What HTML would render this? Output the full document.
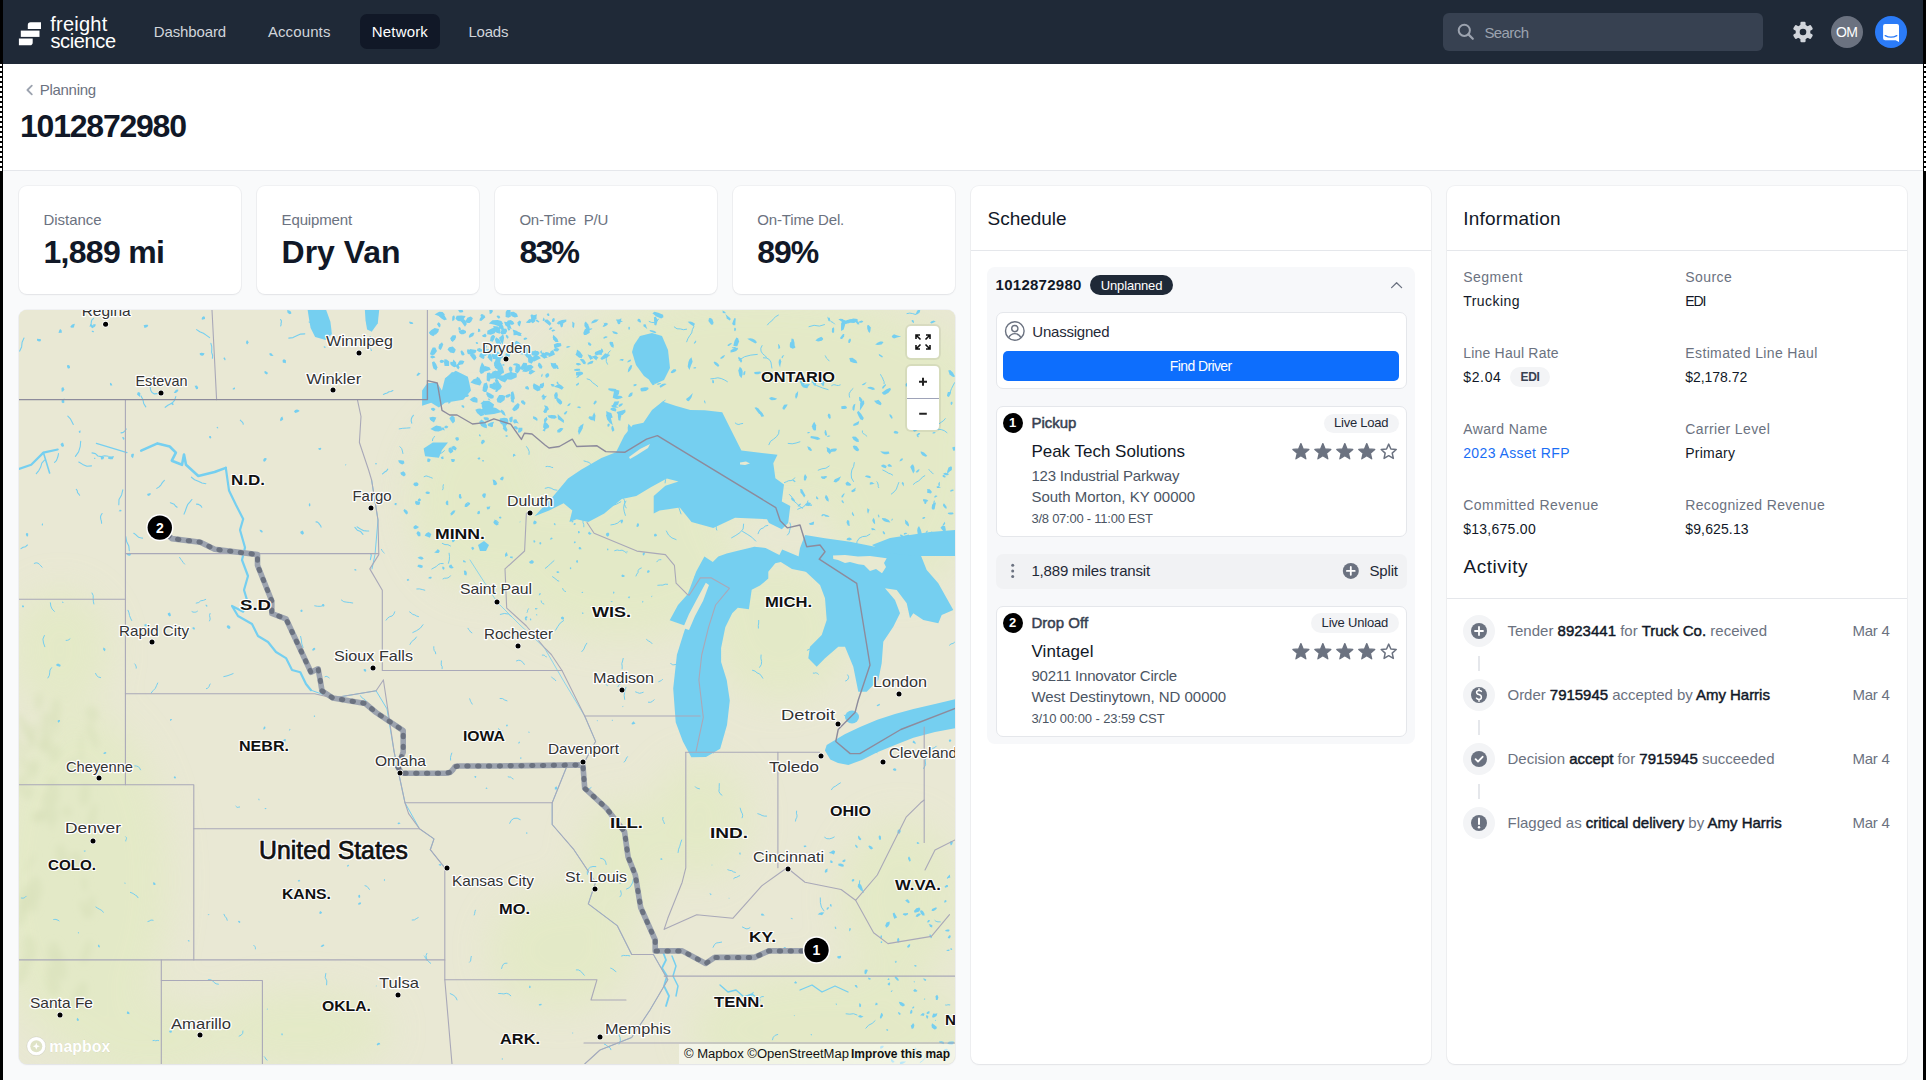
<!DOCTYPE html>
<html><head><meta charset="utf-8">
<style>
*{box-sizing:border-box;margin:0;padding:0}
html,body{width:1926px;height:1080px;overflow:hidden;background:#000;font-family:"Liberation Sans",sans-serif}
#pg{position:absolute;left:3px;top:0;width:1920px;height:1080px;background:#f9fafb;overflow:hidden}
.a{position:absolute}
.t{position:absolute;white-space:pre;font-family:"Liberation Sans",sans-serif}
.card{position:absolute;background:#fff;border-radius:8px;box-shadow:0 0 0 1px rgba(17,24,39,0.04),0 1px 2px rgba(17,24,39,0.06)}
</style></head><body>
<div id="pg"></div>
<!-- everything positioned in page (screenshot) coordinates -->
<div class="a" style="left:0;top:0;width:1926px;height:1080px">
  <!-- header -->
  <div class="a" style="left:3px;top:0;width:1920px;height:64px;background:#1f2937"></div>
  <!-- logo mark -->
  <svg class="a" style="left:0;top:0" width="60" height="64" viewBox="0 0 60 64">
    <path d="M30.6 22.3 H41 V28.9 H27.8 V25.1 A2.8 2.8 0 0 1 30.6 22.3 Z" fill="#fff"/>
    <rect x="20.8" y="30.6" width="18.7" height="6.3" fill="#fff"/>
    <path d="M18.9 38.6 H32.7 V42.4 A2.8 2.8 0 0 1 29.9 45.2 H18.9 Z" fill="#fff"/>
  </svg>
  <div class="a" style="left:360px;top:14px;width:80px;height:35px;border-radius:7px;background:#111827"></div>
  <!-- search -->
  <div class="a" style="left:1443px;top:13px;width:320px;height:38px;border-radius:6px;background:#374151"></div>
  <svg class="a" style="left:1456px;top:22px" width="20" height="20" viewBox="0 0 20 20">
    <circle cx="8.3" cy="8.3" r="5.6" fill="none" stroke="#9ca3af" stroke-width="2"/>
    <line x1="12.4" y1="12.4" x2="16.8" y2="16.8" stroke="#9ca3af" stroke-width="2.2" stroke-linecap="round"/>
  </svg>
  <!-- gear -->
  <svg class="a" style="left:1792px;top:21px" width="22" height="22" viewBox="-11 -11 22 22">
    <g fill="#d1d5db"><rect x="-2.6" y="-10.2" width="5.2" height="5" rx="1.2" transform="rotate(0)"/><rect x="-2.6" y="-10.2" width="5.2" height="5" rx="1.2" transform="rotate(60)"/><rect x="-2.6" y="-10.2" width="5.2" height="5" rx="1.2" transform="rotate(120)"/><rect x="-2.6" y="-10.2" width="5.2" height="5" rx="1.2" transform="rotate(180)"/><rect x="-2.6" y="-10.2" width="5.2" height="5" rx="1.2" transform="rotate(240)"/><rect x="-2.6" y="-10.2" width="5.2" height="5" rx="1.2" transform="rotate(300)"/><circle r="7.4"/></g>
    <circle r="3.3" fill="#1f2937"/>
  </svg>
  <!-- avatar -->
  <div class="a" style="left:1831px;top:16px;width:32px;height:32px;border-radius:50%;background:#6b7280"></div>
  <!-- chat -->
  <div class="a" style="left:1875px;top:16px;width:32px;height:32px;border-radius:50%;background:#2b7bf7"></div>
  <svg class="a" style="left:1875px;top:16px" width="32" height="32" viewBox="0 0 32 32">
    <path d="M8.1 9.9 Q8.1 7.9 10.1 7.9 H22 Q24 7.9 24 9.9 V26.1 L20.6 24.2 H10.1 Q8.1 24.2 8.1 22.2 Z" fill="#fff"/>
    <path d="M10.2 19.6 Q16 22.8 21.8 19.6" fill="none" stroke="#2b7bf7" stroke-width="1.3" stroke-linecap="round"/>
  </svg>

  <!-- page header -->
  <div class="a" style="left:3px;top:64px;width:1920px;height:107px;background:#fff;border-bottom:1px solid #e5e7eb"></div>
  <div class="a" style="left:0;top:64px;width:3px;height:108px;background:#fff"></div><div class="a" style="left:2px;top:64px;width:1px;height:108px;background:#000"></div><div class="a" style="left:0;top:66px;width:2px;height:106px;background:repeating-linear-gradient(180deg,#000 0 2px,transparent 2px 5px)"></div><div class="a" style="left:1923px;top:64px;width:3px;height:108px;background:#fff"></div><div class="a" style="left:1923px;top:64px;width:1px;height:108px;background:#000"></div><div class="a" style="left:1924px;top:66px;width:2px;height:106px;background:repeating-linear-gradient(180deg,#000 0 2px,transparent 2px 5px)"></div>
  <svg class="a" style="left:22px;top:82px" width="14" height="16" viewBox="0 0 14 16">
    <path d="M9.8 3.6 L5.4 8 L9.8 12.4" fill="none" stroke="#9ca3af" stroke-width="1.8" stroke-linecap="round" stroke-linejoin="round"/>
  </svg>

  <!-- stat cards -->
  <div class="card" style="left:19px;top:186px;width:222px;height:108px"></div>
  <div class="card" style="left:257px;top:186px;width:222px;height:108px"></div>
  <div class="card" style="left:495px;top:186px;width:222px;height:108px"></div>
  <div class="card" style="left:733px;top:186px;width:222px;height:108px"></div>

  <!-- map card -->
  <div class="card" style="left:19px;top:310px;width:936px;height:754px;overflow:hidden;background:#e8e9d1">
    <svg style="position:absolute;left:0;top:0" width="936" height="754" viewBox="19 310 936 754" font-family="Liberation Sans, sans-serif"><rect x="19" y="310" width="936" height="754" fill="#e9e8d4"/><defs><filter id="blur" x="-50%" y="-50%" width="200%" height="200%"><feGaussianBlur stdDeviation="18"/></filter><filter id="blur2" x="-50%" y="-50%" width="200%" height="200%"><feGaussianBlur stdDeviation="3"/></filter></defs><g filter="url(#blur)" opacity="0.75"><ellipse cx="760" cy="400" rx="230" ry="110" fill="#e2eac3"/><ellipse cx="620" cy="560" rx="120" ry="80" fill="#e2eac3"/><ellipse cx="780" cy="630" rx="70" ry="70" fill="#e2eac3"/><ellipse cx="480" cy="500" rx="70" ry="90" fill="#e2eac3"/><ellipse cx="900" cy="470" rx="80" ry="120" fill="#e2eac3"/><ellipse cx="560" cy="950" rx="70" ry="60" fill="#e2eac3"/><ellipse cx="830" cy="1030" rx="140" ry="60" fill="#e2eac3"/><ellipse cx="900" cy="900" rx="60" ry="80" fill="#e2eac3"/><ellipse cx="620" cy="860" rx="40" ry="60" fill="#e2eac3"/><ellipse cx="300" cy="1030" rx="90" ry="40" fill="#e2eac3"/><ellipse cx="700" cy="820" rx="50" ry="60" fill="#e2eac3"/><ellipse cx="80" cy="880" rx="90" ry="170" fill="#e2eac3"/><ellipse cx="60" cy="650" rx="50" ry="60" fill="#e2eac3"/><ellipse cx="150" cy="1040" rx="80" ry="40" fill="#e2eac3"/></g><g filter="url(#blur2)"><ellipse cx="43.3" cy="745.3" rx="5.3" ry="5.9" fill="#d8dfb9" opacity="0.5" transform="rotate(2 43.3 745.3)"/><ellipse cx="46.4" cy="717.4" rx="4.5" ry="5.4" fill="#d8dfb9" opacity="0.5" transform="rotate(-4 46.4 717.4)"/><ellipse cx="24.2" cy="727.2" rx="4.1" ry="14.9" fill="#d8dfb9" opacity="0.5" transform="rotate(-23 24.2 727.2)"/><ellipse cx="35.7" cy="888.2" rx="6.7" ry="11.9" fill="#d8dfb9" opacity="0.5" transform="rotate(-6 35.7 888.2)"/><ellipse cx="92.2" cy="714.0" rx="6.3" ry="8.5" fill="#d8dfb9" opacity="0.5" transform="rotate(-21 92.2 714.0)"/><ellipse cx="27.8" cy="792.5" rx="6.1" ry="7.2" fill="#d8dfb9" opacity="0.5" transform="rotate(5 27.8 792.5)"/><ellipse cx="66.9" cy="811.7" rx="4.7" ry="5.8" fill="#d8dfb9" opacity="0.5" transform="rotate(-26 66.9 811.7)"/><ellipse cx="34.4" cy="904.1" rx="4.1" ry="8.8" fill="#d8dfb9" opacity="0.5" transform="rotate(5 34.4 904.1)"/><ellipse cx="53.0" cy="789.9" rx="6.0" ry="13.4" fill="#d8dfb9" opacity="0.5" transform="rotate(-15 53.0 789.9)"/><ellipse cx="62.1" cy="857.6" rx="6.4" ry="13.8" fill="#d8dfb9" opacity="0.5" transform="rotate(-13 62.1 857.6)"/><ellipse cx="92.5" cy="735.4" rx="4.1" ry="14.1" fill="#d8dfb9" opacity="0.5" transform="rotate(-21 92.5 735.4)"/><ellipse cx="55.7" cy="711.8" rx="5.3" ry="14.2" fill="#d8dfb9" opacity="0.5" transform="rotate(4 55.7 711.8)"/><ellipse cx="84.7" cy="794.1" rx="5.5" ry="12.1" fill="#d8dfb9" opacity="0.5" transform="rotate(5 84.7 794.1)"/><ellipse cx="53.2" cy="952.0" rx="6.7" ry="10.7" fill="#d8dfb9" opacity="0.5" transform="rotate(10 53.2 952.0)"/><ellipse cx="23.6" cy="910.4" rx="5.2" ry="16.9" fill="#d8dfb9" opacity="0.5" transform="rotate(19 23.6 910.4)"/><ellipse cx="40.3" cy="815.7" rx="5.3" ry="5.3" fill="#d8dfb9" opacity="0.5" transform="rotate(-2 40.3 815.7)"/><ellipse cx="31.6" cy="735.1" rx="2.3" ry="14.2" fill="#d8dfb9" opacity="0.5" transform="rotate(-22 31.6 735.1)"/><ellipse cx="37.6" cy="817.3" rx="6.4" ry="6.0" fill="#d8dfb9" opacity="0.5" transform="rotate(-3 37.6 817.3)"/><ellipse cx="60.2" cy="965.0" rx="6.1" ry="15.4" fill="#d8dfb9" opacity="0.5" transform="rotate(-13 60.2 965.0)"/><ellipse cx="50.1" cy="807.6" rx="6.4" ry="16.5" fill="#d8dfb9" opacity="0.5" transform="rotate(-21 50.1 807.6)"/><ellipse cx="32.2" cy="769.6" rx="3.2" ry="10.8" fill="#d8dfb9" opacity="0.5" transform="rotate(5 32.2 769.6)"/><ellipse cx="38.7" cy="701.2" rx="4.1" ry="9.4" fill="#d8dfb9" opacity="0.5" transform="rotate(4 38.7 701.2)"/><ellipse cx="90.5" cy="907.1" rx="4.6" ry="12.4" fill="#d8dfb9" opacity="0.5" transform="rotate(11 90.5 907.1)"/><ellipse cx="23.0" cy="969.9" rx="5.9" ry="15.5" fill="#d8dfb9" opacity="0.5" transform="rotate(18 23.0 969.9)"/><ellipse cx="48.4" cy="819.7" rx="2.5" ry="12.6" fill="#d8dfb9" opacity="0.5" transform="rotate(-26 48.4 819.7)"/><ellipse cx="24.1" cy="762.6" rx="2.8" ry="9.1" fill="#d8dfb9" opacity="0.5" transform="rotate(-27 24.1 762.6)"/><ellipse cx="19.0" cy="745.4" rx="2.5" ry="9.4" fill="#d8dfb9" opacity="0.5" transform="rotate(-28 19.0 745.4)"/><ellipse cx="84.6" cy="884.2" rx="2.7" ry="8.0" fill="#d8dfb9" opacity="0.5" transform="rotate(-9 84.6 884.2)"/><ellipse cx="46.3" cy="736.9" rx="6.2" ry="16.9" fill="#d8dfb9" opacity="0.5" transform="rotate(-2 46.3 736.9)"/><ellipse cx="55.3" cy="725.8" rx="2.5" ry="9.1" fill="#d8dfb9" opacity="0.5" transform="rotate(-14 55.3 725.8)"/><ellipse cx="81.2" cy="748.4" rx="2.1" ry="16.4" fill="#d8dfb9" opacity="0.5" transform="rotate(2 81.2 748.4)"/><ellipse cx="30.0" cy="863.0" rx="2.1" ry="11.3" fill="#d8dfb9" opacity="0.5" transform="rotate(29 30.0 863.0)"/><ellipse cx="83.7" cy="908.9" rx="3.3" ry="9.4" fill="#d8dfb9" opacity="0.5" transform="rotate(-20 83.7 908.9)"/><ellipse cx="76.9" cy="859.8" rx="5.9" ry="9.0" fill="#d8dfb9" opacity="0.5" transform="rotate(-17 76.9 859.8)"/><ellipse cx="79.9" cy="995.5" rx="6.3" ry="14.7" fill="#d8dfb9" opacity="0.5" transform="rotate(19 79.9 995.5)"/><ellipse cx="74.5" cy="768.0" rx="4.6" ry="9.3" fill="#d8dfb9" opacity="0.5" transform="rotate(-28 74.5 768.0)"/><ellipse cx="21.1" cy="783.8" rx="3.3" ry="13.3" fill="#d8dfb9" opacity="0.5" transform="rotate(27 21.1 783.8)"/><ellipse cx="52.5" cy="981.1" rx="6.9" ry="16.5" fill="#d8dfb9" opacity="0.5" transform="rotate(-8 52.5 981.1)"/><ellipse cx="35.5" cy="768.1" rx="3.0" ry="7.5" fill="#d8dfb9" opacity="0.5" transform="rotate(7 35.5 768.1)"/><ellipse cx="86.5" cy="952.1" rx="4.4" ry="12.8" fill="#d8dfb9" opacity="0.5" transform="rotate(18 86.5 952.1)"/><ellipse cx="25.4" cy="898.2" rx="6.5" ry="14.4" fill="#d8dfb9" opacity="0.5" transform="rotate(15 25.4 898.2)"/><ellipse cx="54.9" cy="753.6" rx="5.9" ry="9.0" fill="#d8dfb9" opacity="0.5" transform="rotate(18 54.9 753.6)"/><ellipse cx="91.9" cy="818.8" rx="4.0" ry="16.4" fill="#d8dfb9" opacity="0.5" transform="rotate(13 91.9 818.8)"/><ellipse cx="31.8" cy="738.1" rx="2.8" ry="15.9" fill="#d8dfb9" opacity="0.5" transform="rotate(18 31.8 738.1)"/><ellipse cx="30.0" cy="948.0" rx="6.9" ry="12.9" fill="#d8dfb9" opacity="0.5" transform="rotate(-9 30.0 948.0)"/></g><path d="M489.3,381.8 L486.7,380.5 L486.7,376.6 L487.1,373.1 L489.7,372.4 L492.2,375.5 L490.5,378.9Z" fill="#75cff0" /><path d="M467.9,323.0 L465.0,322.3 L467.3,317.8 L470.8,316.6 L472.9,318.2 L471.3,321.4 L469.6,322.9Z" fill="#75cff0" /><path d="M499.6,318.0 L498.9,318.7 L497.6,317.7 L496.5,316.0 L497.7,315.5 L499.3,315.8 L500.3,317.3Z" fill="#75cff0" /><path d="M512.8,364.9 L514.2,363.4 L516.7,363.2 L517.9,364.3 L517.8,365.4 L516.6,366.1 L515.2,365.6Z" fill="#75cff0" /><path d="M531.7,363.7 L528.3,362.3 L528.0,358.1 L527.7,355.6 L529.3,352.6 L531.7,356.3 L533.7,360.6Z" fill="#75cff0" /><path d="M479.4,320.6 L479.8,318.8 L481.0,316.9 L484.2,314.9 L485.4,317.2 L483.0,319.6 L481.2,321.0Z" fill="#75cff0" /><path d="M446.9,319.5 L444.2,320.2 L441.5,318.4 L438.6,316.0 L441.3,315.1 L443.8,314.2 L445.4,316.9Z" fill="#75cff0" /><path d="M481.8,335.8 L483.4,334.7 L485.2,333.6 L486.2,334.9 L486.6,335.9 L485.5,337.3 L483.2,336.9Z" fill="#75cff0" /><path d="M444.8,430.6 L443.2,430.1 L442.0,429.2 L441.9,428.1 L442.4,427.5 L443.7,427.4 L444.3,428.9Z" fill="#75cff0" /><path d="M505.3,355.0 L506.0,353.3 L508.7,352.2 L510.0,353.8 L510.1,354.9 L509.3,356.9 L506.1,356.7Z" fill="#75cff0" /><path d="M459.5,333.3 L458.6,330.8 L463.0,329.4 L466.0,330.9 L465.9,333.1 L463.3,334.3 L461.1,334.2Z" fill="#75cff0" /><path d="M558.5,342.1 L555.5,341.9 L553.2,339.4 L552.8,337.3 L553.2,334.8 L555.9,337.2 L557.5,338.9Z" fill="#75cff0" /><path d="M505.7,415.9 L502.8,414.4 L501.4,412.7 L500.5,410.8 L501.5,409.4 L503.5,411.0 L504.7,412.7Z" fill="#75cff0" /><path d="M479.0,380.9 L477.5,380.6 L476.6,378.8 L476.6,377.2 L477.7,376.8 L478.5,378.1 L478.7,379.1Z" fill="#75cff0" /><path d="M430.0,419.5 L429.4,417.5 L432.9,416.8 L436.3,417.5 L435.4,419.8 L433.9,422.4 L430.9,420.6Z" fill="#75cff0" /><path d="M497.4,402.3 L496.6,399.2 L499.2,394.9 L502.6,395.1 L505.2,395.9 L504.6,399.9 L500.6,403.1Z" fill="#75cff0" /><path d="M483.1,409.6 L481.8,406.8 L481.7,403.2 L483.9,400.3 L485.6,402.5 L487.4,404.5 L486.3,409.3Z" fill="#75cff0" /><path d="M542.4,399.5 L542.3,397.7 L543.3,395.4 L545.1,395.9 L547.0,395.8 L545.4,397.8 L544.2,399.7Z" fill="#75cff0" /><path d="M492.6,341.8 L490.0,340.9 L490.7,337.0 L491.9,335.6 L493.4,334.7 L495.2,336.6 L494.0,339.4Z" fill="#75cff0" /><path d="M452.9,423.5 L450.9,420.9 L449.4,418.2 L450.9,416.4 L452.4,415.4 L454.6,417.2 L455.0,421.3Z" fill="#75cff0" /><path d="M545.7,358.1 L544.2,358.8 L541.7,356.8 L541.3,353.5 L543.4,352.5 L546.3,353.7 L546.5,356.8Z" fill="#75cff0" /><path d="M453.7,365.4 L452.5,366.1 L450.7,364.9 L450.3,363.4 L450.4,361.8 L452.7,362.1 L453.8,364.1Z" fill="#75cff0" /><path d="M444.9,314.5 L442.3,316.4 L438.6,315.9 L434.6,314.6 L437.4,312.7 L439.3,311.8 L442.6,312.1Z" fill="#75cff0" /><path d="M434.5,410.2 L434.1,411.3 L432.2,410.5 L430.9,409.2 L431.5,408.0 L433.4,407.8 L435.6,409.0Z" fill="#75cff0" /><path d="M520.5,334.9 L519.8,336.1 L517.2,335.3 L517.0,333.4 L517.5,332.2 L519.3,332.2 L521.8,333.6Z" fill="#75cff0" /><path d="M499.3,388.5 L496.3,387.8 L495.9,383.7 L494.6,379.6 L497.5,379.2 L499.1,382.6 L500.2,385.4Z" fill="#75cff0" /><path d="M510.6,422.6 L509.3,420.9 L509.3,417.9 L511.1,416.7 L512.7,416.7 L512.6,419.0 L512.4,421.5Z" fill="#75cff0" /><path d="M540.4,390.2 L537.4,391.2 L533.4,388.8 L532.9,385.6 L533.8,383.3 L537.1,384.9 L540.5,387.0Z" fill="#75cff0" /><path d="M541.6,353.5 L540.5,353.2 L540.2,351.6 L540.8,351.0 L541.5,349.9 L541.8,351.5 L542.5,352.9Z" fill="#75cff0" /><path d="M455.1,351.5 L454.0,353.2 L450.2,352.4 L447.5,349.5 L449.1,347.2 L452.8,346.5 L455.7,349.5Z" fill="#75cff0" /><path d="M553.2,322.1 L552.0,321.8 L552.0,319.7 L553.0,318.3 L554.3,317.9 L554.8,319.9 L554.2,321.5Z" fill="#75cff0" /><path d="M484.2,415.0 L480.8,416.3 L477.0,413.0 L475.3,409.8 L477.7,408.8 L480.5,408.5 L483.2,411.4Z" fill="#75cff0" /><path d="M508.5,317.7 L505.6,316.9 L505.7,312.1 L507.6,309.0 L510.4,308.4 L510.6,312.7 L510.9,316.5Z" fill="#75cff0" /><path d="M486.8,428.2 L483.9,427.4 L481.2,425.9 L479.1,421.9 L481.4,419.6 L485.2,422.2 L486.9,425.4Z" fill="#75cff0" /><path d="M460.1,386.4 L456.0,386.1 L453.3,385.8 L451.5,383.8 L451.0,380.9 L455.0,381.6 L458.0,383.3Z" fill="#75cff0" /><path d="M514.3,324.1 L511.8,324.7 L509.3,324.0 L506.8,322.2 L507.8,320.4 L510.7,320.3 L513.4,321.8Z" fill="#75cff0" /><path d="M497.9,331.3 L497.3,330.0 L497.6,328.0 L499.1,327.0 L500.5,327.2 L499.9,329.2 L499.3,331.1Z" fill="#75cff0" /><path d="M537.2,421.1 L535.2,419.8 L533.2,418.8 L533.0,416.3 L534.9,416.8 L536.1,417.3 L537.6,419.1Z" fill="#75cff0" /><path d="M465.0,326.8 L462.8,323.8 L461.2,321.4 L461.3,317.6 L463.8,319.2 L465.5,320.5 L466.8,324.0Z" fill="#75cff0" /><path d="M548.4,428.3 L547.6,427.3 L547.2,425.7 L548.1,425.0 L548.8,425.2 L549.2,426.0 L549.0,426.9Z" fill="#75cff0" /><path d="M504.0,372.9 L502.6,373.6 L499.7,373.7 L497.3,371.0 L498.6,368.8 L501.9,370.3 L503.4,371.4Z" fill="#75cff0" /><path d="M555.7,368.8 L553.3,368.7 L551.3,365.9 L550.6,362.7 L553.1,363.2 L555.6,363.1 L557.6,366.9Z" fill="#75cff0" /><path d="M454.4,367.3 L452.7,366.6 L451.0,364.3 L452.3,362.6 L453.5,359.5 L456.1,362.5 L456.6,366.6Z" fill="#75cff0" /><path d="M541.0,388.2 L539.3,387.3 L540.1,384.1 L541.9,383.4 L543.9,382.6 L544.1,385.4 L542.8,388.1Z" fill="#75cff0" /><path d="M531.0,360.6 L531.7,357.4 L535.8,355.1 L539.0,356.2 L540.9,358.2 L537.2,360.1 L534.3,361.4Z" fill="#75cff0" /><path d="M489.7,313.9 L489.5,312.0 L489.3,309.6 L491.3,308.5 L492.4,309.7 L492.9,311.4 L491.4,313.4Z" fill="#75cff0" /><path d="M496.8,361.9 L495.1,358.8 L496.2,353.6 L499.7,354.0 L502.7,353.0 L503.1,357.1 L500.0,359.8Z" fill="#75cff0" /><path d="M482.7,317.3 L481.9,317.3 L480.4,316.1 L480.9,314.5 L482.0,314.1 L483.6,314.8 L483.7,316.9Z" fill="#75cff0" /><path d="M563.8,387.6 L561.9,389.8 L558.4,388.0 L554.0,386.8 L556.9,385.1 L559.1,383.9 L561.6,385.6Z" fill="#75cff0" /><path d="M493.0,383.6 L493.3,382.7 L494.6,382.3 L495.6,382.8 L495.6,383.5 L495.0,384.3 L493.5,384.3Z" fill="#75cff0" /><path d="M468.8,396.1 L467.8,396.8 L466.4,397.0 L464.2,396.7 L464.9,395.3 L466.2,394.0 L468.7,394.7Z" fill="#75cff0" /><path d="M442.6,430.1 L438.7,431.4 L434.9,431.2 L430.4,429.0 L433.5,426.9 L436.2,425.6 L441.1,426.5Z" fill="#75cff0" /><path d="M519.6,369.1 L521.4,366.0 L523.2,362.8 L526.8,362.9 L527.2,365.2 L525.5,367.4 L522.7,369.9Z" fill="#75cff0" /><path d="M446.6,366.1 L444.6,365.9 L444.0,362.7 L444.4,359.2 L446.7,359.6 L449.2,361.5 L449.1,366.0Z" fill="#75cff0" /><path d="M523.4,339.3 L524.0,338.1 L525.5,337.6 L526.5,337.8 L527.4,338.5 L526.2,339.5 L524.6,339.9Z" fill="#75cff0" /><path d="M514.3,402.4 L512.6,402.5 L510.7,401.1 L511.3,399.8 L511.7,399.3 L512.8,399.4 L513.8,400.6Z" fill="#75cff0" /><path d="M513.1,322.8 L512.9,324.6 L509.8,324.2 L507.6,322.5 L508.6,320.9 L510.8,320.2 L512.8,321.5Z" fill="#75cff0" /><path d="M477.6,400.1 L477.4,402.7 L473.0,402.0 L469.7,399.7 L472.0,397.8 L474.4,396.8 L477.2,398.2Z" fill="#75cff0" /><path d="M532.1,354.4 L532.8,352.5 L536.2,351.6 L539.7,352.8 L538.4,355.1 L536.1,356.2 L533.8,355.5Z" fill="#75cff0" /><path d="M543.4,321.0 L542.6,320.4 L543.0,319.0 L543.6,317.5 L544.3,318.5 L544.6,319.3 L544.4,320.7Z" fill="#75cff0" /><path d="M438.8,349.1 L438.5,347.1 L439.3,344.6 L442.0,342.3 L443.2,344.4 L442.3,346.9 L440.8,350.1Z" fill="#75cff0" /><path d="M499.7,421.4 L499.7,418.5 L504.2,417.7 L507.2,418.2 L508.0,420.3 L506.4,423.6 L501.1,424.2Z" fill="#75cff0" /><path d="M463.3,355.6 L461.8,355.3 L461.0,353.5 L460.5,351.4 L461.9,350.3 L463.5,352.2 L464.7,354.6Z" fill="#75cff0" /><path d="M500.1,332.4 L501.3,330.6 L503.1,328.5 L506.3,328.8 L507.2,330.9 L505.6,333.9 L501.3,334.3Z" fill="#75cff0" /><path d="M532.9,319.0 L532.9,317.7 L533.8,315.3 L536.9,314.3 L536.5,316.9 L536.6,318.9 L534.1,319.5Z" fill="#75cff0" /><path d="M529.0,389.6 L527.3,389.6 L525.4,388.8 L525.2,387.1 L525.9,386.4 L527.6,386.0 L529.0,387.9Z" fill="#75cff0" /><path d="M491.0,378.6 L491.4,375.2 L492.4,371.8 L495.7,370.6 L498.0,371.7 L497.2,375.4 L494.2,378.4Z" fill="#75cff0" /><path d="M545.2,429.2 L543.1,427.6 L543.5,424.0 L544.8,421.8 L546.4,422.7 L548.2,424.2 L547.8,428.3Z" fill="#75cff0" /><path d="M479.2,331.8 L477.9,332.2 L478.0,330.0 L478.0,328.7 L478.9,328.8 L480.1,329.3 L480.4,331.4Z" fill="#75cff0" /><path d="M452.3,321.3 L452.2,318.4 L452.3,316.7 L453.3,315.4 L454.5,315.7 L454.8,317.4 L454.4,320.0Z" fill="#75cff0" /><path d="M508.3,338.0 L507.4,338.8 L506.3,337.2 L505.7,335.8 L506.4,334.7 L508.0,335.8 L508.6,337.2Z" fill="#75cff0" /><path d="M544.8,423.2 L543.9,421.1 L544.2,419.1 L545.1,418.2 L546.8,416.7 L547.4,419.3 L546.3,421.3Z" fill="#75cff0" /><path d="M496.0,372.0 L497.4,371.0 L498.9,371.0 L500.6,371.2 L500.5,372.4 L499.3,373.6 L496.9,373.3Z" fill="#75cff0" /><path d="M509.6,330.2 L508.6,330.8 L507.6,329.1 L507.3,327.6 L508.1,326.4 L509.4,328.1 L510.3,329.4Z" fill="#75cff0" /><path d="M448.1,403.4 L448.2,402.3 L449.5,401.9 L450.3,401.7 L451.0,402.0 L450.1,402.8 L449.2,403.4Z" fill="#75cff0" /><path d="M488.3,425.9 L487.6,423.9 L490.7,422.6 L494.1,421.7 L493.0,424.3 L493.0,426.6 L490.0,426.5Z" fill="#75cff0" /><path d="M499.2,373.9 L499.4,372.9 L500.5,372.3 L501.7,372.0 L502.3,372.7 L501.8,374.0 L500.1,374.3Z" fill="#75cff0" /><path d="M519.8,326.5 L517.9,325.1 L517.4,322.2 L518.7,321.3 L519.7,320.4 L521.2,321.7 L520.5,323.9Z" fill="#75cff0" /><path d="M501.6,365.0 L502.7,364.5 L503.7,364.0 L504.4,364.6 L504.5,365.3 L503.7,365.8 L502.6,365.6Z" fill="#75cff0" /><path d="M475.8,359.1 L474.2,360.6 L472.0,357.9 L469.7,354.7 L472.2,353.8 L475.1,354.5 L476.4,357.4Z" fill="#75cff0" /><path d="M539.5,321.7 L538.5,322.5 L537.0,321.8 L535.9,321.1 L535.6,319.8 L537.4,319.8 L538.4,320.7Z" fill="#75cff0" /><path d="M459.8,330.0 L458.8,330.6 L458.4,328.8 L458.5,327.4 L459.5,327.0 L460.6,328.0 L460.9,329.9Z" fill="#75cff0" /><path d="M482.8,349.9 L482.1,351.5 L479.2,352.1 L477.0,350.6 L477.3,348.8 L479.6,347.9 L481.3,349.0Z" fill="#75cff0" /><path d="M476.1,352.1 L474.6,353.5 L471.2,353.3 L468.7,350.9 L470.0,348.9 L473.0,349.4 L476.4,349.9Z" fill="#75cff0" /><path d="M547.4,377.6 L545.9,377.7 L545.2,375.0 L546.7,373.4 L548.2,373.0 L549.4,375.1 L548.3,377.0Z" fill="#75cff0" /><path d="M554.4,385.7 L553.9,386.6 L551.9,386.5 L551.2,385.3 L550.6,383.9 L552.7,384.1 L554.3,384.6Z" fill="#75cff0" /><path d="M444.3,427.4 L444.7,426.3 L446.2,425.6 L447.3,426.0 L448.4,426.8 L447.1,428.2 L445.1,428.3Z" fill="#75cff0" /><path d="M511.7,329.2 L508.2,327.4 L505.4,325.6 L504.0,321.8 L507.1,321.9 L509.7,322.3 L510.3,325.2Z" fill="#75cff0" /><path d="M428.8,332.6 L431.3,330.1 L434.7,328.1 L439.0,329.1 L438.3,332.0 L435.9,334.5 L431.0,335.2Z" fill="#75cff0" /><path d="M434.6,335.1 L433.2,336.2 L431.1,334.9 L429.3,333.5 L430.4,332.4 L432.3,331.9 L434.1,333.5Z" fill="#75cff0" /><path d="M518.0,316.8 L514.8,317.4 L511.7,316.2 L510.2,314.0 L510.6,311.9 L513.7,311.8 L516.9,313.8Z" fill="#75cff0" /><path d="M522.2,371.4 L524.2,367.7 L527.3,365.3 L531.1,364.8 L533.7,367.0 L530.2,370.4 L526.2,371.9Z" fill="#75cff0" /><path d="M489.1,419.0 L487.9,420.5 L485.2,420.2 L483.7,418.8 L483.7,417.2 L485.9,417.2 L488.1,417.5Z" fill="#75cff0" /><path d="M439.1,327.6 L438.2,326.1 L437.0,324.2 L438.3,322.2 L439.7,322.9 L440.6,324.4 L440.4,326.6Z" fill="#75cff0" /><path d="M455.5,318.8 L456.7,315.7 L461.3,315.5 L465.6,316.1 L463.9,318.8 L462.2,321.4 L457.9,320.9Z" fill="#75cff0" /><path d="M551.4,323.5 L549.7,325.8 L546.4,323.0 L544.4,321.5 L544.9,319.8 L547.5,319.5 L549.5,321.3Z" fill="#75cff0" /><path d="M547.7,410.5 L546.1,409.2 L545.3,408.0 L544.0,405.3 L546.0,405.7 L547.6,406.6 L549.0,409.2Z" fill="#75cff0" /><path d="M558.7,369.0 L557.0,368.9 L556.1,367.0 L555.0,365.2 L556.5,365.1 L557.8,365.6 L558.2,367.0Z" fill="#75cff0" /><path d="M543.7,430.9 L542.5,430.5 L543.8,428.9 L544.5,428.1 L545.9,427.7 L545.5,429.5 L544.9,431.6Z" fill="#75cff0" /><path d="M541.6,397.6 L541.7,396.0 L542.6,394.9 L543.5,394.3 L544.2,394.7 L544.4,395.9 L543.1,396.7Z" fill="#75cff0" /><path d="M450.9,340.3 L450.2,338.2 L452.6,335.2 L455.7,335.2 L456.1,337.3 L455.2,339.3 L452.6,342.1Z" fill="#75cff0" /><path d="M521.6,344.6 L518.3,345.4 L515.3,345.2 L513.2,343.3 L514.9,342.1 L516.5,340.7 L518.9,342.3Z" fill="#75cff0" /><path d="M463.9,408.0 L462.6,407.4 L461.8,406.7 L461.3,405.5 L462.2,405.3 L463.4,405.2 L464.4,406.8Z" fill="#75cff0" /><path d="M436.3,370.5 L433.4,368.4 L432.5,365.4 L432.0,362.3 L434.1,361.2 L436.1,363.9 L437.4,367.3Z" fill="#75cff0" /><path d="M528.6,373.7 L529.3,371.6 L531.4,369.2 L533.3,370.5 L535.4,371.3 L532.9,373.0 L530.7,374.5Z" fill="#75cff0" /><path d="M456.6,366.0 L458.1,362.9 L459.8,360.4 L462.3,360.4 L464.4,361.3 L462.9,364.2 L460.1,364.8Z" fill="#75cff0" /><path d="M505.3,396.7 L505.7,395.3 L507.5,394.4 L510.0,393.7 L510.6,395.4 L509.0,397.3 L506.5,397.7Z" fill="#75cff0" /><path d="M532.8,323.3 L530.3,321.6 L531.8,317.5 L533.6,315.7 L535.6,315.5 L535.6,318.5 L535.1,321.5Z" fill="#75cff0" /><path d="M510.3,374.5 L508.9,374.4 L509.9,372.4 L510.7,371.3 L511.6,371.7 L512.5,372.9 L511.6,375.2Z" fill="#75cff0" /><path d="M533.2,319.3 L531.5,320.3 L531.1,317.4 L530.5,315.4 L531.8,314.2 L534.1,315.5 L533.7,318.1Z" fill="#75cff0" /><path d="M490.6,400.8 L489.3,400.2 L488.4,399.8 L488.1,398.9 L488.5,398.2 L489.4,398.8 L489.9,399.5Z" fill="#75cff0" /><path d="M561.9,403.7 L560.1,404.8 L557.7,402.6 L556.2,400.1 L556.8,397.3 L560.3,399.5 L562.2,401.7Z" fill="#75cff0" /><path d="M558.1,384.9 L557.3,384.0 L556.7,383.3 L556.6,382.0 L557.5,381.5 L558.4,382.7 L558.9,384.2Z" fill="#75cff0" /><path d="M492.1,362.1 L489.4,359.7 L487.7,357.2 L488.3,354.8 L489.8,352.9 L491.7,355.8 L492.4,358.5Z" fill="#75cff0" /><path d="M458.4,369.5 L456.8,368.1 L455.8,365.7 L457.1,364.6 L458.1,364.1 L458.8,365.6 L459.5,367.6Z" fill="#75cff0" /><path d="M478.1,343.6 L477.5,343.9 L476.2,343.7 L475.6,342.5 L476.5,342.1 L477.3,342.1 L478.0,342.9Z" fill="#75cff0" /><path d="M548.3,357.3 L549.9,353.6 L550.6,351.2 L553.1,350.0 L553.9,351.8 L555.0,354.4 L551.7,355.9Z" fill="#75cff0" /><path d="M530.6,373.5 L529.9,373.0 L529.5,372.3 L529.3,371.0 L530.2,371.4 L530.9,371.8 L531.2,372.9Z" fill="#75cff0" /><path d="M503.8,329.7 L501.0,329.8 L499.1,327.0 L498.3,324.9 L499.4,323.7 L502.0,323.7 L503.5,326.8Z" fill="#75cff0" /><path d="M481.4,415.4 L480.2,415.2 L479.4,414.2 L479.2,413.2 L479.5,411.8 L481.0,412.7 L482.3,414.5Z" fill="#75cff0" /><path d="M554.1,346.5 L553.7,344.4 L557.1,343.0 L561.0,343.3 L561.4,345.9 L557.9,347.3 L554.8,348.4Z" fill="#75cff0" /><path d="M444.1,361.8 L442.9,362.7 L440.8,362.9 L439.6,361.5 L440.0,360.5 L441.4,359.7 L443.6,360.3Z" fill="#75cff0" /><path d="M453.5,390.4 L452.6,391.2 L451.1,390.6 L449.5,389.8 L449.7,388.5 L451.6,388.3 L453.6,389.1Z" fill="#75cff0" /><path d="M435.4,357.4 L433.9,358.0 L432.1,358.4 L430.3,357.2 L430.9,355.8 L432.8,355.5 L434.5,356.2Z" fill="#75cff0" /><path d="M432.3,355.2 L429.9,354.3 L431.2,350.5 L432.7,347.5 L435.3,347.6 L437.0,351.1 L434.5,354.5Z" fill="#75cff0" /><path d="M503.2,427.2 L502.3,424.5 L503.1,421.4 L505.2,420.0 L508.0,419.3 L508.4,423.3 L505.7,425.9Z" fill="#75cff0" /><path d="M548.2,316.1 L547.4,315.6 L546.7,314.0 L547.9,313.4 L548.6,313.3 L549.1,314.3 L549.3,315.9Z" fill="#75cff0" /><path d="M461.3,312.5 L459.6,312.6 L458.1,310.1 L458.6,307.5 L460.4,306.7 L462.2,308.7 L463.3,311.9Z" fill="#75cff0" /><path d="M553.9,350.8 L553.6,349.3 L555.9,348.1 L558.2,348.3 L559.3,349.8 L557.3,351.6 L555.2,351.3Z" fill="#75cff0" /><path d="M511.9,371.4 L510.0,372.0 L508.6,369.0 L509.2,367.0 L510.5,366.4 L512.2,367.6 L512.5,369.8Z" fill="#75cff0" /><path d="M506.2,380.6 L505.1,382.5 L501.2,381.0 L496.8,378.0 L498.6,375.2 L503.4,375.6 L507.6,378.5Z" fill="#75cff0" /><path d="M521.8,336.2 L517.3,335.1 L513.5,335.3 L513.5,332.4 L512.6,329.5 L516.6,330.7 L519.6,332.8Z" fill="#75cff0" /><path d="M525.8,322.5 L527.4,321.1 L529.3,319.0 L532.6,319.6 L531.1,321.7 L530.1,323.1 L527.8,323.0Z" fill="#75cff0" /><path d="M490.5,377.8 L490.0,376.6 L490.4,373.6 L493.0,373.0 L494.3,373.9 L494.1,376.5 L491.9,378.7Z" fill="#75cff0" /><path d="M488.8,323.6 L492.5,320.3 L497.8,319.9 L501.4,321.0 L503.1,323.7 L498.8,326.2 L494.6,324.7Z" fill="#75cff0" /><path d="M482.3,355.5 L484.1,352.7 L485.7,349.1 L489.3,349.4 L490.9,351.1 L488.3,353.9 L485.2,356.0Z" fill="#75cff0" /><path d="M496.8,392.0 L495.1,391.7 L496.1,388.8 L496.9,386.9 L498.3,386.9 L499.4,389.0 L497.9,391.0Z" fill="#75cff0" /><path d="M502.6,344.5 L500.6,341.5 L499.0,337.8 L501.2,336.1 L503.1,333.7 L504.1,337.8 L503.6,340.6Z" fill="#75cff0" /><path d="M524.9,404.9 L522.6,404.1 L521.1,402.6 L521.0,401.1 L521.6,400.5 L523.3,400.3 L525.6,402.8Z" fill="#75cff0" /><path d="M542.0,368.6 L539.7,368.4 L537.9,365.7 L538.2,363.8 L539.0,362.4 L541.0,363.9 L542.3,366.4Z" fill="#75cff0" /><path d="M493.1,407.8 L491.2,411.0 L486.0,407.1 L480.4,403.2 L484.0,400.9 L488.9,400.8 L494.1,404.6Z" fill="#75cff0" /><path d="M482.4,349.6 L483.0,346.5 L483.2,343.1 L486.1,342.3 L487.2,343.7 L487.2,346.1 L485.1,349.9Z" fill="#75cff0" /><path d="M501.3,377.2 L505.1,374.0 L510.3,372.2 L516.8,373.2 L516.7,377.3 L511.2,379.8 L505.9,379.1Z" fill="#75cff0" /><path d="M501.9,386.6 L500.0,389.5 L494.2,389.7 L489.5,387.6 L489.6,384.2 L494.8,383.3 L500.0,383.6Z" fill="#75cff0" /><path d="M499.9,333.8 L496.5,332.7 L493.9,329.4 L493.2,325.9 L495.6,326.2 L498.0,326.6 L500.2,330.3Z" fill="#75cff0" /><path d="M500.4,346.6 L497.5,344.6 L495.8,342.4 L494.9,339.6 L496.1,337.3 L499.5,339.5 L501.2,343.7Z" fill="#75cff0" /><path d="M535.5,355.9 L534.5,354.4 L533.4,352.2 L534.7,350.4 L535.9,350.6 L536.9,352.2 L537.4,355.5Z" fill="#75cff0" /><path d="M473.7,354.7 L471.3,354.7 L467.8,354.1 L466.9,351.0 L467.7,348.9 L471.0,350.7 L473.6,352.5Z" fill="#75cff0" /><path d="M513.1,401.0 L510.7,399.3 L510.7,395.4 L511.0,392.3 L513.1,391.3 L514.3,394.8 L514.8,398.4Z" fill="#75cff0" /><path d="M514.0,411.3 L512.1,409.3 L514.9,405.4 L517.9,402.9 L519.6,404.6 L518.9,408.0 L516.5,410.3Z" fill="#75cff0" /><path d="M490.8,369.7 L487.6,370.7 L484.2,371.7 L481.8,369.5 L482.7,367.6 L485.0,366.0 L489.4,367.2Z" fill="#75cff0" /><path d="M487.2,334.2 L487.3,330.7 L492.2,328.3 L496.6,327.5 L496.5,330.4 L494.8,333.2 L490.8,334.7Z" fill="#75cff0" /><path d="M500.9,358.3 L498.5,359.3 L492.9,359.0 L491.3,354.4 L494.4,353.4 L497.6,351.4 L503.0,355.5Z" fill="#75cff0" /><path d="M529.8,355.7 L527.5,358.1 L523.2,353.3 L524.3,349.6 L525.0,345.5 L528.6,350.5 L531.0,353.6Z" fill="#75cff0" /><path d="M469.0,337.8 L468.9,336.0 L470.1,334.0 L472.1,332.7 L474.5,332.8 L473.2,336.1 L470.8,337.3Z" fill="#75cff0" /><path d="M517.5,373.6 L515.1,371.7 L515.5,367.0 L517.1,363.4 L519.4,364.2 L520.9,367.3 L519.6,371.1Z" fill="#75cff0" /><path d="M504.1,372.5 L499.4,370.9 L494.9,367.8 L493.9,362.9 L495.9,359.8 L500.9,363.0 L503.0,367.6Z" fill="#75cff0" /><path d="M494.8,376.7 L495.5,374.4 L498.1,372.3 L501.0,372.2 L501.8,373.8 L500.0,376.0 L496.8,377.9Z" fill="#75cff0" /><path d="M470.5,382.5 L473.6,379.3 L479.1,377.5 L480.8,380.6 L481.8,382.3 L480.0,385.4 L474.9,384.3Z" fill="#75cff0" /><path d="M483.9,392.0 L482.6,390.2 L482.9,387.2 L483.9,383.4 L486.8,382.6 L488.2,387.1 L486.4,392.0Z" fill="#75cff0" /><path d="M530.9,353.7 L531.9,351.3 L535.6,351.1 L538.0,351.1 L539.2,352.7 L537.1,355.0 L532.7,355.6Z" fill="#75cff0" /><path d="M517.3,353.2 L519.7,350.0 L522.9,348.6 L526.6,347.6 L527.3,349.8 L524.7,352.2 L521.7,352.9Z" fill="#75cff0" /><path d="M496.4,379.9 L494.8,377.5 L495.5,374.3 L496.6,372.1 L497.8,373.1 L499.4,374.5 L498.4,377.8Z" fill="#75cff0" /><path d="M480.9,374.0 L479.5,371.6 L479.9,367.7 L482.0,362.3 L484.2,365.6 L485.2,368.9 L483.5,373.0Z" fill="#75cff0" /><path d="M483.9,358.9 L482.0,358.5 L479.1,356.5 L479.9,353.9 L481.2,353.0 L483.6,353.9 L484.6,357.0Z" fill="#75cff0" /><path d="M504.9,380.2 L504.3,379.1 L504.6,376.3 L507.3,374.1 L508.7,375.8 L507.5,378.5 L506.3,380.7Z" fill="#75cff0" /><path d="M493.4,398.3 L490.9,398.8 L487.7,397.0 L486.4,394.4 L486.5,391.8 L490.3,393.5 L493.9,395.7Z" fill="#75cff0" /><path d="M494.1,366.1 L494.9,362.6 L496.1,359.6 L499.4,357.4 L500.8,359.4 L500.2,362.7 L497.2,365.6Z" fill="#75cff0" /><path d="M525.6,352.4 L523.1,354.5 L519.0,354.0 L514.6,353.0 L515.0,350.2 L519.5,350.3 L523.5,349.9Z" fill="#75cff0" /><path d="M500.1,350.7 L498.8,350.1 L497.8,348.1 L497.8,345.5 L499.4,345.6 L500.7,347.3 L502.5,350.8Z" fill="#75cff0" /><path d="M659.6,386.8 L660.0,385.4 L662.3,384.0 L664.6,383.5 L666.7,384.1 L663.4,386.1 L660.6,387.8Z" fill="#75cff0" /><path d="M641.4,344.1 L643.1,342.5 L644.5,341.2 L646.1,341.0 L648.2,341.2 L646.1,343.4 L642.9,344.8Z" fill="#75cff0" /><path d="M883.2,394.4 L881.8,392.7 L886.1,389.6 L890.2,387.7 L890.9,389.8 L888.5,392.8 L885.0,394.8Z" fill="#75cff0" /><path d="M727.6,345.9 L727.8,344.7 L729.7,343.4 L731.2,343.1 L731.9,343.7 L730.4,344.8 L728.9,346.0Z" fill="#75cff0" /><path d="M735.0,331.3 L734.3,330.8 L734.1,328.8 L734.9,327.4 L735.5,328.0 L736.1,329.0 L735.7,330.6Z" fill="#75cff0" /><path d="M656.4,332.2 L655.3,333.3 L652.3,332.3 L649.9,331.3 L649.7,329.9 L652.9,330.6 L654.5,331.0Z" fill="#75cff0" /><path d="M881.6,404.0 L880.4,405.2 L876.4,403.5 L874.0,400.8 L876.3,400.4 L878.4,399.8 L880.9,402.2Z" fill="#75cff0" /><path d="M841.1,330.9 L841.0,327.0 L841.2,323.1 L843.7,320.0 L845.6,320.6 L845.1,324.7 L843.7,329.4Z" fill="#75cff0" /><path d="M694.0,343.8 L693.8,343.1 L694.5,341.9 L695.7,340.4 L696.3,341.0 L695.9,342.6 L694.7,343.5Z" fill="#75cff0" /><path d="M736.4,347.8 L734.5,348.2 L733.3,348.4 L732.2,348.0 L731.7,347.3 L733.4,347.2 L734.8,347.1Z" fill="#75cff0" /><path d="M705.7,403.2 L704.9,403.4 L704.1,401.8 L703.9,400.7 L704.3,400.2 L705.2,401.3 L705.4,402.2Z" fill="#75cff0" /><path d="M761.5,413.8 L759.1,413.9 L756.5,410.6 L754.5,407.7 L756.2,407.2 L758.5,408.6 L760.4,411.0Z" fill="#75cff0" /><path d="M640.9,349.7 L640.3,350.1 L639.6,348.4 L640.0,347.8 L640.3,346.6 L640.9,348.1 L641.4,349.4Z" fill="#75cff0" /><path d="M779.5,348.5 L778.4,349.0 L778.3,346.4 L777.9,343.7 L779.1,344.7 L779.9,345.9 L780.2,347.9Z" fill="#75cff0" /><path d="M573.9,327.9 L572.3,326.9 L572.4,323.8 L572.1,321.5 L573.2,322.2 L574.5,323.0 L574.3,325.5Z" fill="#75cff0" /><path d="M914.4,370.0 L914.4,370.9 L912.4,370.6 L910.8,370.3 L911.0,369.6 L912.3,369.2 L914.3,369.2Z" fill="#75cff0" /><path d="M640.4,389.9 L640.7,388.0 L645.0,387.3 L648.1,387.5 L648.6,389.0 L646.0,390.9 L641.5,391.4Z" fill="#75cff0" /><path d="M602.5,327.1 L603.5,325.3 L605.4,322.8 L607.5,323.1 L607.6,324.3 L606.5,325.6 L604.8,326.4Z" fill="#75cff0" /><path d="M841.6,324.2 L843.4,321.6 L847.3,319.9 L850.7,319.3 L852.0,320.7 L849.0,323.2 L845.6,323.7Z" fill="#75cff0" /><path d="M858.3,322.1 L859.6,321.3 L861.7,320.6 L863.4,321.5 L862.5,322.3 L861.4,322.7 L859.6,322.8Z" fill="#75cff0" /><path d="M688.2,414.6 L689.5,413.1 L691.2,411.4 L693.3,411.3 L693.3,412.5 L691.9,413.6 L690.1,414.5Z" fill="#75cff0" /><path d="M917.2,371.2 L916.2,370.3 L915.2,368.9 L915.6,367.9 L915.8,366.4 L916.8,368.4 L917.2,369.7Z" fill="#75cff0" /><path d="M792.7,348.8 L790.6,347.7 L791.1,343.0 L791.5,338.5 L793.5,338.9 L794.5,342.8 L794.8,348.0Z" fill="#75cff0" /><path d="M567.3,405.6 L567.7,404.9 L568.7,403.8 L570.7,403.1 L570.2,404.4 L569.5,405.4 L567.8,406.2Z" fill="#75cff0" /><path d="M656.6,370.3 L655.9,369.3 L655.7,368.1 L655.9,367.4 L656.3,366.6 L656.8,367.9 L657.2,369.6Z" fill="#75cff0" /><path d="M846.4,322.4 L848.2,319.9 L853.3,318.5 L857.5,318.9 L857.7,321.0 L854.1,322.9 L850.4,322.8Z" fill="#75cff0" /><path d="M616.9,390.6 L615.1,391.7 L611.6,391.3 L608.4,390.0 L608.5,388.2 L612.2,388.4 L616.0,388.9Z" fill="#75cff0" /><path d="M754.3,373.5 L754.3,372.1 L757.6,371.7 L760.2,371.6 L761.1,372.9 L758.3,374.2 L755.7,374.2Z" fill="#75cff0" /><path d="M587.5,364.8 L587.6,362.9 L590.6,361.2 L592.6,360.7 L593.5,361.5 L592.3,363.4 L590.0,363.9Z" fill="#75cff0" /><path d="M647.4,329.2 L645.3,327.5 L643.4,326.3 L643.5,324.6 L644.3,324.3 L645.9,324.4 L646.3,326.6Z" fill="#75cff0" /><path d="M605.1,325.5 L604.5,325.1 L604.1,324.1 L603.5,322.4 L604.4,323.1 L605.0,323.6 L605.6,325.1Z" fill="#75cff0" /><path d="M905.9,386.8 L905.5,384.2 L908.4,381.3 L910.0,380.3 L912.1,379.6 L911.0,382.8 L908.5,385.5Z" fill="#75cff0" /><path d="M869.7,333.0 L868.3,331.4 L867.3,328.7 L867.1,325.4 L868.7,325.1 L870.8,327.4 L870.4,331.0Z" fill="#75cff0" /><path d="M847.2,323.2 L844.8,323.9 L841.4,321.5 L838.3,319.3 L840.5,318.8 L842.7,319.1 L844.6,320.7Z" fill="#75cff0" /><path d="M733.5,325.3 L732.1,324.1 L733.3,320.5 L734.5,318.1 L735.8,318.4 L735.5,321.2 L735.3,325.3Z" fill="#75cff0" /><path d="M591.2,323.5 L591.9,321.4 L594.8,319.6 L596.6,319.4 L598.8,319.6 L596.3,321.9 L593.7,323.1Z" fill="#75cff0" /><path d="M915.2,314.6 L916.4,312.5 L917.3,310.5 L919.3,309.7 L920.3,310.5 L919.5,312.7 L916.9,314.6Z" fill="#75cff0" /><path d="M796.0,399.0 L795.1,396.8 L795.6,393.8 L796.7,392.8 L798.1,391.0 L798.0,394.2 L797.4,396.8Z" fill="#75cff0" /><path d="M670.7,372.8 L671.3,371.2 L673.5,369.3 L675.6,369.3 L676.4,370.2 L675.1,372.0 L672.2,373.3Z" fill="#75cff0" /><path d="M853.3,410.7 L852.5,409.6 L852.5,407.0 L853.7,404.6 L855.4,403.8 L854.7,407.7 L854.4,410.2Z" fill="#75cff0" /><path d="M857.4,363.3 L854.1,363.1 L850.4,361.7 L849.7,359.7 L849.3,357.9 L852.4,357.7 L856.3,360.6Z" fill="#75cff0" /><path d="M781.8,357.9 L781.5,357.2 L782.4,355.7 L783.4,355.2 L784.3,355.1 L783.3,356.6 L782.5,358.2Z" fill="#75cff0" /><path d="M594.8,421.7 L593.1,419.2 L592.3,416.0 L593.2,414.5 L594.1,412.3 L595.5,415.4 L595.2,418.3Z" fill="#75cff0" /><path d="M600.4,358.2 L602.7,356.0 L605.2,353.2 L607.8,354.2 L610.3,355.1 L606.8,357.7 L601.8,360.0Z" fill="#75cff0" /><path d="M622.8,397.5 L620.5,398.6 L617.1,399.3 L613.0,398.1 L614.0,396.2 L617.5,395.5 L621.3,396.0Z" fill="#75cff0" /><path d="M657.3,362.5 L656.8,362.0 L657.9,360.8 L659.1,359.7 L659.1,360.7 L658.8,361.6 L657.9,363.0Z" fill="#75cff0" /><path d="M841.3,407.7 L841.3,406.3 L845.2,405.8 L846.9,407.1 L846.8,408.2 L844.9,409.0 L841.6,409.1Z" fill="#75cff0" /><path d="M875.2,389.3 L872.9,390.0 L870.1,389.1 L867.2,388.0 L868.5,387.1 L870.6,386.8 L873.4,387.6Z" fill="#75cff0" /><path d="M859.5,324.3 L857.7,324.5 L855.6,322.1 L853.7,319.9 L855.0,319.4 L857.0,320.6 L858.6,322.2Z" fill="#75cff0" /><path d="M777.2,398.8 L775.0,400.1 L771.7,400.2 L769.8,399.3 L769.2,398.1 L771.5,396.9 L774.4,397.7Z" fill="#75cff0" /><path d="M618.9,407.6 L615.9,407.7 L613.8,407.7 L611.4,406.6 L611.6,405.3 L614.1,404.7 L616.3,406.2Z" fill="#75cff0" /><path d="M782.9,409.3 L782.4,407.9 L784.1,404.8 L786.2,404.4 L787.7,404.4 L786.3,407.0 L784.3,409.8Z" fill="#75cff0" /><path d="M859.8,410.7 L860.1,406.1 L860.1,402.7 L862.1,401.5 L864.0,400.2 L864.3,403.8 L862.3,407.1Z" fill="#75cff0" /><path d="M882.8,357.3 L881.5,357.2 L880.1,356.2 L879.1,355.2 L878.7,353.7 L880.9,354.9 L882.7,356.2Z" fill="#75cff0" /><path d="M730.6,319.5 L729.7,320.5 L726.6,318.6 L726.5,316.9 L725.3,314.1 L728.6,316.7 L730.4,318.2Z" fill="#75cff0" /><path d="M687.0,400.7 L686.0,399.0 L689.4,396.4 L692.8,393.0 L691.9,396.3 L691.2,398.1 L688.8,401.3Z" fill="#75cff0" /><path d="M861.7,385.1 L862.7,384.0 L864.1,383.3 L866.7,382.1 L865.5,383.7 L864.8,384.6 L863.1,385.3Z" fill="#75cff0" /><path d="M911.7,404.0 L909.8,403.9 L911.9,400.1 L914.1,395.6 L916.3,396.4 L914.3,401.3 L913.1,405.3Z" fill="#75cff0" /><path d="M656.2,325.4 L654.4,324.9 L654.1,321.0 L653.9,317.6 L655.5,316.5 L657.7,319.7 L656.9,323.3Z" fill="#75cff0" /><path d="M913.9,323.1 L913.1,322.7 L911.8,321.6 L911.7,320.1 L912.5,320.0 L913.6,320.6 L914.0,322.2Z" fill="#75cff0" /><path d="M829.9,419.0 L828.6,418.1 L827.7,415.7 L828.1,414.0 L829.0,413.5 L830.4,414.8 L830.7,417.8Z" fill="#75cff0" /><path d="M589.5,331.4 L586.8,329.6 L584.4,325.9 L584.5,323.0 L585.7,321.5 L588.0,324.3 L589.6,328.0Z" fill="#75cff0" /><path d="M930.1,322.8 L931.1,321.4 L933.5,320.4 L934.5,321.1 L935.8,321.5 L933.8,322.4 L931.6,323.4Z" fill="#75cff0" /><path d="M719.4,366.1 L717.8,366.7 L715.0,364.5 L713.6,362.5 L714.5,361.6 L716.6,362.6 L718.4,364.1Z" fill="#75cff0" /><path d="M892.6,418.2 L891.5,418.8 L889.8,416.3 L889.4,414.8 L889.9,414.1 L891.3,415.3 L892.3,416.8Z" fill="#75cff0" /><path d="M654.5,384.7 L652.7,385.3 L650.3,382.0 L649.2,379.9 L649.0,377.5 L652.4,379.5 L654.6,382.7Z" fill="#75cff0" /><path d="M725.8,313.2 L724.6,313.2 L722.7,312.9 L722.7,311.7 L722.4,310.6 L724.1,311.3 L725.4,312.3Z" fill="#75cff0" /><path d="M862.7,420.3 L860.2,419.2 L858.4,415.8 L857.0,412.4 L858.3,410.8 L861.1,413.8 L863.8,418.1Z" fill="#75cff0" /><path d="M735.4,346.2 L733.3,345.8 L734.6,340.8 L736.4,337.4 L738.1,338.3 L739.1,341.5 L737.3,346.3Z" fill="#75cff0" /><path d="M730.5,352.6 L730.6,350.3 L734.7,348.1 L737.6,347.7 L738.1,349.1 L736.2,351.1 L733.5,352.1Z" fill="#75cff0" /><path d="M926.1,371.9 L925.3,372.3 L923.6,371.2 L922.7,369.8 L923.7,369.7 L924.8,369.9 L926.5,371.1Z" fill="#75cff0" /><path d="M713.2,383.3 L712.4,383.0 L712.1,381.0 L712.6,379.5 L713.3,380.0 L714.0,380.9 L714.0,382.9Z" fill="#75cff0" /><path d="M591.8,359.1 L590.5,359.9 L588.8,356.9 L587.6,354.3 L589.3,354.9 L590.8,355.2 L593.3,358.4Z" fill="#75cff0" /><path d="M556.7,323.2 L558.7,321.2 L561.9,320.0 L566.3,319.4 L566.3,321.5 L563.0,323.4 L558.5,324.6Z" fill="#75cff0" /><path d="M594.6,354.1 L595.1,351.9 L599.9,349.9 L603.2,350.7 L602.3,352.5 L600.3,353.9 L596.4,355.5Z" fill="#75cff0" /><path d="M693.4,368.2 L693.5,367.5 L695.1,367.1 L696.2,367.4 L696.1,368.0 L695.4,368.6 L694.0,368.6Z" fill="#75cff0" /><path d="M589.1,329.8 L588.7,329.1 L590.5,328.5 L592.3,328.3 L591.9,329.2 L590.8,329.8 L589.8,330.0Z" fill="#75cff0" /><path d="M802.8,387.2 L802.2,385.8 L805.9,384.3 L810.0,384.1 L808.4,386.2 L807.3,388.3 L804.2,387.7Z" fill="#75cff0" /><path d="M795.4,347.8 L793.8,348.0 L791.3,346.9 L789.8,345.1 L790.8,344.4 L792.7,344.9 L795.1,346.2Z" fill="#75cff0" /><path d="M951.0,404.7 L950.6,404.1 L950.7,402.2 L952.0,401.6 L952.4,402.2 L952.6,403.2 L951.7,405.0Z" fill="#75cff0" /><path d="M762.8,416.6 L761.6,416.9 L759.8,414.1 L759.8,411.6 L761.1,411.4 L762.5,413.2 L764.2,416.2Z" fill="#75cff0" /><path d="M953.3,377.0 L951.8,376.3 L949.6,374.5 L948.2,370.5 L950.2,370.1 L952.8,372.4 L955.0,376.4Z" fill="#75cff0" /><path d="M720.2,358.7 L721.0,357.2 L722.8,355.7 L725.2,355.0 L724.2,356.7 L723.6,357.6 L721.9,358.7Z" fill="#75cff0" /><path d="M840.8,339.0 L840.0,338.0 L841.6,335.8 L843.0,334.0 L844.3,334.1 L844.1,336.6 L842.1,338.9Z" fill="#75cff0" /><path d="M823.1,386.4 L822.0,384.9 L820.3,382.2 L821.1,378.8 L822.8,378.9 L824.4,381.7 L824.0,384.9Z" fill="#75cff0" /><path d="M627.8,372.5 L628.1,369.8 L629.0,367.4 L630.8,365.1 L632.3,365.4 L631.4,368.5 L629.8,371.1Z" fill="#75cff0" /><path d="M911.0,411.3 L911.0,410.7 L912.6,410.5 L914.5,410.6 L913.5,411.4 L912.5,411.7 L910.8,412.2Z" fill="#75cff0" /><path d="M741.7,361.9 L741.0,362.7 L739.4,360.6 L738.2,358.6 L738.5,356.8 L741.2,358.5 L742.2,361.1Z" fill="#75cff0" /><path d="M694.3,324.9 L693.9,326.6 L690.4,324.3 L687.7,321.8 L690.1,321.6 L692.2,322.1 L695.0,323.7Z" fill="#75cff0" /><path d="M832.5,333.0 L831.9,331.2 L832.0,328.6 L833.2,327.4 L834.0,327.6 L834.2,329.3 L834.1,332.6Z" fill="#75cff0" /><path d="M657.4,384.6 L656.7,384.0 L658.7,383.2 L660.7,382.9 L661.0,383.8 L659.0,384.6 L657.9,384.9Z" fill="#75cff0" /><path d="M663.4,317.3 L661.2,318.6 L656.3,316.4 L652.4,313.3 L654.5,311.8 L658.3,312.8 L663.1,314.7Z" fill="#75cff0" /><path d="M645.3,373.6 L643.8,373.5 L644.0,369.7 L645.4,367.6 L646.6,368.2 L647.5,370.3 L646.6,373.8Z" fill="#75cff0" /><path d="M580.7,407.8 L580.1,408.2 L578.5,408.0 L576.6,407.1 L578.0,406.7 L578.9,406.3 L580.6,407.1Z" fill="#75cff0" /><path d="M612.8,425.3 L609.8,422.9 L607.1,419.5 L605.9,414.8 L608.3,414.7 L610.9,417.9 L611.6,420.8Z" fill="#75cff0" /><path d="M743.9,375.2 L743.3,374.7 L743.4,372.8 L744.3,371.3 L745.4,371.1 L745.2,373.4 L744.6,375.1Z" fill="#75cff0" /><path d="M848.7,343.0 L848.2,342.3 L848.5,340.1 L849.9,338.4 L850.8,339.1 L850.8,341.0 L849.6,343.1Z" fill="#75cff0" /><path d="M703.8,413.9 L702.6,413.5 L701.2,413.0 L700.3,411.7 L701.2,411.5 L702.3,411.5 L703.1,412.8Z" fill="#75cff0" /><path d="M757.0,342.2 L755.4,343.6 L751.3,341.3 L747.2,338.7 L750.4,338.3 L752.9,338.7 L755.1,340.1Z" fill="#75cff0" /><path d="M780.1,367.4 L778.9,364.5 L778.6,362.3 L778.9,360.2 L780.1,358.6 L781.4,361.6 L780.6,364.2Z" fill="#75cff0" /><path d="M563.8,422.9 L560.9,421.0 L558.0,419.3 L557.7,416.6 L557.7,414.0 L561.0,417.2 L564.0,420.2Z" fill="#75cff0" /><path d="M689.4,370.1 L687.7,366.6 L688.4,362.0 L689.5,359.3 L691.5,357.3 L692.6,361.8 L691.0,365.4Z" fill="#75cff0" /><path d="M875.1,344.4 L878.0,342.5 L880.1,341.6 L882.2,341.4 L883.5,342.2 L881.6,344.4 L877.8,344.9Z" fill="#75cff0" /><path d="M862.9,404.3 L861.1,403.0 L859.3,400.2 L858.9,396.8 L860.8,397.5 L862.2,399.4 L862.6,401.5Z" fill="#75cff0" /><path d="M790.9,348.0 L789.8,346.7 L789.8,344.1 L790.4,341.9 L791.5,341.9 L792.5,343.9 L791.9,346.7Z" fill="#75cff0" /><path d="M901.2,336.6 L896.9,337.5 L894.0,338.6 L891.7,337.1 L892.1,335.8 L894.0,334.2 L897.3,335.4Z" fill="#75cff0" /><path d="M829.6,321.5 L828.5,320.9 L827.8,318.9 L827.3,316.6 L828.6,317.7 L829.3,318.4 L829.9,320.1Z" fill="#75cff0" /><path d="M804.2,386.8 L801.7,386.0 L800.1,381.9 L799.3,378.8 L800.6,377.9 L803.1,380.0 L804.6,384.0Z" fill="#75cff0" /><path d="M618.1,333.3 L616.6,334.2 L613.6,333.5 L612.7,332.2 L612.2,331.1 L614.5,331.6 L616.2,332.1Z" fill="#75cff0" /><path d="M660.2,378.5 L659.0,377.9 L658.8,374.5 L660.2,371.3 L661.5,372.8 L662.1,375.2 L661.7,379.0Z" fill="#75cff0" /><path d="M576.0,377.7 L577.0,376.5 L577.8,375.8 L579.6,374.6 L579.3,375.8 L578.8,376.9 L577.2,377.8Z" fill="#75cff0" /><path d="M713.1,324.4 L711.2,324.7 L708.4,321.0 L708.9,318.5 L710.0,317.7 L712.3,318.9 L713.5,322.5Z" fill="#75cff0" /><path d="M914.2,352.9 L913.0,352.4 L911.5,351.2 L911.1,349.7 L911.8,349.3 L912.9,350.5 L913.8,351.5Z" fill="#75cff0" /><path d="M566.3,347.1 L566.6,346.4 L568.2,346.1 L569.5,346.2 L570.6,346.8 L568.7,347.6 L566.7,347.9Z" fill="#75cff0" /><path d="M882.1,388.5 L882.3,387.1 L883.7,385.5 L885.7,384.0 L886.0,385.2 L884.7,386.7 L883.4,388.6Z" fill="#75cff0" /><path d="M815.4,340.5 L817.6,338.5 L821.3,336.8 L823.0,338.3 L823.2,339.3 L821.8,340.8 L818.1,341.4Z" fill="#75cff0" /><path d="M815.5,386.3 L813.7,385.0 L812.6,382.2 L811.9,379.5 L813.3,379.3 L815.1,380.8 L816.1,384.2Z" fill="#75cff0" /><path d="M947.6,396.6 L946.9,395.4 L947.9,392.1 L949.8,392.0 L951.1,391.8 L950.6,394.1 L948.9,397.0Z" fill="#75cff0" /><path d="M633.7,385.3 L633.5,384.6 L635.4,384.1 L636.9,384.6 L636.5,385.3 L635.5,385.9 L633.4,386.3Z" fill="#75cff0" /><path d="M741.4,378.3 L739.4,375.4 L738.3,370.5 L739.8,366.8 L741.6,368.6 L742.6,370.9 L742.6,374.4Z" fill="#75cff0" /><path d="M556.7,398.8 L554.8,399.0 L554.1,395.0 L555.4,392.4 L557.1,392.3 L557.9,395.1 L557.5,397.2Z" fill="#75cff0" /><path d="M575.9,385.3 L576.0,384.5 L577.0,383.8 L578.7,382.4 L579.1,383.5 L578.3,385.0 L576.6,385.8Z" fill="#75cff0" /><path d="M547.8,357.8 L544.7,358.0 L542.5,357.1 L539.5,355.7 L541.6,355.0 L543.2,353.7 L545.8,355.7Z" fill="#75cff0" /><path d="M596.9,358.9 L596.5,360.6 L594.0,358.5 L591.6,356.4 L593.6,356.0 L595.6,355.3 L598.5,357.8Z" fill="#75cff0" /><path d="M613.8,405.8 L612.9,404.7 L614.5,401.6 L616.7,401.6 L619.2,401.3 L618.0,404.7 L615.1,406.4Z" fill="#75cff0" /><path d="M573.8,369.7 L575.4,368.9 L577.0,368.7 L579.7,368.8 L580.4,370.5 L577.2,371.1 L574.7,370.8Z" fill="#75cff0" /><path d="M594.2,404.7 L593.5,403.5 L594.3,401.6 L595.2,400.7 L596.1,400.6 L596.8,402.1 L595.4,403.8Z" fill="#75cff0" /><path d="M602.2,354.3 L601.1,355.0 L599.1,354.5 L597.5,353.8 L597.8,352.8 L599.4,352.3 L601.7,353.0Z" fill="#75cff0" /><path d="M578.9,435.1 L578.0,431.2 L578.9,427.2 L580.9,425.2 L583.7,423.6 L582.6,428.5 L581.3,431.1Z" fill="#75cff0" /><path d="M618.7,406.2 L618.6,405.0 L620.4,403.7 L622.6,403.2 L622.7,404.5 L621.5,405.8 L619.5,407.0Z" fill="#75cff0" /><path d="M630.1,431.5 L627.9,432.0 L627.7,427.4 L628.5,423.7 L630.3,425.8 L631.4,427.4 L632.2,431.4Z" fill="#75cff0" /><path d="M620.4,420.8 L618.4,420.3 L617.9,416.6 L617.9,413.8 L619.5,414.1 L621.5,415.5 L620.7,418.1Z" fill="#75cff0" /><path d="M608.0,426.8 L607.3,426.0 L607.8,424.3 L608.6,423.6 L609.3,423.6 L609.8,424.8 L609.0,426.6Z" fill="#75cff0" /><path d="M555.3,330.6 L554.2,331.1 L552.7,331.7 L551.3,330.8 L552.1,330.0 L553.0,329.4 L554.5,329.8Z" fill="#75cff0" /><path d="M591.1,345.3 L590.2,345.9 L588.3,344.8 L588.1,343.7 L587.7,342.4 L589.6,342.6 L591.4,344.2Z" fill="#75cff0" /><path d="M623.0,321.7 L620.4,322.1 L617.9,322.5 L616.7,320.9 L615.9,319.4 L618.7,319.4 L620.5,320.3Z" fill="#75cff0" /><path d="M581.8,357.9 L579.2,357.7 L575.5,354.8 L576.6,352.2 L577.0,349.6 L580.1,351.8 L582.8,355.5Z" fill="#75cff0" /><path d="M636.4,358.4 L635.6,355.7 L634.3,352.8 L635.9,348.9 L637.7,351.0 L638.5,353.5 L638.7,357.9Z" fill="#75cff0" /><path d="M548.8,329.7 L549.4,328.4 L550.6,327.2 L551.5,327.6 L552.7,327.7 L551.6,328.9 L550.2,329.7Z" fill="#75cff0" /><path d="M581.2,364.5 L580.0,365.1 L578.1,365.5 L576.1,364.4 L576.4,363.1 L578.6,362.9 L580.2,363.6Z" fill="#75cff0" /><path d="M576.0,373.8 L576.0,372.3 L579.2,371.6 L582.5,372.1 L583.2,374.1 L579.9,375.7 L576.1,375.5Z" fill="#75cff0" /><path d="M612.7,397.8 L613.4,394.5 L614.2,390.6 L617.3,389.9 L619.4,390.4 L618.9,394.1 L615.5,398.2Z" fill="#75cff0" /><path d="M640.3,322.8 L639.0,322.1 L637.4,321.0 L637.7,319.6 L638.2,318.7 L640.0,319.0 L641.1,321.7Z" fill="#75cff0" /><path d="M584.0,334.9 L583.3,333.0 L584.8,329.3 L588.3,327.1 L589.1,329.5 L589.8,332.7 L586.0,335.0Z" fill="#75cff0" /><path d="M564.5,414.4 L563.8,413.7 L564.9,412.2 L566.0,411.2 L567.4,411.0 L566.6,413.2 L565.4,414.5Z" fill="#75cff0" /><path d="M602.4,352.6 L601.5,352.1 L600.0,350.8 L601.0,349.8 L601.4,348.2 L602.9,349.7 L603.3,352.1Z" fill="#75cff0" /><path d="M541.2,377.1 L541.1,375.8 L541.5,374.7 L542.1,373.4 L542.5,374.2 L542.7,375.1 L542.2,376.4Z" fill="#75cff0" /><path d="M627.3,362.4 L627.8,360.9 L629.3,360.0 L630.4,359.5 L631.1,360.0 L630.5,361.3 L629.0,361.9Z" fill="#75cff0" /><path d="M617.5,413.8 L616.5,412.0 L620.3,411.1 L625.2,409.4 L625.6,412.1 L622.5,415.0 L618.6,414.9Z" fill="#75cff0" /><path d="M544.6,413.1 L543.2,411.7 L544.8,408.4 L546.4,406.9 L547.7,407.2 L547.6,409.6 L546.5,412.7Z" fill="#75cff0" /><path d="M628.9,330.0 L628.4,328.7 L628.3,327.4 L628.8,326.7 L629.3,326.7 L630.0,327.4 L629.8,329.2Z" fill="#75cff0" /><path d="M603.2,337.9 L604.0,336.9 L605.6,336.2 L607.3,336.4 L607.3,337.4 L605.7,338.0 L603.9,338.7Z" fill="#75cff0" /><path d="M561.0,327.6 L560.4,325.7 L559.8,323.5 L561.0,321.8 L562.0,322.6 L563.3,323.8 L562.6,326.8Z" fill="#75cff0" /><path d="M628.1,396.8 L628.8,395.0 L630.2,393.1 L632.5,392.2 L632.5,393.8 L632.2,395.5 L629.9,397.1Z" fill="#75cff0" /><path d="M618.3,324.2 L617.3,322.8 L618.2,320.0 L619.6,319.3 L621.4,318.2 L621.0,321.1 L620.0,324.0Z" fill="#75cff0" /><path d="M557.4,432.6 L557.2,430.3 L560.2,428.1 L562.0,428.0 L563.4,428.4 L562.0,430.4 L559.9,432.4Z" fill="#75cff0" /><path d="M623.5,360.0 L622.8,360.9 L621.2,360.5 L619.3,360.2 L620.1,359.4 L621.2,359.1 L623.4,358.9Z" fill="#75cff0" /><path d="M594.8,419.5 L593.7,420.4 L590.8,419.9 L588.4,417.9 L589.2,416.2 L592.2,416.4 L594.3,418.1Z" fill="#75cff0" /><path d="M585.3,364.2 L583.4,363.9 L582.0,361.9 L579.8,359.4 L581.4,358.7 L583.9,359.5 L585.9,362.4Z" fill="#75cff0" /><path d="M613.7,430.9 L612.5,431.7 L611.4,429.1 L611.5,426.8 L612.7,425.4 L614.0,428.5 L614.4,430.3Z" fill="#75cff0" /><path d="M616.4,409.9 L615.7,411.4 L612.4,410.8 L610.4,409.6 L610.8,408.2 L612.9,407.4 L615.9,408.4Z" fill="#75cff0" /><path d="M610.6,418.3 L608.7,419.0 L606.5,415.1 L606.2,410.9 L608.8,412.3 L611.3,413.0 L612.7,417.6Z" fill="#75cff0" /><path d="M552.1,356.1 L548.9,355.8 L545.9,355.4 L544.8,353.2 L545.6,352.1 L547.8,352.3 L550.5,353.6Z" fill="#75cff0" /><path d="M613.5,347.9 L611.2,346.6 L609.7,344.1 L609.5,342.0 L610.6,341.7 L612.8,341.9 L613.7,345.3Z" fill="#75cff0" /><path d="M557.0,417.2 L554.8,418.7 L551.4,418.6 L548.7,417.5 L547.5,415.4 L551.7,415.1 L555.2,415.3Z" fill="#75cff0" /><path d="M804.9,504.8 L805.8,503.7 L808.2,502.3 L810.9,502.9 L810.3,504.4 L808.8,505.9 L805.9,505.8Z" fill="#75cff0" /><path d="M916.5,434.8 L917.1,433.9 L918.5,432.9 L920.2,433.1 L919.7,434.1 L919.1,435.0 L917.1,435.5Z" fill="#75cff0" /><path d="M817.8,499.3 L817.2,499.2 L815.9,498.3 L816.2,497.0 L816.5,495.9 L817.7,497.5 L818.5,499.0Z" fill="#75cff0" /><path d="M933.4,504.4 L933.3,503.1 L933.5,502.0 L934.1,500.2 L934.8,500.9 L934.6,502.3 L934.3,503.7Z" fill="#75cff0" /><path d="M829.6,517.0 L827.0,516.8 L825.1,516.6 L824.3,515.6 L823.2,514.1 L825.9,514.8 L828.2,515.4Z" fill="#75cff0" /><path d="M805.0,481.0 L803.9,479.7 L803.9,476.7 L805.0,474.1 L806.0,475.6 L807.0,477.1 L806.1,479.5Z" fill="#75cff0" /><path d="M934.6,533.5 L933.5,533.7 L932.4,533.0 L931.0,532.3 L931.1,531.4 L932.8,531.9 L933.9,532.6Z" fill="#75cff0" /><path d="M884.9,534.1 L884.1,534.5 L882.9,532.9 L882.7,531.6 L883.2,530.9 L884.3,532.1 L885.2,533.3Z" fill="#75cff0" /><path d="M950.2,490.7 L950.9,489.9 L952.4,489.6 L953.6,489.7 L953.8,490.3 L952.7,491.0 L950.5,491.8Z" fill="#75cff0" /><path d="M831.0,450.5 L830.9,449.1 L833.9,448.4 L836.5,448.4 L836.9,449.7 L835.1,451.5 L831.6,451.8Z" fill="#75cff0" /><path d="M875.1,524.3 L873.5,522.9 L872.3,520.8 L872.7,519.3 L873.4,517.8 L874.8,519.9 L875.0,521.9Z" fill="#75cff0" /><path d="M945.2,477.5 L944.4,477.6 L942.7,476.7 L942.7,475.3 L943.1,474.7 L944.5,475.2 L945.8,476.8Z" fill="#75cff0" /><path d="M853.6,516.2 L852.7,515.3 L851.9,514.2 L851.9,513.0 L852.3,511.8 L853.3,513.6 L854.3,515.3Z" fill="#75cff0" /><path d="M828.7,501.8 L826.5,500.4 L824.8,497.6 L825.4,496.1 L825.9,494.8 L827.5,496.5 L828.6,499.0Z" fill="#75cff0" /><path d="M942.8,525.6 L942.9,524.3 L943.7,523.2 L944.7,521.8 L945.0,522.6 L945.2,523.8 L943.9,525.3Z" fill="#75cff0" /><path d="M925.6,532.6 L925.9,531.9 L926.6,531.0 L927.9,530.5 L927.6,531.4 L927.5,532.1 L926.2,533.1Z" fill="#75cff0" /><path d="M869.8,483.5 L869.9,482.6 L872.2,482.1 L873.0,483.0 L874.8,483.8 L872.2,484.2 L869.8,484.7Z" fill="#75cff0" /><path d="M944.4,531.8 L942.7,530.6 L940.5,527.7 L942.0,526.1 L942.9,525.5 L945.1,526.2 L945.9,530.6Z" fill="#75cff0" /><path d="M904.0,537.6 L903.6,536.1 L906.4,535.2 L908.5,534.4 L909.4,535.3 L908.1,537.2 L905.4,537.9Z" fill="#75cff0" /><path d="M903.7,537.1 L903.4,538.5 L901.1,536.8 L900.2,535.2 L900.6,534.2 L902.4,535.2 L903.8,536.3Z" fill="#75cff0" /><path d="M830.8,452.5 L829.9,454.3 L826.9,451.3 L827.0,449.4 L826.5,447.0 L829.6,448.4 L832.1,451.4Z" fill="#75cff0" /><path d="M916.1,472.6 L916.1,471.4 L917.5,470.1 L918.7,469.3 L919.7,469.6 L918.7,471.2 L917.4,472.5Z" fill="#75cff0" /><path d="M868.1,513.8 L867.3,511.9 L867.2,510.1 L867.5,508.0 L868.4,508.9 L869.5,509.8 L868.8,511.8Z" fill="#75cff0" /><path d="M939.0,486.3 L938.4,485.2 L938.3,483.5 L938.9,482.5 L939.9,481.7 L939.8,483.8 L939.9,485.6Z" fill="#75cff0" /><path d="M795.6,481.6 L794.9,482.2 L793.4,481.3 L792.5,480.6 L792.7,480.0 L793.9,479.9 L795.0,480.7Z" fill="#75cff0" /><path d="M849.8,526.0 L847.8,525.6 L846.5,522.4 L846.9,521.1 L847.4,520.0 L849.2,520.8 L849.4,523.3Z" fill="#75cff0" /><path d="M821.5,515.7 L821.6,515.0 L822.8,514.1 L823.7,514.3 L824.8,514.6 L823.5,515.6 L821.9,516.4Z" fill="#75cff0" /><path d="M913.4,430.9 L913.0,429.4 L915.9,427.7 L918.7,426.6 L920.2,427.7 L917.6,430.1 L914.7,431.8Z" fill="#75cff0" /><path d="M809.8,524.7 L808.8,523.6 L811.6,522.5 L814.1,521.4 L814.0,522.8 L813.6,524.8 L810.9,525.0Z" fill="#75cff0" /><path d="M871.0,477.1 L870.0,478.2 L867.3,477.4 L864.8,476.5 L866.1,475.6 L867.8,475.5 L869.8,475.9Z" fill="#75cff0" /><path d="M953.7,513.9 L951.7,514.4 L949.9,514.4 L947.7,513.8 L948.2,512.7 L950.1,512.5 L952.8,512.6Z" fill="#75cff0" /><path d="M919.8,534.1 L917.9,535.1 L917.2,530.6 L917.6,528.0 L919.0,526.1 L920.8,529.7 L921.9,534.1Z" fill="#75cff0" /><path d="M903.7,533.9 L904.2,533.0 L905.9,532.7 L907.0,533.0 L907.2,533.6 L906.1,534.1 L904.2,534.8Z" fill="#75cff0" /><path d="M811.8,450.7 L810.5,450.9 L808.5,449.7 L808.0,448.4 L807.2,446.3 L810.0,447.3 L811.7,449.4Z" fill="#75cff0" /><path d="M936.7,487.3 L936.6,486.4 L938.8,485.9 L939.5,486.7 L940.9,487.4 L938.9,488.0 L937.1,488.0Z" fill="#75cff0" /><path d="M949.0,474.6 L947.3,475.2 L945.3,475.2 L943.8,474.3 L943.4,473.2 L945.6,472.8 L948.1,473.4Z" fill="#75cff0" /><path d="M875.7,530.3 L873.9,530.1 L872.0,530.3 L871.4,528.9 L871.5,528.0 L873.2,528.2 L874.7,529.0Z" fill="#75cff0" /><path d="M879.3,517.2 L878.6,517.6 L878.0,516.1 L877.8,515.1 L878.2,514.3 L879.1,515.6 L879.5,516.7Z" fill="#75cff0" /><path d="M858.1,451.3 L856.3,451.1 L853.7,448.8 L852.8,445.9 L854.4,445.5 L856.9,446.2 L859.2,449.7Z" fill="#75cff0" /><path d="M946.3,509.1 L944.6,507.7 L943.0,505.7 L943.3,503.8 L944.2,503.4 L945.3,505.0 L946.7,507.1Z" fill="#75cff0" /><path d="M833.5,481.8 L834.8,479.3 L837.7,477.9 L841.2,476.2 L839.9,478.6 L839.2,480.2 L836.0,482.4Z" fill="#75cff0" /><path d="M931.6,492.7 L930.7,493.5 L927.1,492.8 L927.3,490.6 L927.2,489.1 L929.7,489.3 L931.7,491.4Z" fill="#75cff0" /><path d="M932.7,432.8 L932.9,432.3 L934.1,432.1 L935.8,432.3 L935.1,433.1 L934.2,433.6 L932.4,433.6Z" fill="#75cff0" /><path d="M891.9,520.6 L891.2,520.9 L891.6,519.5 L891.9,518.8 L892.5,518.5 L892.8,519.4 L892.3,520.3Z" fill="#75cff0" /><path d="M898.5,432.7 L897.4,433.7 L894.7,433.6 L893.6,432.5 L893.9,431.7 L895.0,430.7 L897.6,431.5Z" fill="#75cff0" /><path d="M947.1,474.1 L947.2,471.2 L948.5,467.6 L951.1,466.2 L952.0,467.6 L951.8,470.0 L949.7,471.6Z" fill="#75cff0" /><path d="M899.5,461.4 L899.9,460.3 L900.9,458.8 L902.8,458.2 L902.7,459.4 L902.1,460.6 L900.8,461.0Z" fill="#75cff0" /><path d="M847.0,538.5 L847.7,537.9 L849.3,537.6 L850.6,538.1 L852.2,539.2 L849.8,540.4 L846.6,539.9Z" fill="#75cff0" /><path d="M892.0,466.7 L890.6,466.8 L888.6,466.8 L887.4,465.3 L888.1,464.5 L889.7,464.1 L891.4,465.6Z" fill="#75cff0" /><path d="M932.8,509.7 L931.6,508.3 L932.2,504.5 L934.2,502.9 L936.0,502.4 L935.2,505.9 L934.6,509.3Z" fill="#75cff0" /><path d="M934.2,497.0 L934.6,496.2 L935.9,495.2 L936.7,495.8 L937.6,496.1 L936.3,496.9 L934.7,497.7Z" fill="#75cff0" /><path d="M826.2,436.3 L825.0,434.4 L824.5,432.4 L824.9,430.6 L825.9,429.9 L826.5,432.2 L827.0,434.5Z" fill="#75cff0" /><path d="M925.5,504.0 L924.7,503.9 L924.1,502.0 L925.0,501.3 L925.7,500.2 L926.7,501.8 L926.1,503.6Z" fill="#75cff0" /><path d="M844.0,503.3 L842.9,503.1 L841.9,501.9 L841.5,500.9 L841.7,500.2 L843.0,500.6 L843.6,502.1Z" fill="#75cff0" /><path d="M903.8,486.6 L902.7,484.9 L901.8,483.5 L902.0,481.9 L902.9,482.3 L903.8,483.0 L903.8,484.6Z" fill="#75cff0" /><path d="M853.2,426.0 L853.5,423.9 L856.4,422.4 L859.1,420.9 L859.0,422.6 L858.3,424.5 L855.7,425.6Z" fill="#75cff0" /><path d="M913.2,473.4 L911.7,470.1 L910.2,467.1 L911.6,465.1 L913.0,464.3 L914.3,467.0 L914.7,470.9Z" fill="#75cff0" /><path d="M889.5,453.5 L887.0,454.3 L884.5,454.2 L882.3,453.3 L880.2,451.2 L884.9,451.8 L888.7,451.6Z" fill="#75cff0" /><path d="M890.4,522.4 L886.6,521.9 L884.3,521.2 L882.5,519.8 L881.8,517.9 L885.2,518.2 L888.7,519.9Z" fill="#75cff0" /><path d="M823.0,477.3 L823.7,476.2 L826.0,475.9 L827.0,476.5 L827.1,477.1 L826.1,477.8 L823.9,478.3Z" fill="#75cff0" /><path d="M825.5,478.5 L824.5,479.1 L822.2,478.7 L820.7,477.1 L821.7,476.3 L823.4,476.6 L824.9,477.5Z" fill="#75cff0" /><path d="M851.3,484.5 L850.2,485.7 L846.6,485.5 L845.5,483.7 L845.9,482.7 L847.6,481.5 L849.9,483.2Z" fill="#75cff0" /><path d="M923.0,500.5 L923.3,499.1 L926.3,499.5 L927.5,500.1 L928.3,501.0 L926.5,501.8 L923.8,501.7Z" fill="#75cff0" /><path d="M807.9,505.6 L808.8,504.4 L811.0,504.4 L812.1,504.6 L812.1,505.1 L811.5,506.0 L810.0,505.7Z" fill="#75cff0" /><path d="M814.0,430.5 L812.7,429.0 L811.9,426.3 L812.7,424.3 L814.2,421.8 L816.1,425.3 L816.0,430.2Z" fill="#75cff0" /><path d="M804.1,497.5 L802.2,494.5 L800.5,492.5 L800.2,489.0 L802.1,489.3 L803.4,491.8 L805.5,495.5Z" fill="#75cff0" /><path d="M927.4,456.1 L925.5,456.8 L922.3,455.2 L920.8,453.1 L920.7,451.2 L924.0,452.4 L925.6,454.1Z" fill="#75cff0" /><path d="M820.5,439.0 L817.5,439.9 L814.5,438.9 L810.5,438.0 L810.8,436.0 L814.9,436.5 L818.0,437.1Z" fill="#75cff0" /><path d="M827.1,436.7 L827.4,436.1 L828.4,435.6 L829.4,435.5 L830.5,435.9 L828.8,436.7 L827.7,436.9Z" fill="#75cff0" /><path d="M797.4,506.2 L798.4,504.9 L799.4,504.0 L800.9,503.4 L801.0,504.3 L800.1,505.3 L798.6,506.4Z" fill="#75cff0" /><path d="M959.9,449.1 L956.9,450.0 L953.3,450.8 L952.6,448.7 L952.2,447.6 L954.2,446.8 L957.5,447.4Z" fill="#75cff0" /><path d="M918.5,436.7 L918.2,437.5 L916.9,436.2 L916.7,435.3 L917.0,434.8 L917.9,435.2 L918.9,436.2Z" fill="#75cff0" /><path d="M841.5,497.6 L841.5,496.0 L842.8,494.6 L843.8,493.4 L844.9,493.4 L843.8,495.2 L843.0,497.2Z" fill="#75cff0" /><path d="M807.3,433.2 L807.1,432.7 L808.2,432.0 L809.2,432.0 L810.1,432.4 L808.8,433.3 L807.8,433.3Z" fill="#75cff0" /><path d="M858.9,442.1 L856.3,441.7 L853.5,439.7 L851.9,437.1 L853.5,436.5 L855.9,436.7 L858.5,439.6Z" fill="#75cff0" /><path d="M922.6,518.7 L922.1,518.0 L923.7,517.0 L924.7,517.0 L925.4,517.3 L924.6,518.4 L923.2,519.0Z" fill="#75cff0" /><path d="M851.4,491.8 L851.5,490.5 L853.4,489.3 L855.9,487.6 L855.3,489.4 L855.4,491.1 L852.7,492.3Z" fill="#75cff0" /><path d="M886.3,467.2 L885.7,468.3 L883.2,467.5 L881.2,466.3 L881.6,465.1 L883.8,464.4 L886.6,466.0Z" fill="#75cff0" /><path d="M795.0,500.7 L794.2,501.6 L791.8,500.3 L791.1,498.8 L791.1,497.5 L793.3,498.3 L794.4,499.6Z" fill="#75cff0" /><path d="M908.8,526.4 L907.0,525.3 L905.4,523.8 L905.2,522.2 L904.9,519.5 L907.7,521.7 L909.0,524.6Z" fill="#75cff0" /><path d="M518.9,423.6 L516.3,423.1 L514.1,423.5 L513.1,421.4 L513.7,419.6 L516.3,419.3 L517.4,421.5Z" fill="#75cff0" /><path d="M441.4,534.2 L440.6,535.0 L439.2,533.9 L438.9,532.4 L440.1,532.3 L441.3,532.0 L441.9,533.4Z" fill="#75cff0" /><path d="M429.7,493.4 L428.5,494.0 L427.0,494.1 L425.4,493.1 L426.1,491.8 L427.7,491.6 L429.6,492.0Z" fill="#75cff0" /><path d="M521.5,498.6 L520.7,499.7 L518.4,501.2 L516.3,499.3 L516.3,497.2 L519.0,496.7 L521.4,496.9Z" fill="#75cff0" /><path d="M507.6,436.2 L507.3,437.0 L506.0,436.8 L505.4,436.2 L505.4,435.5 L506.3,435.3 L507.6,435.2Z" fill="#75cff0" /><path d="M441.3,458.4 L440.7,457.3 L442.2,456.6 L443.4,456.5 L443.4,457.4 L443.7,458.7 L442.0,459.3Z" fill="#75cff0" /><path d="M457.9,440.8 L456.2,440.6 L455.2,438.6 L455.9,437.3 L456.9,437.3 L458.4,437.2 L459.0,439.5Z" fill="#75cff0" /><path d="M417.8,500.1 L418.2,499.3 L419.4,498.2 L420.8,499.2 L420.8,500.5 L419.7,501.6 L417.8,501.3Z" fill="#75cff0" /><path d="M484.1,460.9 L483.9,461.6 L482.8,461.6 L482.2,461.2 L482.0,460.5 L482.8,460.0 L483.9,460.2Z" fill="#75cff0" /><path d="M434.1,552.6 L436.2,551.0 L437.4,549.3 L439.2,550.1 L439.7,551.5 L438.6,553.1 L436.6,552.9Z" fill="#75cff0" /><path d="M428.1,578.3 L428.9,577.3 L430.0,576.8 L431.3,576.8 L431.8,577.9 L430.5,578.7 L429.5,578.5Z" fill="#75cff0" /><path d="M423.7,558.8 L421.7,559.7 L419.7,559.0 L417.5,557.7 L419.4,556.7 L420.7,556.5 L422.4,557.0Z" fill="#75cff0" /><path d="M486.8,508.2 L486.7,506.8 L488.5,506.8 L490.4,506.3 L489.9,507.7 L489.5,509.0 L487.4,509.5Z" fill="#75cff0" /><path d="M477.3,513.9 L477.3,512.7 L477.9,511.2 L479.6,510.8 L479.9,512.0 L480.1,513.3 L478.6,514.3Z" fill="#75cff0" /><path d="M420.4,536.2 L418.1,536.2 L416.6,533.6 L417.1,531.7 L418.4,531.2 L419.7,532.2 L420.5,533.8Z" fill="#75cff0" /><path d="M517.8,432.6 L518.3,430.0 L518.4,427.8 L520.5,427.7 L522.4,427.8 L522.4,430.5 L520.2,432.5Z" fill="#75cff0" /><path d="M465.9,562.4 L464.5,562.3 L463.5,562.2 L463.0,561.3 L463.0,560.2 L464.4,560.6 L465.5,561.2Z" fill="#75cff0" /><path d="M460.4,498.7 L459.2,497.9 L458.8,496.3 L459.1,494.3 L460.8,494.1 L461.2,496.2 L461.8,498.1Z" fill="#75cff0" /><path d="M405.7,474.9 L403.9,476.4 L401.1,474.7 L400.3,472.7 L401.8,471.9 L403.3,471.2 L405.1,472.7Z" fill="#75cff0" /><path d="M495.5,485.3 L493.5,484.9 L493.2,482.4 L492.6,479.6 L494.7,480.0 L496.2,481.4 L497.3,484.1Z" fill="#75cff0" /><path d="M469.9,504.3 L468.7,504.4 L467.6,503.8 L467.1,502.6 L467.7,501.9 L468.9,502.4 L470.1,503.1Z" fill="#75cff0" /><path d="M452.1,448.7 L451.1,446.9 L454.0,445.8 L455.7,446.9 L456.8,448.2 L455.6,450.4 L453.1,449.6Z" fill="#75cff0" /><path d="M477.4,458.7 L478.2,457.8 L479.4,457.3 L480.2,458.0 L480.3,458.7 L479.7,459.4 L478.4,459.5Z" fill="#75cff0" /><path d="M485.0,497.9 L483.1,497.4 L482.0,495.2 L483.0,493.7 L484.2,493.2 L486.0,493.8 L485.6,496.0Z" fill="#75cff0" /><path d="M480.8,436.4 L479.9,436.2 L478.9,436.0 L479.1,435.2 L479.1,434.3 L480.2,434.5 L480.6,435.4Z" fill="#75cff0" /><path d="M430.0,461.0 L429.2,462.2 L427.1,461.4 L427.3,459.8 L427.5,458.6 L429.1,458.6 L430.9,459.8Z" fill="#75cff0" /><path d="M464.7,506.9 L464.8,504.8 L466.3,502.8 L468.0,503.7 L470.0,504.0 L468.4,505.8 L466.8,506.9Z" fill="#75cff0" /><path d="M446.7,505.0 L445.9,504.1 L445.7,502.2 L447.1,500.3 L448.3,501.6 L448.2,503.2 L448.3,505.3Z" fill="#75cff0" /><path d="M506.8,556.0 L505.3,556.9 L504.9,554.4 L505.6,553.3 L506.6,552.1 L507.4,554.0 L507.9,555.5Z" fill="#75cff0" /><path d="M473.6,549.3 L472.8,550.2 L471.7,548.9 L471.3,548.1 L471.6,547.3 L472.9,546.8 L474.3,548.2Z" fill="#75cff0" /><path d="M518.0,428.7 L516.9,429.7 L515.1,428.8 L513.8,427.4 L514.5,426.1 L516.3,426.2 L517.5,427.3Z" fill="#75cff0" /><path d="M424.7,535.7 L426.1,533.3 L429.3,532.8 L431.4,534.1 L430.7,535.7 L429.9,537.8 L427.5,536.7Z" fill="#75cff0" /><path d="M509.9,557.7 L510.2,556.5 L511.7,556.4 L512.6,556.5 L512.7,557.2 L512.5,558.5 L511.1,558.1Z" fill="#75cff0" /><path d="M452.5,542.2 L452.0,540.9 L451.9,539.2 L453.4,538.4 L454.7,538.8 L454.8,540.5 L453.8,541.9Z" fill="#75cff0" /><path d="M422.8,567.2 L421.2,567.9 L419.4,567.6 L417.3,566.4 L418.2,564.7 L420.3,564.8 L422.6,565.4Z" fill="#75cff0" /><path d="M482.0,444.4 L480.9,442.7 L481.9,440.1 L483.8,439.8 L484.6,440.8 L484.9,442.0 L483.8,443.1Z" fill="#75cff0" /><path d="M501.0,480.1 L499.8,478.9 L501.4,477.0 L503.2,476.5 L503.6,477.8 L503.5,479.1 L502.4,480.6Z" fill="#75cff0" /><path d="M450.8,515.8 L450.7,513.3 L451.9,511.7 L453.2,510.6 L455.5,510.5 L454.3,513.1 L453.0,514.3Z" fill="#75cff0" /><path d="M409.4,580.3 L408.7,580.6 L407.6,581.0 L406.7,580.1 L407.2,579.3 L408.2,578.8 L408.9,579.6Z" fill="#75cff0" /><path d="M498.8,524.3 L496.7,525.5 L494.3,524.1 L493.5,522.5 L493.8,521.0 L495.9,520.6 L497.6,522.2Z" fill="#75cff0" /><path d="M466.4,575.6 L464.3,574.8 L464.1,572.5 L463.8,570.7 L465.2,570.5 L466.4,571.5 L466.9,573.3Z" fill="#75cff0" /><path d="M501.4,517.8 L501.0,518.5 L499.8,518.6 L498.9,517.8 L499.2,516.9 L500.2,516.5 L501.2,517.1Z" fill="#75cff0" /><path d="M513.1,457.1 L512.9,455.6 L513.2,454.1 L514.4,453.8 L514.9,454.5 L515.9,455.5 L514.4,456.1Z" fill="#75cff0" /><path d="M491.4,427.2 L490.3,426.3 L490.5,424.7 L491.2,424.2 L492.1,423.4 L492.8,424.7 L492.6,426.5Z" fill="#75cff0" /><path d="M413.3,528.1 L413.8,526.2 L415.8,524.9 L417.1,526.1 L419.0,526.9 L417.1,528.4 L414.9,529.3Z" fill="#75cff0" /><path d="M415.0,503.0 L415.5,500.8 L418.3,501.4 L419.7,501.8 L420.2,503.1 L419.2,505.1 L416.2,504.7Z" fill="#75cff0" /><path d="M453.7,567.7 L451.9,568.4 L449.7,568.0 L448.8,566.2 L449.8,565.1 L451.4,564.5 L452.3,566.2Z" fill="#75cff0" /><path d="M404.4,463.2 L402.3,464.4 L400.1,463.5 L398.8,462.3 L398.2,460.3 L400.8,460.2 L403.9,460.8Z" fill="#75cff0" /><path d="M407.8,513.6 L406.3,514.5 L404.8,512.7 L403.4,510.8 L404.4,508.9 L406.8,510.5 L407.8,512.1Z" fill="#75cff0" /><path d="M506.3,431.9 L504.5,430.4 L502.7,428.4 L503.9,426.1 L505.7,425.7 L506.6,427.9 L507.6,430.0Z" fill="#75cff0" /><path d="M429.2,534.4 L428.5,534.8 L427.7,534.1 L427.2,533.2 L427.6,532.3 L429.0,532.3 L430.1,533.7Z" fill="#75cff0" /><path d="M443.8,569.7 L442.7,569.3 L442.2,567.9 L442.5,566.4 L443.6,566.8 L444.3,567.5 L444.5,568.7Z" fill="#75cff0" /><path d="M454.7,461.0 L453.7,461.9 L451.8,462.0 L451.3,460.6 L450.8,459.3 L452.6,459.0 L454.9,459.3Z" fill="#75cff0" /><path d="M413.3,484.8 L414.0,482.7 L416.8,482.3 L418.2,483.2 L418.5,484.4 L417.6,486.0 L415.1,486.2Z" fill="#75cff0" /><path d="M452.1,452.5 L450.4,453.5 L448.5,451.2 L448.6,448.6 L450.2,447.3 L452.4,448.8 L453.4,451.3Z" fill="#75cff0" /><path d="M570.8,569.2 L569.9,569.0 L569.9,568.0 L570.0,566.9 L570.7,567.4 L571.3,567.7 L571.3,568.6Z" fill="#75cff0" /><path d="M538.7,595.2 L539.1,594.3 L539.5,593.3 L540.6,593.2 L541.0,594.0 L540.3,594.6 L539.7,595.2Z" fill="#75cff0" /><path d="M608.2,550.3 L607.6,550.6 L607.1,549.8 L607.0,549.1 L607.5,548.6 L608.4,548.8 L608.4,549.8Z" fill="#75cff0" /><path d="M524.7,618.5 L525.0,617.3 L525.8,616.5 L526.9,616.2 L527.7,616.9 L526.9,617.9 L525.9,619.2Z" fill="#75cff0" /><path d="M622.0,523.7 L620.9,522.4 L620.2,520.9 L621.3,519.8 L622.5,519.5 L623.2,520.9 L622.6,522.0Z" fill="#75cff0" /><path d="M540.6,544.4 L539.7,544.3 L539.3,543.3 L539.5,542.5 L540.1,542.1 L541.1,542.4 L541.3,543.7Z" fill="#75cff0" /><path d="M612.4,601.9 L612.0,602.2 L611.5,602.1 L610.7,601.7 L610.8,600.9 L611.8,601.2 L612.6,601.3Z" fill="#75cff0" /><path d="M651.4,597.2 L651.2,596.7 L651.4,596.3 L651.7,595.7 L652.5,595.7 L652.1,596.6 L651.9,597.0Z" fill="#75cff0" /><path d="M573.5,524.8 L573.7,523.9 L574.0,523.3 L574.7,523.0 L575.6,523.2 L575.6,524.4 L574.4,525.0Z" fill="#75cff0" /><path d="M535.2,541.9 L534.9,542.5 L533.7,542.6 L533.5,541.6 L533.3,540.6 L534.5,540.3 L535.4,541.2Z" fill="#75cff0" /><path d="M549.8,539.5 L550.5,538.2 L551.2,537.4 L552.0,537.8 L552.7,538.2 L552.2,539.1 L551.2,539.4Z" fill="#75cff0" /><path d="M530.7,620.4 L530.0,620.0 L529.8,619.1 L530.3,618.4 L531.0,618.4 L531.2,619.2 L531.4,620.1Z" fill="#75cff0" /><path d="M613.8,593.7 L613.0,593.3 L613.1,592.3 L613.2,591.6 L613.8,591.7 L614.5,592.0 L614.3,592.9Z" fill="#75cff0" /><path d="M573.9,543.4 L573.9,542.4 L574.3,541.5 L575.2,541.0 L575.4,541.9 L576.0,542.8 L574.8,543.0Z" fill="#75cff0" /><path d="M606.7,536.0 L605.9,535.1 L606.3,533.2 L608.1,532.4 L609.2,533.5 L609.1,535.3 L607.8,536.7Z" fill="#75cff0" /><path d="M647.0,572.3 L647.2,571.2 L647.8,570.2 L648.9,570.3 L649.8,570.9 L649.3,572.2 L647.9,573.1Z" fill="#75cff0" /><path d="M533.5,524.3 L533.2,522.4 L534.1,520.5 L535.7,521.0 L536.4,521.6 L536.7,522.9 L535.3,524.2Z" fill="#75cff0" /><path d="M537.2,615.4 L536.6,615.4 L536.1,615.1 L535.9,614.6 L536.1,614.3 L536.6,614.3 L537.4,614.7Z" fill="#75cff0" /><path d="M628.6,597.9 L627.8,597.3 L628.8,596.5 L629.5,596.5 L630.2,596.8 L629.8,597.6 L629.2,598.5Z" fill="#75cff0" /><path d="M573.6,522.0 L572.8,522.3 L571.9,522.5 L571.4,521.8 L571.7,521.2 L572.4,520.8 L573.1,521.3Z" fill="#75cff0" /><path d="M525.6,620.3 L524.8,619.8 L525.6,619.0 L526.2,618.7 L526.6,619.0 L526.9,619.6 L526.5,620.6Z" fill="#75cff0" /><path d="M582.0,613.2 L581.9,612.5 L582.7,612.6 L583.4,612.7 L583.5,613.4 L583.0,614.0 L582.2,613.7Z" fill="#75cff0" /><path d="M637.8,527.0 L636.3,526.6 L636.8,524.7 L637.3,523.3 L638.7,523.4 L639.1,524.9 L638.7,526.0Z" fill="#75cff0" /><path d="M580.4,549.2 L579.4,549.6 L578.5,548.3 L579.2,547.1 L580.2,547.1 L580.9,547.8 L581.6,549.2Z" fill="#75cff0" /><path d="M581.3,593.0 L581.7,592.4 L582.0,592.0 L582.7,591.8 L583.2,592.3 L582.8,593.0 L582.1,592.9Z" fill="#75cff0" /><path d="M535.0,609.0 L535.0,608.1 L536.2,608.2 L537.5,608.1 L537.2,609.1 L536.3,609.4 L535.6,609.5Z" fill="#75cff0" /><path d="M528.9,562.1 L530.3,560.9 L531.9,560.1 L533.5,560.9 L533.8,562.5 L532.3,563.8 L530.1,563.5Z" fill="#75cff0" /><path d="M627.2,552.4 L626.6,552.5 L626.5,551.7 L626.7,551.2 L627.1,550.7 L627.4,551.5 L627.5,552.0Z" fill="#75cff0" /><path d="M519.6,522.4 L519.6,522.0 L519.8,521.4 L520.3,521.3 L520.5,521.8 L520.4,522.1 L520.1,522.5Z" fill="#75cff0" /><path d="M578.8,533.5 L578.0,532.7 L578.0,531.6 L578.4,531.0 L579.0,531.0 L579.6,531.5 L579.8,532.8Z" fill="#75cff0" /><path d="M654.1,536.2 L654.0,534.8 L655.0,533.6 L656.0,534.0 L656.7,534.4 L657.0,535.7 L655.5,536.6Z" fill="#75cff0" /><path d="M642.7,554.6 L642.7,553.6 L643.4,552.5 L644.8,552.3 L644.9,553.4 L644.6,554.2 L643.6,555.7Z" fill="#75cff0" /><path d="M576.8,562.7 L576.0,561.8 L576.3,560.8 L576.7,560.2 L577.4,560.0 L577.9,560.8 L578.1,562.4Z" fill="#75cff0" /><path d="M590.5,534.5 L589.3,534.8 L588.0,533.6 L588.5,532.3 L589.2,531.5 L590.1,532.4 L591.6,533.5Z" fill="#75cff0" /><path d="M642.3,602.7 L642.1,602.1 L642.2,601.6 L642.7,600.7 L643.3,601.2 L643.4,602.0 L642.8,602.4Z" fill="#75cff0" /><path d="M603.1,610.2 L602.3,610.0 L601.6,609.7 L601.1,608.9 L601.7,608.4 L602.5,608.8 L602.9,609.3Z" fill="#75cff0" /><path d="M555.5,524.5 L555.1,525.5 L554.1,524.6 L553.7,524.0 L554.0,523.5 L554.8,522.9 L555.4,523.8Z" fill="#75cff0" /><path d="M556.6,572.2 L556.7,571.3 L557.8,571.3 L558.9,571.5 L559.4,572.5 L558.0,573.1 L556.8,573.1Z" fill="#75cff0" /><path d="M561.1,618.7 L561.0,617.2 L562.7,616.5 L563.7,617.3 L564.0,618.1 L563.9,619.5 L562.1,619.5Z" fill="#75cff0" /><path d="M624.3,576.7 L623.5,577.1 L621.9,577.0 L621.4,575.4 L622.3,574.4 L623.6,574.9 L624.8,575.7Z" fill="#75cff0" /><path d="M230.0,628.7 L228.2,628.7 L226.7,627.1 L227.1,625.7 L227.9,625.3 L229.1,625.4 L230.5,627.0Z" fill="#75cff0" /><path d="M118.7,511.4 L119.3,510.4 L120.0,509.4 L120.7,510.1 L121.7,510.4 L121.0,511.4 L119.9,511.3Z" fill="#75cff0" /><path d="M303.8,533.8 L302.4,534.7 L300.5,533.3 L300.3,531.8 L301.2,531.2 L302.6,530.4 L303.7,532.3Z" fill="#75cff0" /><path d="M416.3,375.3 L417.5,373.7 L418.2,372.6 L419.3,372.9 L420.7,373.2 L419.5,374.5 L417.9,376.0Z" fill="#75cff0" /><path d="M170.9,615.8 L169.6,616.6 L168.0,615.0 L167.7,613.5 L168.5,612.9 L170.0,612.6 L170.6,614.3Z" fill="#75cff0" /><path d="M262.8,531.8 L262.0,532.7 L260.5,531.8 L259.9,531.0 L259.6,529.8 L261.3,529.9 L262.2,530.8Z" fill="#75cff0" /><path d="M23.0,607.3 L22.3,607.2 L21.9,606.0 L22.5,605.3 L23.1,605.5 L24.0,605.7 L23.9,607.2Z" fill="#75cff0" /><path d="M27.9,536.5 L26.5,536.3 L25.9,534.4 L26.4,533.1 L27.3,533.1 L28.1,533.8 L28.2,535.0Z" fill="#75cff0" /><path d="M63.0,403.3 L61.6,402.3 L61.7,399.9 L63.0,399.5 L64.4,398.3 L64.2,400.5 L64.4,402.4Z" fill="#75cff0" /><path d="M356.3,570.0 L356.2,570.8 L355.0,570.5 L354.1,569.9 L354.5,569.3 L355.4,569.1 L356.3,569.4Z" fill="#75cff0" /><path d="M309.7,506.4 L309.0,505.9 L308.8,504.7 L309.1,503.3 L310.1,503.5 L310.4,504.7 L310.3,505.7Z" fill="#75cff0" /><path d="M94.1,459.0 L94.1,458.4 L94.4,457.7 L95.0,457.8 L95.4,458.0 L95.4,458.7 L94.7,459.0Z" fill="#75cff0" /><path d="M263.4,461.2 L263.2,459.9 L264.1,458.3 L265.8,457.9 L266.8,458.8 L265.9,460.4 L264.6,461.8Z" fill="#75cff0" /><path d="M301.5,612.1 L300.7,611.7 L300.3,610.5 L300.9,610.0 L301.4,609.6 L302.5,610.0 L302.4,611.7Z" fill="#75cff0" /><path d="M207.2,606.6 L206.5,606.8 L206.0,605.9 L205.5,605.2 L205.9,604.5 L206.8,605.0 L207.6,605.9Z" fill="#75cff0" /><path d="M60.7,665.4 L60.0,666.7 L58.1,666.3 L56.5,665.8 L56.3,664.3 L58.1,663.6 L59.9,664.4Z" fill="#75cff0" /><path d="M42.3,525.7 L41.9,525.4 L41.7,524.6 L42.2,523.6 L43.0,523.6 L43.0,524.7 L42.7,525.3Z" fill="#75cff0" /><path d="M318.8,449.5 L318.0,448.6 L319.6,447.9 L320.8,447.8 L321.3,448.6 L320.8,449.8 L319.4,450.1Z" fill="#75cff0" /><path d="M218.1,428.4 L217.3,428.3 L216.8,427.9 L216.6,427.3 L217.0,427.0 L217.7,426.8 L218.2,427.7Z" fill="#75cff0" /><path d="M79.7,432.9 L79.0,432.5 L78.7,431.2 L79.6,430.7 L80.4,430.3 L80.5,431.5 L80.5,432.6Z" fill="#75cff0" /><path d="M144.2,625.5 L144.6,624.2 L146.4,624.2 L148.3,624.2 L148.6,625.6 L146.8,626.4 L145.2,626.3Z" fill="#75cff0" /><path d="M324.0,606.4 L322.9,606.4 L322.0,605.5 L322.1,604.5 L322.5,603.9 L323.7,604.0 L324.5,605.5Z" fill="#75cff0" /><path d="M375.1,463.9 L375.1,463.4 L375.9,462.9 L376.5,463.3 L377.1,463.8 L376.2,464.4 L375.3,464.3Z" fill="#75cff0" /><path d="M366.2,670.7 L365.9,671.7 L364.2,671.3 L363.6,670.0 L363.9,669.0 L365.4,669.0 L366.2,670.0Z" fill="#75cff0" /><path d="M104.8,651.3 L104.0,650.7 L103.2,649.5 L103.2,647.4 L104.7,648.2 L105.5,649.1 L105.3,650.3Z" fill="#75cff0" /><path d="M247.2,344.5 L246.4,343.7 L246.1,342.5 L246.4,340.7 L247.8,340.6 L248.5,342.3 L247.9,343.7Z" fill="#75cff0" /><path d="M100.8,458.1 L100.8,456.9 L102.6,456.6 L104.1,456.9 L103.9,458.0 L103.3,459.3 L101.1,459.5Z" fill="#75cff0" /><path d="M395.3,504.9 L394.3,504.6 L394.9,503.1 L395.9,502.9 L396.6,503.1 L396.7,504.1 L396.1,505.5Z" fill="#75cff0" /><path d="M294.0,411.5 L295.2,410.1 L297.0,409.4 L298.5,409.9 L299.7,411.1 L297.6,412.2 L295.3,412.9Z" fill="#75cff0" /><path d="M93.7,332.2 L93.0,332.2 L92.2,331.9 L91.5,331.1 L92.2,330.8 L93.0,330.7 L94.1,331.4Z" fill="#75cff0" /><path d="M124.2,439.4 L123.3,439.7 L122.7,438.6 L122.1,437.7 L122.7,437.1 L123.8,437.2 L124.5,438.5Z" fill="#75cff0" /><path d="M126.6,554.5 L128.1,553.5 L129.4,552.8 L130.9,553.2 L130.9,554.4 L130.0,555.7 L128.0,555.4Z" fill="#75cff0" /><path d="M413.3,323.7 L412.0,324.0 L410.6,323.9 L409.3,322.9 L409.3,321.4 L411.4,322.1 L412.8,322.5Z" fill="#75cff0" /><path d="M63.9,603.1 L63.0,602.8 L62.2,602.9 L62.2,602.1 L62.1,601.3 L63.0,601.9 L63.4,602.3Z" fill="#75cff0" /><path d="M210.8,438.6 L209.8,438.3 L209.1,437.6 L209.1,436.8 L209.4,435.9 L210.8,436.1 L211.3,437.8Z" fill="#75cff0" /><path d="M147.5,495.0 L147.0,494.0 L148.6,493.4 L150.5,492.9 L150.8,494.3 L149.6,495.6 L147.9,496.1Z" fill="#75cff0" /><path d="M325.5,347.1 L325.5,348.0 L324.2,347.8 L323.7,347.1 L323.7,346.6 L324.4,346.2 L325.1,346.6Z" fill="#75cff0" /><path d="M345.7,465.6 L345.2,465.4 L345.3,464.6 L345.6,464.2 L346.0,464.1 L346.3,464.7 L346.0,465.2Z" fill="#75cff0" /><path d="M313.0,650.8 L312.0,649.9 L313.2,648.3 L314.2,647.8 L315.0,648.1 L315.3,649.3 L314.2,650.3Z" fill="#75cff0" /><path d="M194.7,629.5 L193.9,629.6 L193.1,629.2 L192.5,628.4 L192.6,627.2 L194.2,627.3 L195.0,628.7Z" fill="#75cff0" /><path d="M189.5,941.4 L188.9,941.6 L188.1,941.2 L187.8,940.5 L188.2,940.1 L188.8,940.2 L189.7,940.7Z" fill="#75cff0" /><path d="M320.6,946.5 L321.7,945.3 L322.6,944.7 L324.0,944.4 L324.3,945.5 L323.3,946.3 L322.0,947.1Z" fill="#75cff0" /><path d="M836.7,1004.6 L836.3,1005.2 L835.9,1004.4 L835.5,1003.7 L836.1,1003.4 L836.8,1003.7 L837.1,1004.4Z" fill="#75cff0" /><path d="M792.6,918.7 L792.2,919.4 L791.4,918.8 L790.6,918.3 L790.9,917.7 L791.7,917.9 L792.3,918.1Z" fill="#75cff0" /><path d="M661.4,859.8 L660.6,859.9 L660.5,858.8 L660.9,858.0 L661.6,858.2 L662.3,858.7 L662.2,859.9Z" fill="#75cff0" /><path d="M529.4,732.5 L529.3,733.0 L528.6,732.7 L528.4,732.2 L528.3,731.6 L529.1,731.7 L529.8,732.1Z" fill="#75cff0" /><path d="M783.8,948.1 L783.7,947.3 L785.0,946.9 L785.8,947.6 L786.2,948.5 L784.9,948.7 L784.0,948.8Z" fill="#75cff0" /><path d="M273.7,845.1 L273.2,846.0 L271.9,845.2 L271.6,844.4 L271.1,843.1 L272.7,843.4 L273.3,844.3Z" fill="#75cff0" /><path d="M553.1,753.8 L553.1,753.2 L553.4,752.6 L554.1,752.4 L554.4,752.8 L554.1,753.3 L553.7,754.0Z" fill="#75cff0" /><path d="M739.7,854.6 L739.3,854.0 L739.2,853.0 L740.1,852.2 L740.5,853.0 L740.6,853.6 L740.5,854.7Z" fill="#75cff0" /><path d="M916.6,966.0 L916.0,966.7 L915.0,966.6 L914.3,966.0 L914.2,965.2 L915.3,965.1 L916.3,965.2Z" fill="#75cff0" /><path d="M263.2,729.5 L263.5,728.0 L263.9,727.0 L265.0,726.2 L265.3,727.2 L265.5,728.1 L264.6,729.3Z" fill="#75cff0" /><path d="M896.2,962.9 L895.4,962.8 L894.7,961.8 L895.5,961.3 L895.9,960.4 L896.7,961.3 L896.4,962.1Z" fill="#75cff0" /><path d="M259.5,799.9 L259.2,800.4 L258.5,800.0 L258.4,799.5 L258.2,798.8 L259.1,798.8 L259.5,799.4Z" fill="#75cff0" /><path d="M797.1,982.8 L796.4,983.6 L794.9,983.4 L794.0,982.5 L794.9,981.9 L795.6,981.1 L796.3,982.0Z" fill="#75cff0" /><path d="M359.3,898.1 L358.4,897.2 L358.2,895.7 L359.1,894.7 L360.0,895.0 L360.1,896.0 L360.2,897.3Z" fill="#75cff0" /><path d="M896.4,769.4 L896.0,770.7 L894.1,770.8 L892.8,769.8 L893.3,768.7 L894.4,768.2 L895.5,768.6Z" fill="#75cff0" /><path d="M622.3,707.2 L622.4,706.7 L622.5,706.2 L623.1,705.7 L623.4,706.3 L623.2,706.8 L622.8,707.1Z" fill="#75cff0" /><path d="M487.5,788.4 L487.0,789.0 L486.1,788.8 L485.5,788.4 L485.8,787.9 L486.3,787.3 L487.0,787.9Z" fill="#75cff0" /><path d="M876.6,705.8 L877.2,704.9 L878.0,704.4 L879.5,703.8 L880.0,705.0 L878.6,705.8 L877.6,706.2Z" fill="#75cff0" /><path d="M794.2,1016.2 L794.0,1015.9 L793.8,1015.5 L794.1,1015.1 L794.5,1015.3 L794.8,1015.6 L794.5,1016.1Z" fill="#75cff0" /><path d="M264.8,809.1 L264.5,808.5 L265.4,808.0 L266.1,808.1 L266.5,808.6 L265.9,809.1 L265.3,809.2Z" fill="#75cff0" /><path d="M631.6,723.2 L632.4,722.4 L633.6,721.3 L634.5,722.5 L635.5,723.6 L633.7,724.2 L631.9,724.5Z" fill="#75cff0" /><path d="M837.5,756.1 L836.8,756.4 L836.8,755.3 L836.9,754.7 L837.4,754.6 L837.8,755.1 L838.2,756.0Z" fill="#75cff0" /><path d="M207.9,915.0 L207.8,914.4 L208.6,914.2 L209.2,913.9 L209.5,914.3 L209.0,914.8 L208.5,915.2Z" fill="#75cff0" /><path d="M319.3,913.5 L319.4,912.6 L320.1,911.1 L321.3,911.8 L322.1,912.4 L321.4,913.5 L320.2,914.0Z" fill="#75cff0" /><path d="M518.5,743.8 L518.3,742.7 L518.8,741.9 L519.5,741.5 L519.9,741.9 L519.9,742.6 L519.4,743.3Z" fill="#75cff0" /><path d="M376.7,1044.4 L377.3,1043.6 L378.3,1042.8 L379.7,1043.1 L380.3,1044.2 L378.7,1044.8 L377.3,1045.4Z" fill="#75cff0" /><path d="M919.5,843.7 L918.5,843.8 L917.5,844.1 L916.7,843.2 L916.9,842.2 L918.2,842.0 L918.8,842.9Z" fill="#75cff0" /><path d="M837.4,957.7 L837.3,956.3 L839.1,956.1 L841.0,955.7 L841.1,957.2 L840.1,958.5 L838.3,958.5Z" fill="#75cff0" /><path d="M555.9,789.5 L554.8,789.4 L554.8,787.7 L555.6,786.8 L556.8,786.4 L557.1,787.9 L557.0,789.5Z" fill="#75cff0" /><path d="M526.5,833.9 L526.2,833.5 L526.2,832.8 L526.7,831.9 L527.1,832.5 L527.7,833.1 L527.0,833.8Z" fill="#75cff0" /><path d="M901.9,740.6 L902.2,739.2 L903.5,738.5 L905.1,737.8 L905.0,739.2 L904.8,740.4 L903.4,740.8Z" fill="#75cff0" /><path d="M84.0,851.4 L83.6,850.8 L84.5,850.5 L85.0,850.4 L85.6,850.5 L85.5,851.5 L84.5,851.8Z" fill="#75cff0" /><path d="M171.8,1031.7 L171.6,1032.5 L170.4,1032.8 L169.4,1032.2 L169.1,1031.1 L170.5,1030.6 L172.1,1030.6Z" fill="#75cff0" /><path d="M397.4,823.7 L398.1,823.0 L398.8,822.3 L399.6,822.7 L400.6,823.3 L399.3,824.0 L398.2,824.3Z" fill="#75cff0" /><path d="M597.3,721.3 L597.0,721.0 L596.7,720.5 L597.1,720.0 L597.6,720.1 L597.6,720.7 L597.8,721.3Z" fill="#75cff0" /><path d="M951.2,740.8 L950.9,741.4 L949.5,741.9 L948.9,740.8 L948.9,739.9 L950.0,739.2 L951.2,740.0Z" fill="#75cff0" /><path d="M289.4,730.8 L288.8,730.2 L289.4,729.4 L289.8,728.7 L290.2,729.1 L290.5,729.7 L289.9,730.1Z" fill="#75cff0" /><path d="M888.6,985.3 L887.6,984.7 L888.3,983.2 L889.4,982.3 L890.1,983.1 L890.1,984.1 L889.7,985.5Z" fill="#75cff0" /><path d="M314.7,717.1 L314.3,716.9 L313.7,716.3 L314.0,715.6 L314.6,715.4 L315.2,715.9 L315.0,716.6Z" fill="#75cff0" /><path d="M501.9,1059.5 L501.6,1059.1 L501.9,1058.4 L502.5,1058.3 L502.9,1058.6 L502.9,1059.2 L502.4,1059.8Z" fill="#75cff0" /><path d="M384.3,881.2 L383.9,880.5 L383.9,879.8 L384.2,879.0 L384.9,879.2 L385.1,879.9 L384.8,880.6Z" fill="#75cff0" /><path d="M915.6,744.3 L914.1,743.2 L912.7,742.8 L912.8,741.3 L913.7,740.5 L914.7,741.6 L915.5,742.6Z" fill="#75cff0" /><path d="M358.2,903.6 L358.7,903.0 L359.5,902.6 L361.1,902.5 L360.9,903.7 L360.0,904.5 L358.3,904.8Z" fill="#75cff0" /><path d="M764.6,915.7 L763.1,915.6 L761.7,915.7 L760.9,914.2 L761.8,913.4 L763.0,913.7 L763.8,914.4Z" fill="#75cff0" /><path d="M476.1,777.2 L475.9,777.9 L474.8,777.5 L474.4,776.7 L474.7,776.0 L475.6,775.9 L476.4,776.6Z" fill="#75cff0" /><path d="M611.9,720.9 L611.8,720.4 L611.9,719.8 L612.5,719.7 L612.8,719.9 L612.9,720.5 L612.3,720.9Z" fill="#75cff0" /><path d="M851.9,881.6 L851.7,880.6 L852.3,879.3 L853.7,879.0 L854.3,879.8 L854.1,881.1 L852.9,881.5Z" fill="#75cff0" /><path d="M538.8,1005.0 L538.9,1004.3 L539.8,1003.9 L541.4,1003.7 L541.7,1005.0 L540.2,1005.5 L539.2,1005.4Z" fill="#75cff0" /><path d="M329.9,1004.1 L329.2,1002.8 L330.2,1001.5 L330.9,1000.8 L332.1,1000.5 L332.3,1002.1 L331.4,1003.7Z" fill="#75cff0" /><path d="M572.9,1033.4 L572.6,1033.7 L572.2,1033.1 L572.4,1032.5 L572.8,1032.4 L573.2,1032.7 L573.3,1033.3Z" fill="#75cff0" /><path d="M283.2,741.2 L283.1,740.2 L284.2,739.3 L285.7,739.0 L285.8,740.2 L285.5,741.4 L284.1,741.4Z" fill="#75cff0" /><path d="M881.2,943.1 L880.6,942.6 L880.7,941.7 L881.0,941.2 L881.5,941.2 L882.1,941.6 L882.1,942.9Z" fill="#75cff0" /><path d="M129.3,1014.2 L128.3,1013.9 L126.9,1013.7 L126.9,1012.4 L127.4,1011.3 L128.8,1012.1 L129.5,1013.1Z" fill="#75cff0" /><path d="M529.2,988.0 L529.0,987.2 L529.2,986.3 L530.0,985.2 L530.3,986.3 L531.0,987.0 L530.0,988.0Z" fill="#75cff0" /><path d="M347.3,866.8 L346.9,866.0 L347.7,865.1 L348.6,864.7 L348.9,865.4 L349.1,866.1 L348.2,866.3Z" fill="#75cff0" /><path d="M812.1,1035.0 L811.8,1035.6 L811.0,1035.1 L810.4,1034.6 L810.8,1034.2 L811.4,1034.1 L811.9,1034.5Z" fill="#75cff0" /><path d="M888.0,980.0 L887.3,979.6 L888.1,978.8 L888.8,978.0 L889.3,978.7 L889.5,979.7 L888.5,980.0Z" fill="#75cff0" /><path d="M78.4,1020.7 L77.5,1021.1 L76.7,1019.9 L76.8,1018.7 L77.5,1017.7 L78.4,1019.1 L79.1,1020.1Z" fill="#75cff0" /><path d="M619.8,884.0 L619.3,883.6 L619.7,882.9 L620.1,882.3 L620.5,882.6 L620.8,883.2 L620.4,883.7Z" fill="#75cff0" /><path d="M950.9,1043.1 L950.4,1043.4 L949.7,1043.2 L949.2,1042.7 L949.6,1042.3 L950.2,1042.1 L950.8,1042.5Z" fill="#75cff0" /><path d="M297.6,880.9 L298.3,880.3 L299.2,879.7 L299.9,880.4 L300.3,881.1 L299.3,881.5 L298.3,881.5Z" fill="#75cff0" /><path d="M506.1,726.1 L506.0,725.4 L506.7,724.5 L507.7,724.8 L507.8,725.5 L507.5,726.3 L506.6,726.5Z" fill="#75cff0" /><path d="M914.2,982.6 L913.8,982.1 L913.7,981.6 L913.9,981.2 L914.3,981.0 L914.7,981.4 L914.8,982.2Z" fill="#75cff0" /><path d="M935.1,1021.0 L935.1,1020.5 L935.3,1020.1 L935.6,1019.8 L935.9,1020.0 L936.1,1020.5 L935.6,1021.0Z" fill="#75cff0" /><path d="M376.2,986.6 L375.9,986.4 L375.8,985.9 L376.0,985.5 L376.5,985.4 L376.7,986.0 L376.4,986.4Z" fill="#75cff0" /><path d="M876.2,1005.1 L875.0,1005.3 L875.5,1003.8 L875.9,1002.5 L876.8,1003.0 L877.8,1003.8 L877.1,1005.2Z" fill="#75cff0" /><path d="M888.0,1030.6 L887.3,1030.9 L886.4,1030.2 L886.4,1029.3 L887.0,1029.0 L887.5,1029.3 L888.3,1029.9Z" fill="#75cff0" /><path d="M323.8,1003.9 L322.8,1002.8 L323.8,1001.1 L325.4,1000.5 L326.4,1001.2 L326.2,1002.7 L325.0,1003.6Z" fill="#75cff0" /><path d="M78.6,933.4 L78.1,933.4 L77.9,932.8 L78.0,932.1 L78.5,932.1 L78.9,932.6 L78.8,933.1Z" fill="#75cff0" /><path d="M290.9,850.4 L290.3,850.1 L289.6,849.2 L290.2,848.2 L291.0,848.5 L291.5,849.1 L291.4,850.0Z" fill="#75cff0" /><path d="M99.3,947.6 L98.4,947.1 L97.9,946.0 L98.1,944.8 L99.1,944.7 L99.5,945.8 L100.0,946.9Z" fill="#75cff0" /><path d="M923.8,999.4 L924.0,998.9 L924.4,998.5 L925.0,998.6 L925.4,999.0 L924.9,999.5 L924.2,999.7Z" fill="#75cff0" /><path d="M711.9,865.6 L711.6,865.4 L711.6,864.8 L712.0,864.4 L712.3,864.7 L712.4,865.0 L712.2,865.4Z" fill="#75cff0" /><path d="M854.9,748.7 L855.1,748.2 L855.9,747.9 L856.1,748.5 L856.4,748.8 L855.9,749.1 L855.2,749.2Z" fill="#75cff0" /><path d="M103.2,753.3 L104.1,752.4 L105.1,751.9 L106.1,752.3 L106.4,753.1 L105.5,753.8 L104.1,754.1Z" fill="#75cff0" /><path d="M803.9,846.7 L803.6,845.8 L805.0,845.6 L805.8,845.6 L806.6,846.3 L805.6,847.1 L804.5,847.3Z" fill="#75cff0" /><path d="M521.3,758.6 L520.8,759.0 L520.0,758.2 L520.3,757.5 L520.8,757.2 L521.4,757.5 L521.6,758.2Z" fill="#75cff0" /><path d="M240.2,922.6 L239.4,922.9 L238.5,922.3 L238.0,921.3 L238.7,920.8 L239.6,921.1 L240.3,921.8Z" fill="#75cff0" /><path d="M267.0,1009.5 L266.6,1009.2 L267.0,1008.7 L267.7,1008.5 L267.9,1008.9 L267.7,1009.4 L267.3,1009.7Z" fill="#75cff0" /><path d="M282.2,1035.6 L281.7,1035.2 L281.3,1034.4 L281.6,1033.3 L282.5,1033.5 L282.9,1034.3 L282.5,1035.0Z" fill="#75cff0" /><path d="M711.4,894.8 L710.7,895.3 L710.0,894.3 L709.2,893.6 L710.0,893.4 L710.7,893.5 L711.4,894.0Z" fill="#75cff0" /><path d="M57.8,721.7 L57.6,720.8 L58.7,719.9 L59.8,720.1 L60.0,721.0 L59.5,721.7 L58.3,722.7Z" fill="#75cff0" /><path d="M170.1,720.9 L170.0,720.0 L170.3,719.1 L171.1,718.9 L171.9,719.0 L171.7,720.0 L170.9,720.4Z" fill="#75cff0" /><path d="M175.5,778.4 L174.6,778.5 L173.9,777.6 L174.1,776.8 L174.5,776.2 L175.3,776.6 L175.9,777.6Z" fill="#75cff0" /><path d="M125.4,883.7 L125.0,883.7 L124.5,883.4 L124.3,882.7 L124.8,882.5 L125.3,882.8 L125.7,883.3Z" fill="#75cff0" /><path d="M154.4,885.0 L153.4,884.8 L153.2,883.5 L153.4,882.1 L154.4,882.4 L155.1,883.2 L155.6,884.8Z" fill="#75cff0" /><path d="M441.1,865.3 L440.8,866.0 L439.9,865.6 L438.8,865.2 L438.8,864.2 L440.1,864.1 L441.4,864.4Z" fill="#75cff0" /><path d="M729.1,899.0 L728.8,898.6 L728.5,898.1 L728.8,897.7 L729.2,897.8 L729.4,898.1 L729.4,898.6Z" fill="#75cff0" /><path d="M911.3,1013.7 L909.9,1013.5 L910.4,1011.1 L911.1,1010.0 L911.9,1009.8 L912.4,1011.1 L912.2,1012.8Z" fill="#75cff0" /><path d="M857.3,847.9 L856.2,847.4 L855.5,846.4 L855.1,845.4 L855.6,844.5 L856.7,845.4 L857.8,846.9Z" fill="#75cff0" /><path d="M927.3,922.4 L927.4,921.4 L928.0,920.3 L928.9,920.1 L929.9,920.1 L929.4,921.5 L928.3,922.5Z" fill="#75cff0" /><path d="M946.8,879.0 L947.2,877.2 L948.3,875.9 L949.9,874.6 L950.0,876.0 L950.3,877.4 L948.7,877.9Z" fill="#75cff0" /><path d="M881.4,938.5 L880.8,937.9 L880.3,936.7 L880.8,935.4 L881.7,935.3 L882.0,936.8 L881.8,937.6Z" fill="#75cff0" /><path d="M872.1,849.1 L871.1,849.4 L869.5,848.2 L868.3,846.1 L869.7,845.5 L871.4,846.5 L873.2,848.2Z" fill="#75cff0" /><path d="M824.8,872.3 L824.8,871.3 L825.5,869.6 L827.6,868.6 L827.4,870.3 L827.5,871.6 L825.8,872.7Z" fill="#75cff0" /><path d="M831.6,863.0 L830.7,863.1 L830.1,861.4 L830.8,859.9 L831.7,860.7 L832.6,861.2 L832.5,862.9Z" fill="#75cff0" /><path d="M817.7,914.4 L819.3,912.9 L821.6,912.3 L824.3,912.5 L823.0,914.1 L822.0,915.2 L820.3,914.7Z" fill="#75cff0" /><path d="M926.0,980.5 L925.1,980.9 L924.0,979.9 L923.3,979.0 L923.6,978.3 L924.7,978.7 L926.2,979.5Z" fill="#75cff0" /><path d="M916.7,1054.9 L916.0,1053.9 L917.1,1051.9 L918.6,1050.9 L919.0,1052.1 L919.8,1053.5 L917.9,1054.5Z" fill="#75cff0" /><path d="M880.2,1047.7 L880.2,1046.6 L881.8,1045.7 L883.3,1045.8 L883.8,1046.6 L882.8,1047.8 L880.7,1048.9Z" fill="#75cff0" /><path d="M950.9,845.5 L950.3,844.0 L949.9,842.4 L950.7,841.0 L951.8,841.0 L952.7,842.6 L952.0,844.6Z" fill="#75cff0" /><path d="M861.5,891.3 L859.4,888.7 L857.7,886.8 L858.1,884.3 L859.6,883.3 L861.4,885.6 L862.6,888.8Z" fill="#75cff0" /><path d="M898.6,833.4 L897.3,832.8 L897.8,830.0 L899.5,829.3 L900.4,829.9 L900.6,831.3 L899.9,833.5Z" fill="#75cff0" /><path d="M879.6,839.9 L879.0,838.7 L878.6,836.8 L879.7,835.3 L880.6,836.1 L881.0,837.3 L881.0,839.6Z" fill="#75cff0" /><path d="M849.2,931.4 L849.1,929.8 L849.2,928.7 L849.8,928.1 L850.4,928.1 L850.9,929.0 L850.3,930.5Z" fill="#75cff0" /><path d="M949.5,930.7 L948.8,931.5 L947.1,931.5 L945.0,931.0 L945.7,929.9 L947.4,929.6 L949.2,929.6Z" fill="#75cff0" /><path d="M844.0,866.2 L842.2,866.8 L840.5,866.2 L838.4,865.4 L838.3,863.8 L840.9,863.6 L843.4,864.6Z" fill="#75cff0" /><path d="M945.4,887.7 L944.5,886.7 L946.3,885.1 L947.4,885.1 L948.0,885.5 L948.0,886.7 L946.6,887.3Z" fill="#75cff0" /><path d="M899.8,1062.8 L900.8,1061.7 L902.7,1061.5 L906.2,1061.4 L904.1,1063.1 L902.8,1063.8 L900.1,1064.3Z" fill="#75cff0" /><path d="M949.7,950.5 L948.8,951.1 L947.6,950.9 L946.2,950.6 L947.0,950.0 L947.8,949.8 L949.2,949.6Z" fill="#75cff0" /><path d="M826.8,910.0 L826.7,909.0 L826.8,907.8 L827.7,907.5 L828.9,906.9 L828.7,908.6 L827.7,909.4Z" fill="#75cff0" /><path d="M901.5,887.8 L900.4,888.1 L899.5,886.4 L898.1,884.1 L899.6,883.6 L901.1,885.3 L902.3,887.0Z" fill="#75cff0" /><path d="M843.0,861.7 L841.8,861.3 L843.4,859.9 L844.4,859.4 L845.4,859.6 L845.4,861.2 L843.8,862.2Z" fill="#75cff0" /><path d="M893.3,1062.4 L892.2,1062.6 L891.0,1060.9 L890.9,1059.1 L892.1,1059.2 L893.0,1060.2 L894.7,1061.9Z" fill="#75cff0" /><path d="M913.5,1028.3 L911.8,1029.1 L910.7,1025.8 L912.1,1024.5 L913.1,1023.0 L914.4,1025.1 L914.0,1027.1Z" fill="#75cff0" /><path d="M898.8,980.8 L897.1,980.6 L895.8,979.1 L894.6,977.4 L895.5,976.3 L897.2,977.6 L898.5,979.0Z" fill="#75cff0" /><path d="M828.6,852.9 L831.2,851.6 L833.2,850.3 L835.1,851.3 L834.9,852.6 L833.9,854.4 L831.6,853.4Z" fill="#75cff0" /><path d="M831.5,906.9 L830.6,906.4 L829.8,905.2 L830.2,904.1 L830.9,904.3 L831.7,904.7 L831.5,905.7Z" fill="#75cff0" /><path d="M909.7,861.8 L908.6,859.9 L908.0,858.6 L908.3,857.1 L909.2,856.6 L910.1,858.1 L910.8,860.4Z" fill="#75cff0" /><path d="M942.8,1051.9 L943.5,1050.3 L944.8,1049.2 L946.2,1048.8 L947.9,1049.2 L946.6,1051.2 L944.7,1051.5Z" fill="#75cff0" /><path d="M860.5,840.2 L859.2,839.7 L858.2,838.3 L858.0,836.6 L858.8,835.5 L860.0,837.4 L861.4,839.1Z" fill="#75cff0" /><path d="M900.3,1014.8 L899.1,1014.8 L898.3,1013.4 L898.0,1012.4 L898.5,1012.0 L899.4,1012.5 L900.6,1013.6Z" fill="#75cff0" /><path d="M886.0,927.7 L885.4,925.2 L886.5,922.5 L888.0,921.9 L889.6,921.5 L889.6,923.9 L888.2,926.4Z" fill="#75cff0" /><path d="M931.6,911.0 L932.0,909.1 L934.2,908.1 L936.3,907.2 L936.8,908.5 L935.3,909.9 L933.6,911.0Z" fill="#75cff0" /><path d="M927.2,1019.0 L926.6,1017.9 L926.0,1016.6 L926.5,1015.1 L927.5,1015.4 L928.4,1016.5 L927.8,1018.0Z" fill="#75cff0" /><path d="M860.1,1057.1 L859.0,1058.1 L856.9,1058.8 L854.5,1057.9 L856.1,1056.6 L857.1,1055.5 L859.8,1055.7Z" fill="#75cff0" /><path d="M836.1,929.1 L835.3,929.0 L834.9,927.9 L834.6,926.8 L835.3,926.6 L836.0,927.4 L836.4,928.4Z" fill="#75cff0" /><path d="M926.6,1013.8 L926.7,1012.6 L928.0,1011.6 L929.4,1011.0 L929.4,1012.1 L929.6,1013.3 L927.8,1013.9Z" fill="#75cff0" /><path d="M24.0,338.1 L22.1,342.3 L21.6,346.9 L19.7,351.1" fill="none" stroke="#75cff0" stroke-width="1.1" stroke-linejoin="round" stroke-linecap="round" /><path d="M79.6,495.2 L78.6,493.8 L77.5,492.5 L77.3,490.8 L76.3,489.4" fill="none" stroke="#75cff0" stroke-width="1.1" stroke-linejoin="round" stroke-linecap="round" /><path d="M27.4,545.0 L25.6,546.7 L23.1,547.3 L21.0,548.6" fill="none" stroke="#75cff0" stroke-width="1.1" stroke-linejoin="round" stroke-linecap="round" /><path d="M108.2,456.2 L104.7,455.8 L101.3,456.6 L97.9,456.0 L95.4,453.6 L92.0,452.9" fill="none" stroke="#75cff0" stroke-width="1.1" stroke-linejoin="round" stroke-linecap="round" /><path d="M321.1,527.1 L320.6,525.6 L319.5,524.4 L318.7,523.1 L317.5,522.1 L316.0,521.9" fill="none" stroke="#75cff0" stroke-width="1.1" stroke-linejoin="round" stroke-linecap="round" /><path d="M157.1,393.6 L154.4,393.9 L152.0,392.6 L150.7,390.3 L150.3,387.6 L149.3,385.2" fill="none" stroke="#75cff0" stroke-width="1.1" stroke-linejoin="round" stroke-linecap="round" /><path d="M91.5,465.9 L86.9,466.3 L82.7,464.4 L78.8,462.0" fill="none" stroke="#75cff0" stroke-width="1.1" stroke-linejoin="round" stroke-linecap="round" /><path d="M304.8,333.9 L300.6,334.1 L296.7,335.8 L293.0,337.6 L288.8,338.1" fill="none" stroke="#75cff0" stroke-width="1.1" stroke-linejoin="round" stroke-linecap="round" /><path d="M201.8,507.2 L200.5,505.4 L198.6,504.4 L196.5,504.1" fill="none" stroke="#75cff0" stroke-width="1.1" stroke-linejoin="round" stroke-linecap="round" /><path d="M156.8,488.4 L159.1,486.9 L161.0,484.8 L162.5,482.4 L164.4,480.3" fill="none" stroke="#75cff0" stroke-width="1.1" stroke-linejoin="round" stroke-linecap="round" /><path d="M280.5,319.5 L281.3,320.6 L281.4,322.0 L281.0,323.3 L281.1,324.6 L280.7,325.9" fill="none" stroke="#75cff0" stroke-width="1.1" stroke-linejoin="round" stroke-linecap="round" /><path d="M423.8,397.2 L427.0,396.1 L429.1,393.6 L429.9,390.5" fill="none" stroke="#75cff0" stroke-width="1.1" stroke-linejoin="round" stroke-linecap="round" /><path d="M374.6,322.5 L373.4,320.2 L371.8,318.3 L369.5,317.1" fill="none" stroke="#75cff0" stroke-width="1.1" stroke-linejoin="round" stroke-linecap="round" /><path d="M205.9,483.7 L202.0,483.0 L198.3,481.3 L194.6,479.7 L191.4,477.2" fill="none" stroke="#75cff0" stroke-width="1.1" stroke-linejoin="round" stroke-linecap="round" /><path d="M210.9,343.4 L211.7,346.3 L211.8,349.4 L211.6,352.4 L212.6,355.3 L212.4,358.3" fill="none" stroke="#75cff0" stroke-width="1.1" stroke-linejoin="round" stroke-linecap="round" /><path d="M67.8,416.2 L70.2,418.6 L71.8,421.5 L73.3,424.4" fill="none" stroke="#75cff0" stroke-width="1.1" stroke-linejoin="round" stroke-linecap="round" /><path d="M118.8,504.7 L119.0,499.5 L121.6,494.9 L122.8,489.8" fill="none" stroke="#75cff0" stroke-width="1.1" stroke-linejoin="round" stroke-linecap="round" /><path d="M102.1,513.5 L101.0,515.2 L100.5,517.2 L100.8,519.2 L101.4,521.1 L101.6,523.2" fill="none" stroke="#75cff0" stroke-width="1.1" stroke-linejoin="round" stroke-linecap="round" /><path d="M170.4,502.8 L172.3,503.5 L174.2,504.3 L175.4,506.0 L177.1,507.2" fill="none" stroke="#75cff0" stroke-width="1.1" stroke-linejoin="round" stroke-linecap="round" /><path d="M93.6,318.4 L91.9,319.9 L91.3,322.0 L91.1,324.2 L90.1,326.2" fill="none" stroke="#75cff0" stroke-width="1.1" stroke-linejoin="round" stroke-linecap="round" /><path d="M142.5,538.1 L140.5,537.8 L138.5,537.2 L137.0,535.8 L135.5,534.4 L133.8,533.3" fill="none" stroke="#75cff0" stroke-width="1.1" stroke-linejoin="round" stroke-linecap="round" /><path d="M58.5,453.5 L58.1,456.0 L57.3,458.3 L56.4,460.6 L54.6,462.3" fill="none" stroke="#75cff0" stroke-width="1.1" stroke-linejoin="round" stroke-linecap="round" /><path d="M145.8,406.9 L143.7,403.5 L142.9,399.5 L141.0,395.9" fill="none" stroke="#75cff0" stroke-width="1.1" stroke-linejoin="round" stroke-linecap="round" /><path d="M309.1,322.0 L313.5,323.4 L317.2,326.2 L321.8,326.8" fill="none" stroke="#75cff0" stroke-width="1.1" stroke-linejoin="round" stroke-linecap="round" /><path d="M121.0,432.9 L123.3,432.4 L124.9,430.8 L126.3,429.0" fill="none" stroke="#75cff0" stroke-width="1.1" stroke-linejoin="round" stroke-linecap="round" /><path d="M240.3,420.1 L241.0,420.9 L241.8,421.6 L242.6,422.4 L243.1,423.3 L243.2,424.3" fill="none" stroke="#75cff0" stroke-width="1.1" stroke-linejoin="round" stroke-linecap="round" /><path d="M358.9,491.8 L356.9,493.1 L355.9,495.3 L354.6,497.3" fill="none" stroke="#75cff0" stroke-width="1.1" stroke-linejoin="round" stroke-linecap="round" /><path d="M392.9,390.6 L391.0,391.5 L389.0,391.7 L387.3,392.9 L385.3,393.6 L383.4,394.4" fill="none" stroke="#75cff0" stroke-width="1.1" stroke-linejoin="round" stroke-linecap="round" /><path d="M184.0,514.1 L185.3,511.0 L186.4,507.8 L187.6,504.7 L189.8,502.2 L191.9,499.5" fill="none" stroke="#75cff0" stroke-width="1.1" stroke-linejoin="round" stroke-linecap="round" /><path d="M75.4,456.4 L78.6,451.9 L80.2,446.7 L80.7,441.3" fill="none" stroke="#75cff0" stroke-width="1.1" stroke-linejoin="round" stroke-linecap="round" /><path d="M413.4,415.3 L412.1,417.0 L411.3,419.0 L411.2,421.1 L411.8,423.2" fill="none" stroke="#75cff0" stroke-width="1.1" stroke-linejoin="round" stroke-linecap="round" /><path d="M125.8,536.6 L126.6,541.4 L128.8,545.9 L129.3,550.8" fill="none" stroke="#75cff0" stroke-width="1.1" stroke-linejoin="round" stroke-linecap="round" /><path d="M196.6,329.6 L199.8,331.7 L203.4,333.2 L206.5,335.4 L209.6,337.6" fill="none" stroke="#75cff0" stroke-width="1.1" stroke-linejoin="round" stroke-linecap="round" /><path d="M44.5,460.2 L41.8,463.2 L40.7,467.1 L38.8,470.6 L36.3,473.7" fill="none" stroke="#75cff0" stroke-width="1.1" stroke-linejoin="round" stroke-linecap="round" /><path d="M368.7,531.0 L366.2,530.9 L363.7,530.7 L361.4,529.6 L359.2,528.3 L357.1,526.9" fill="none" stroke="#75cff0" stroke-width="1.1" stroke-linejoin="round" stroke-linecap="round" /><path d="M370.7,553.8 L371.3,555.2 L371.0,556.7 L370.7,558.2 L370.4,559.6" fill="none" stroke="#75cff0" stroke-width="1.1" stroke-linejoin="round" stroke-linecap="round" /><path d="M354.9,527.4 L357.3,530.2 L360.7,531.6 L363.0,534.4" fill="none" stroke="#75cff0" stroke-width="1.1" stroke-linejoin="round" stroke-linecap="round" /><path d="M165.2,407.3 L168.3,405.0 L171.9,403.3 L174.5,400.4 L175.8,396.6" fill="none" stroke="#75cff0" stroke-width="1.1" stroke-linejoin="round" stroke-linecap="round" /><path d="M371.4,350.5 L369.8,347.2 L369.8,343.6 L370.9,340.1 L370.2,336.5" fill="none" stroke="#75cff0" stroke-width="1.1" stroke-linejoin="round" stroke-linecap="round" /><path d="M387.8,469.2 L386.4,471.1 L384.3,472.3 L382.5,473.9" fill="none" stroke="#75cff0" stroke-width="1.1" stroke-linejoin="round" stroke-linecap="round" /><path d="M51.6,667.7 L50.0,670.0 L49.7,672.8 L49.3,675.5 L47.9,677.9" fill="none" stroke="#75cff0" stroke-width="1.0" stroke-linejoin="round" stroke-linecap="round" /><path d="M239.1,1036.1 L241.2,1035.1 L242.7,1033.4 L242.9,1031.0" fill="none" stroke="#75cff0" stroke-width="1.0" stroke-linejoin="round" stroke-linecap="round" /><path d="M326.6,984.8 L326.8,980.9 L325.2,977.4 L325.8,973.5" fill="none" stroke="#75cff0" stroke-width="1.0" stroke-linejoin="round" stroke-linecap="round" /><path d="M66.1,640.4 L67.6,640.3 L68.9,639.7 L70.0,638.8" fill="none" stroke="#75cff0" stroke-width="1.0" stroke-linejoin="round" stroke-linecap="round" /><path d="M410.0,644.4 L411.2,642.2 L413.0,640.5 L415.0,639.0 L416.4,637.0" fill="none" stroke="#75cff0" stroke-width="1.0" stroke-linejoin="round" stroke-linecap="round" /><path d="M157.7,683.0 L156.5,685.7 L155.3,688.4 L153.2,690.5 L151.3,692.8" fill="none" stroke="#75cff0" stroke-width="1.0" stroke-linejoin="round" stroke-linecap="round" /><path d="M314.7,605.8 L317.7,606.3 L320.8,606.3 L323.7,605.3" fill="none" stroke="#75cff0" stroke-width="1.0" stroke-linejoin="round" stroke-linecap="round" /><path d="M34.3,563.4 L36.1,562.8 L38.0,563.2 L39.5,564.4 L40.8,565.8 L42.1,567.2" fill="none" stroke="#75cff0" stroke-width="1.0" stroke-linejoin="round" stroke-linecap="round" /><path d="M233.1,673.6 L230.1,674.8 L227.0,675.9 L223.8,676.6" fill="none" stroke="#75cff0" stroke-width="1.0" stroke-linejoin="round" stroke-linecap="round" /><path d="M365.0,885.7 L366.9,886.3 L368.2,887.8 L369.4,889.4" fill="none" stroke="#75cff0" stroke-width="1.0" stroke-linejoin="round" stroke-linecap="round" /><path d="M426.9,953.4 L426.0,955.6 L426.4,957.9 L427.2,960.1 L428.8,961.8 L430.7,963.3" fill="none" stroke="#75cff0" stroke-width="1.0" stroke-linejoin="round" stroke-linecap="round" /><path d="M53.7,919.5 L54.9,919.4 L56.0,919.4 L57.0,919.9 L58.1,920.2 L59.0,920.9" fill="none" stroke="#75cff0" stroke-width="1.0" stroke-linejoin="round" stroke-linecap="round" /><path d="M33.6,1046.5 L33.8,1047.3 L33.7,1048.1 L33.4,1048.9 L33.2,1049.7 L33.4,1050.5" fill="none" stroke="#75cff0" stroke-width="1.0" stroke-linejoin="round" stroke-linecap="round" /><path d="M153.0,1040.6 L154.4,1040.4 L155.8,1040.8 L157.2,1040.4 L158.6,1040.6" fill="none" stroke="#75cff0" stroke-width="1.0" stroke-linejoin="round" stroke-linecap="round" /><path d="M125.7,836.8 L126.3,837.4 L126.5,838.4 L126.3,839.3 L125.8,840.1 L125.8,841.0" fill="none" stroke="#75cff0" stroke-width="1.0" stroke-linejoin="round" stroke-linecap="round" /><path d="M267.1,1060.1 L265.9,1059.2 L265.3,1057.8 L264.3,1056.7" fill="none" stroke="#75cff0" stroke-width="1.0" stroke-linejoin="round" stroke-linecap="round" /><path d="M153.1,920.3 L152.0,920.1 L150.9,920.1 L150.0,920.7 L149.0,921.2 L147.9,921.5" fill="none" stroke="#75cff0" stroke-width="1.0" stroke-linejoin="round" stroke-linecap="round" /><path d="M93.9,604.0 L93.3,601.2 L93.2,598.3 L93.2,595.5 L92.0,593.0" fill="none" stroke="#75cff0" stroke-width="1.0" stroke-linejoin="round" stroke-linecap="round" /><path d="M134.7,663.9 L135.5,664.8 L135.8,665.9 L136.3,667.0 L136.2,668.2" fill="none" stroke="#75cff0" stroke-width="1.0" stroke-linejoin="round" stroke-linecap="round" /><path d="M360.5,695.7 L361.6,697.5 L363.4,698.6 L365.2,699.9 L366.5,701.5" fill="none" stroke="#75cff0" stroke-width="1.0" stroke-linejoin="round" stroke-linecap="round" /><path d="M206.4,688.6 L207.6,688.3 L208.5,687.3 L209.2,686.3 L209.5,685.1 L210.2,684.0" fill="none" stroke="#75cff0" stroke-width="1.0" stroke-linejoin="round" stroke-linecap="round" /><path d="M196.2,603.1 L198.8,602.5 L200.7,600.8 L203.3,600.4 L205.7,599.4" fill="none" stroke="#75cff0" stroke-width="1.0" stroke-linejoin="round" stroke-linecap="round" /><path d="M239.6,807.0 L238.8,807.1 L238.0,807.4 L237.2,807.3 L236.5,806.8 L235.9,806.2" fill="none" stroke="#75cff0" stroke-width="1.0" stroke-linejoin="round" stroke-linecap="round" /><path d="M401.1,736.2 L402.0,737.6 L402.4,739.2 L402.7,740.9 L402.7,742.6" fill="none" stroke="#75cff0" stroke-width="1.0" stroke-linejoin="round" stroke-linecap="round" /><path d="M299.4,849.7 L302.0,848.6 L304.6,847.8 L307.4,848.2" fill="none" stroke="#75cff0" stroke-width="1.0" stroke-linejoin="round" stroke-linecap="round" /><path d="M138.0,897.7 L137.0,896.1 L135.4,895.2 L133.9,894.0 L132.2,893.1 L130.4,892.4" fill="none" stroke="#75cff0" stroke-width="1.0" stroke-linejoin="round" stroke-linecap="round" /><path d="M303.1,647.5 L301.8,643.9 L301.4,640.1 L300.6,636.4" fill="none" stroke="#75cff0" stroke-width="1.0" stroke-linejoin="round" stroke-linecap="round" /><path d="M341.4,600.0 L343.8,601.7 L346.8,602.2 L349.8,602.5 L352.7,603.0" fill="none" stroke="#75cff0" stroke-width="1.0" stroke-linejoin="round" stroke-linecap="round" /><path d="M435.7,653.8 L435.4,652.0 L434.2,650.5 L433.8,648.6 L433.8,646.7" fill="none" stroke="#75cff0" stroke-width="1.0" stroke-linejoin="round" stroke-linecap="round" /><path d="M131.7,620.5 L130.5,618.1 L129.5,615.5 L129.0,612.9 L128.0,610.3" fill="none" stroke="#75cff0" stroke-width="1.0" stroke-linejoin="round" stroke-linecap="round" /><path d="M192.0,611.6 L193.0,612.1 L194.2,612.2 L195.3,612.2 L196.4,611.8 L197.4,611.2" fill="none" stroke="#75cff0" stroke-width="1.0" stroke-linejoin="round" stroke-linecap="round" /><path d="M329.2,677.9 L328.2,677.2 L327.2,676.6 L326.1,676.3 L325.0,676.8" fill="none" stroke="#75cff0" stroke-width="1.0" stroke-linejoin="round" stroke-linecap="round" /><path d="M134.8,765.9 L136.6,766.1 L138.4,766.7 L139.6,768.1 L140.5,769.8" fill="none" stroke="#75cff0" stroke-width="1.0" stroke-linejoin="round" stroke-linecap="round" /><path d="M208.3,979.7 L210.6,979.7 L212.6,980.8 L214.2,982.5 L216.1,983.8 L218.4,984.2" fill="none" stroke="#75cff0" stroke-width="1.0" stroke-linejoin="round" stroke-linecap="round" /><path d="M224.0,914.3 L225.0,916.4 L226.5,918.1 L227.2,920.3" fill="none" stroke="#75cff0" stroke-width="1.0" stroke-linejoin="round" stroke-linecap="round" /><path d="M44.4,635.5 L42.9,639.1 L43.5,643.0 L44.8,646.7" fill="none" stroke="#75cff0" stroke-width="1.0" stroke-linejoin="round" stroke-linecap="round" /><path d="M21.3,898.0 L23.2,898.2 L24.9,897.5 L26.2,896.2" fill="none" stroke="#75cff0" stroke-width="1.0" stroke-linejoin="round" stroke-linecap="round" /><path d="M100.6,677.6 L98.4,677.0 L96.6,675.5 L95.6,673.4" fill="none" stroke="#75cff0" stroke-width="1.0" stroke-linejoin="round" stroke-linecap="round" /><path d="M418.2,917.6 L416.2,918.7 L414.4,919.9 L412.2,920.0" fill="none" stroke="#75cff0" stroke-width="1.0" stroke-linejoin="round" stroke-linecap="round" /><path d="M103.3,912.3 L101.9,910.5 L99.8,909.4 L97.8,908.3 L95.9,907.0" fill="none" stroke="#75cff0" stroke-width="1.0" stroke-linejoin="round" stroke-linecap="round" /><path d="M424.2,956.0 L424.9,956.7 L425.2,957.7 L426.0,958.4 L426.6,959.3 L426.9,960.3" fill="none" stroke="#75cff0" stroke-width="1.0" stroke-linejoin="round" stroke-linecap="round" /><path d="M54.4,611.4 L52.1,609.0 L50.8,606.1 L50.4,602.8" fill="none" stroke="#75cff0" stroke-width="1.0" stroke-linejoin="round" stroke-linecap="round" /><path d="M184.6,564.1 L183.2,562.5 L182.0,560.8 L180.8,559.2 L179.6,557.4" fill="none" stroke="#75cff0" stroke-width="1.0" stroke-linejoin="round" stroke-linecap="round" /><path d="M255.4,948.9 L255.4,948.1 L255.3,947.3 L254.9,946.5 L254.3,945.9 L253.7,945.3" fill="none" stroke="#75cff0" stroke-width="1.0" stroke-linejoin="round" stroke-linecap="round" /><path d="M210.1,613.5 L209.5,615.4 L209.9,617.2 L210.2,619.1 L209.5,620.9" fill="none" stroke="#75cff0" stroke-width="1.0" stroke-linejoin="round" stroke-linecap="round" /><path d="M733.7,878.6 L735.0,877.6 L736.7,877.3 L738.1,876.4 L739.7,875.7" fill="none" stroke="#75cff0" stroke-width="1.0" stroke-linejoin="round" stroke-linecap="round" /><path d="M757.8,813.7 L760.0,814.4 L762.1,815.5 L764.3,816.1 L766.6,816.1" fill="none" stroke="#75cff0" stroke-width="1.0" stroke-linejoin="round" stroke-linecap="round" /><path d="M695.5,586.5 L694.2,584.0 L694.3,581.2 L694.6,578.3 L695.5,575.6" fill="none" stroke="#75cff0" stroke-width="1.0" stroke-linejoin="round" stroke-linecap="round" /><path d="M500.4,588.2 L502.5,589.0 L504.3,590.4 L506.6,590.8" fill="none" stroke="#75cff0" stroke-width="1.0" stroke-linejoin="round" stroke-linecap="round" /><path d="M605.7,682.3 L605.8,683.3 L606.0,684.3 L606.5,685.2 L607.4,685.6" fill="none" stroke="#75cff0" stroke-width="1.0" stroke-linejoin="round" stroke-linecap="round" /><path d="M457.0,999.9 L455.6,997.0 L453.1,995.0 L450.2,993.6" fill="none" stroke="#75cff0" stroke-width="1.0" stroke-linejoin="round" stroke-linecap="round" /><path d="M469.7,698.8 L470.2,700.2 L470.7,701.6 L471.5,702.8 L472.2,704.1" fill="none" stroke="#75cff0" stroke-width="1.0" stroke-linejoin="round" stroke-linecap="round" /><path d="M844.4,715.2 L845.9,716.8 L848.0,717.5 L849.6,719.0 L851.8,719.4" fill="none" stroke="#75cff0" stroke-width="1.0" stroke-linejoin="round" stroke-linecap="round" /><path d="M719.3,783.6 L719.2,786.2 L719.2,788.7 L718.9,791.3 L720.0,793.6 L722.0,795.2" fill="none" stroke="#75cff0" stroke-width="1.0" stroke-linejoin="round" stroke-linecap="round" /><path d="M749.9,927.7 L748.1,928.7 L746.1,928.8 L744.2,927.9 L742.4,927.0" fill="none" stroke="#75cff0" stroke-width="1.0" stroke-linejoin="round" stroke-linecap="round" /><path d="M450.6,760.1 L450.5,757.7 L451.0,755.4 L451.8,753.1" fill="none" stroke="#75cff0" stroke-width="1.0" stroke-linejoin="round" stroke-linecap="round" /><path d="M587.4,874.3 L587.3,871.5 L588.3,869.0 L590.4,867.2 L593.0,866.5 L595.8,866.6" fill="none" stroke="#75cff0" stroke-width="1.0" stroke-linejoin="round" stroke-linecap="round" /><path d="M742.1,817.8 L742.7,815.8 L742.4,813.8 L741.4,812.0 L740.7,810.0 L740.2,808.1" fill="none" stroke="#75cff0" stroke-width="1.0" stroke-linejoin="round" stroke-linecap="round" /><path d="M542.3,655.1 L543.2,655.1 L544.2,655.2 L544.9,655.8 L545.5,656.5 L546.4,656.8" fill="none" stroke="#75cff0" stroke-width="1.0" stroke-linejoin="round" stroke-linecap="round" /><path d="M923.6,768.4 L925.6,764.8 L925.2,760.8 L926.3,756.9" fill="none" stroke="#75cff0" stroke-width="1.0" stroke-linejoin="round" stroke-linecap="round" /><path d="M847.6,674.9 L848.4,676.2 L848.6,677.7 L848.0,679.1 L847.0,680.3 L845.6,680.9" fill="none" stroke="#75cff0" stroke-width="1.0" stroke-linejoin="round" stroke-linecap="round" /><path d="M448.4,563.3 L449.3,560.0 L449.5,556.6 L449.1,553.2" fill="none" stroke="#75cff0" stroke-width="1.0" stroke-linejoin="round" stroke-linecap="round" /><path d="M695.3,786.7 L696.4,787.9 L697.9,788.4 L699.5,788.8" fill="none" stroke="#75cff0" stroke-width="1.0" stroke-linejoin="round" stroke-linecap="round" /><path d="M507.0,963.2 L504.9,963.3 L503.1,964.5 L502.2,966.5 L501.6,968.5" fill="none" stroke="#75cff0" stroke-width="1.0" stroke-linejoin="round" stroke-linecap="round" /><path d="M626.0,687.3 L624.8,691.2 L624.2,695.3 L624.7,699.4" fill="none" stroke="#75cff0" stroke-width="1.0" stroke-linejoin="round" stroke-linecap="round" /><path d="M813.3,673.1 L814.4,673.2 L815.4,672.8 L816.5,673.0 L817.6,673.4 L818.3,674.3" fill="none" stroke="#75cff0" stroke-width="1.0" stroke-linejoin="round" stroke-linecap="round" /><path d="M610.7,968.2 L611.9,968.6 L612.9,969.3 L614.0,969.9 L614.8,971.0 L615.9,971.5" fill="none" stroke="#75cff0" stroke-width="1.0" stroke-linejoin="round" stroke-linecap="round" /><path d="M761.1,655.0 L760.9,658.2 L761.6,661.4 L761.3,664.6 L759.6,667.3" fill="none" stroke="#75cff0" stroke-width="1.0" stroke-linejoin="round" stroke-linecap="round" /><path d="M762.8,678.2 L761.4,676.0 L759.6,673.9 L757.1,672.9 L755.1,671.1 L752.5,670.3" fill="none" stroke="#75cff0" stroke-width="1.0" stroke-linejoin="round" stroke-linecap="round" /><path d="M552.5,576.7 L554.1,577.8 L555.7,578.9 L557.0,580.4 L558.8,581.1" fill="none" stroke="#75cff0" stroke-width="1.0" stroke-linejoin="round" stroke-linecap="round" /><path d="M509.7,823.3 L511.2,820.4 L513.9,818.4 L517.2,818.2 L520.2,819.6" fill="none" stroke="#75cff0" stroke-width="1.0" stroke-linejoin="round" stroke-linecap="round" /><path d="M713.4,752.9 L711.4,751.6 L709.4,750.4 L707.1,749.6 L704.9,748.8 L702.7,747.8" fill="none" stroke="#75cff0" stroke-width="1.0" stroke-linejoin="round" stroke-linecap="round" /><path d="M585.8,791.0 L587.3,789.5 L589.3,788.8 L591.1,787.6" fill="none" stroke="#75cff0" stroke-width="1.0" stroke-linejoin="round" stroke-linecap="round" /><path d="M865.9,1028.2 L868.6,1025.2 L872.2,1023.4 L875.1,1020.7" fill="none" stroke="#75cff0" stroke-width="1.0" stroke-linejoin="round" stroke-linecap="round" /><path d="M749.9,999.0 L751.3,996.9 L752.2,994.6 L753.2,992.3" fill="none" stroke="#75cff0" stroke-width="1.0" stroke-linejoin="round" stroke-linecap="round" /><path d="M584.4,975.2 L582.9,973.8 L581.7,972.2 L580.2,970.9 L578.4,969.9 L576.3,969.9" fill="none" stroke="#75cff0" stroke-width="1.0" stroke-linejoin="round" stroke-linecap="round" /><path d="M846.1,1013.8 L849.8,1014.2 L853.5,1013.7 L857.0,1015.0" fill="none" stroke="#75cff0" stroke-width="1.0" stroke-linejoin="round" stroke-linecap="round" /><path d="M663.0,817.4 L662.7,819.6 L663.6,821.5 L664.4,823.6" fill="none" stroke="#75cff0" stroke-width="1.0" stroke-linejoin="round" stroke-linecap="round" /><path d="M820.3,897.9 L820.4,902.6 L821.4,907.1 L824.0,910.9" fill="none" stroke="#75cff0" stroke-width="1.0" stroke-linejoin="round" stroke-linecap="round" /><path d="M934.9,920.4 L935.8,921.2 L936.9,921.6 L938.0,921.9 L939.2,921.8 L940.3,921.9" fill="none" stroke="#75cff0" stroke-width="1.0" stroke-linejoin="round" stroke-linecap="round" /><path d="M600.5,858.3 L602.8,858.8 L604.7,860.1 L605.7,862.2 L606.2,864.5" fill="none" stroke="#75cff0" stroke-width="1.0" stroke-linejoin="round" stroke-linecap="round" /><path d="M652.0,643.6 L650.4,641.9 L648.4,640.9 L646.6,639.5" fill="none" stroke="#75cff0" stroke-width="1.0" stroke-linejoin="round" stroke-linecap="round" /><path d="M831.3,565.9 L830.6,564.6 L830.7,563.1 L830.5,561.6 L830.8,560.2" fill="none" stroke="#75cff0" stroke-width="1.0" stroke-linejoin="round" stroke-linecap="round" /><path d="M618.6,1034.1 L620.0,1037.3 L620.4,1040.9 L619.1,1044.1" fill="none" stroke="#75cff0" stroke-width="1.0" stroke-linejoin="round" stroke-linecap="round" /><path d="M834.2,837.0 L831.9,838.2 L829.4,838.8 L826.8,838.7 L824.7,837.3" fill="none" stroke="#75cff0" stroke-width="1.0" stroke-linejoin="round" stroke-linecap="round" /><path d="M759.6,1001.6 L759.3,1000.1 L759.6,998.5 L760.5,997.3 L761.9,996.6 L763.4,996.6" fill="none" stroke="#75cff0" stroke-width="1.0" stroke-linejoin="round" stroke-linecap="round" /><path d="M796.6,811.1 L796.4,813.2 L797.0,815.2 L796.9,817.2 L795.9,819.0 L795.5,821.1" fill="none" stroke="#75cff0" stroke-width="1.0" stroke-linejoin="round" stroke-linecap="round" /><path d="M511.6,616.6 L508.4,614.0 L504.3,613.5 L500.3,614.4" fill="none" stroke="#75cff0" stroke-width="1.0" stroke-linejoin="round" stroke-linecap="round" /><path d="M721.6,942.1 L718.9,942.6 L716.2,943.0 L714.3,944.9 L713.1,947.3" fill="none" stroke="#75cff0" stroke-width="1.0" stroke-linejoin="round" stroke-linecap="round" /><path d="M620.7,890.8 L620.9,892.1 L621.3,893.3 L621.2,894.6 L620.7,895.8 L619.9,896.8" fill="none" stroke="#75cff0" stroke-width="1.0" stroke-linejoin="round" stroke-linecap="round" /><path d="M727.8,869.7 L729.7,870.4 L731.8,870.7 L733.5,871.9 L735.4,872.4" fill="none" stroke="#75cff0" stroke-width="1.0" stroke-linejoin="round" stroke-linecap="round" /><path d="M498.6,728.7 L498.9,729.5 L499.7,729.9 L500.4,730.4 L501.2,730.6 L502.0,730.7" fill="none" stroke="#75cff0" stroke-width="1.0" stroke-linejoin="round" stroke-linecap="round" /><path d="M926.7,1053.0 L925.4,1055.7 L924.6,1058.5 L922.7,1060.8 L920.2,1062.4" fill="none" stroke="#75cff0" stroke-width="1.0" stroke-linejoin="round" stroke-linecap="round" /><path d="M812.4,1057.9 L810.2,1058.4 L808.1,1058.0 L806.3,1056.6 L804.3,1055.6 L802.2,1055.0" fill="none" stroke="#75cff0" stroke-width="1.0" stroke-linejoin="round" stroke-linecap="round" /><path d="M758.7,620.4 L758.7,623.0 L758.3,625.5 L758.4,628.1" fill="none" stroke="#75cff0" stroke-width="1.0" stroke-linejoin="round" stroke-linecap="round" /><path d="M469.5,962.2 L470.3,961.3 L470.8,960.1 L470.8,958.9 L471.0,957.7 L471.3,956.4" fill="none" stroke="#75cff0" stroke-width="1.0" stroke-linejoin="round" stroke-linecap="round" /><path d="M863.2,892.5 L862.3,889.4 L860.2,887.0 L859.4,883.9 L859.7,880.7" fill="none" stroke="#75cff0" stroke-width="1.0" stroke-linejoin="round" stroke-linecap="round" /><path d="M772.5,1039.8 L773.3,1037.2 L775.2,1035.3 L777.7,1034.5" fill="none" stroke="#75cff0" stroke-width="1.0" stroke-linejoin="round" stroke-linecap="round" /><path d="M443.2,563.6 L440.6,563.5 L438.2,564.6 L436.4,566.5 L434.1,567.7 L431.8,569.0" fill="none" stroke="#75cff0" stroke-width="1.0" stroke-linejoin="round" stroke-linecap="round" /><path d="M604.4,1044.2 L606.0,1044.8 L607.2,1046.1 L608.8,1047.0 L610.2,1048.0 L610.9,1049.7" fill="none" stroke="#75cff0" stroke-width="1.0" stroke-linejoin="round" stroke-linecap="round" /><path d="M508.2,776.8 L509.3,777.1 L510.4,777.0 L511.4,777.6 L512.1,778.4 L513.1,778.9" fill="none" stroke="#75cff0" stroke-width="1.0" stroke-linejoin="round" stroke-linecap="round" /><path d="M949.8,1004.9 L949.0,1004.9 L948.1,1004.7 L947.3,1004.9 L946.5,1005.1 L945.6,1005.0" fill="none" stroke="#75cff0" stroke-width="1.0" stroke-linejoin="round" stroke-linecap="round" /><path d="M815.1,647.3 L813.2,648.3 L811.1,648.2 L809.3,649.3 L807.3,650.2" fill="none" stroke="#75cff0" stroke-width="1.0" stroke-linejoin="round" stroke-linecap="round" /><path d="M510.8,995.8 L508.8,994.1 L506.3,993.3 L503.8,993.9 L501.2,993.6 L498.6,993.5" fill="none" stroke="#75cff0" stroke-width="1.0" stroke-linejoin="round" stroke-linecap="round" /><path d="M840.4,782.9 L837.9,784.4 L835.7,786.1 L833.1,787.4 L831.5,789.7" fill="none" stroke="#75cff0" stroke-width="1.0" stroke-linejoin="round" stroke-linecap="round" /><path d="M678.1,852.5 L678.6,849.2 L679.8,846.2 L680.6,843.1 L681.7,840.0" fill="none" stroke="#75cff0" stroke-width="1.0" stroke-linejoin="round" stroke-linecap="round" /><path d="M626.5,889.0 L629.5,887.6 L631.4,885.0 L632.8,882.1 L633.4,878.9" fill="none" stroke="#75cff0" stroke-width="1.0" stroke-linejoin="round" stroke-linecap="round" /><path d="M871.4,749.6 L873.1,749.6 L874.6,750.4 L875.6,751.8 L877.1,752.6" fill="none" stroke="#75cff0" stroke-width="1.0" stroke-linejoin="round" stroke-linecap="round" /><path d="M475.4,910.2 L474.9,911.7 L474.7,913.4 L474.2,915.0" fill="none" stroke="#75cff0" stroke-width="1.0" stroke-linejoin="round" stroke-linecap="round" /><path d="M949.5,645.2 L951.0,643.9 L953.0,643.5 L954.5,642.3 L956.4,641.6 L958.4,641.6" fill="none" stroke="#75cff0" stroke-width="1.0" stroke-linejoin="round" stroke-linecap="round" /><path d="M636.0,576.0 L636.8,574.1 L638.0,572.5 L638.2,570.4 L639.4,568.8 L641.3,568.0" fill="none" stroke="#75cff0" stroke-width="1.0" stroke-linejoin="round" stroke-linecap="round" /><path d="M621.6,956.0 L623.6,955.4 L625.7,955.6 L627.8,955.5 L629.8,955.9" fill="none" stroke="#75cff0" stroke-width="1.0" stroke-linejoin="round" stroke-linecap="round" /><path d="M931.5,748.5 L932.8,748.3 L934.1,747.9 L935.3,747.2 L936.2,746.2" fill="none" stroke="#75cff0" stroke-width="1.0" stroke-linejoin="round" stroke-linecap="round" /><path d="M627.5,756.7 L626.5,758.0 L625.8,759.5 L625.3,761.0 L624.0,762.0" fill="none" stroke="#75cff0" stroke-width="1.0" stroke-linejoin="round" stroke-linecap="round" /><path d="M581.8,651.6 L583.9,649.1 L585.1,646.0 L586.8,643.2" fill="none" stroke="#75cff0" stroke-width="1.0" stroke-linejoin="round" stroke-linecap="round" /><path d="M768.9,444.7 L770.5,441.3 L773.5,439.2 L776.4,436.8 L778.6,433.8 L779.1,430.2" fill="none" stroke="#75cff0" stroke-width="1.0" stroke-linejoin="round" stroke-linecap="round" /><path d="M762.1,345.6 L760.8,348.2 L761.0,351.1 L762.5,353.6 L764.7,355.5 L766.8,357.5" fill="none" stroke="#75cff0" stroke-width="1.0" stroke-linejoin="round" stroke-linecap="round" /><path d="M891.3,494.1 L894.1,491.9 L896.4,489.1 L897.5,485.8 L898.8,482.5" fill="none" stroke="#75cff0" stroke-width="1.0" stroke-linejoin="round" stroke-linecap="round" /><path d="M799.9,441.8 L796.1,443.0 L792.2,443.8 L788.2,443.4" fill="none" stroke="#75cff0" stroke-width="1.0" stroke-linejoin="round" stroke-linecap="round" /><path d="M880.6,374.6 L881.5,376.4 L882.6,378.0 L883.2,379.9 L884.1,381.7 L884.1,383.7" fill="none" stroke="#75cff0" stroke-width="1.0" stroke-linejoin="round" stroke-linecap="round" /><path d="M595.7,480.4 L598.2,478.8 L600.2,476.6 L601.4,473.9 L601.9,471.0" fill="none" stroke="#75cff0" stroke-width="1.0" stroke-linejoin="round" stroke-linecap="round" /><path d="M587.1,378.9 L590.2,379.9 L592.4,382.5 L595.1,384.4 L597.7,386.5" fill="none" stroke="#75cff0" stroke-width="1.0" stroke-linejoin="round" stroke-linecap="round" /><path d="M913.4,484.4 L915.6,482.5 L918.2,481.2 L920.5,479.4 L922.3,477.2 L924.8,475.7" fill="none" stroke="#75cff0" stroke-width="1.0" stroke-linejoin="round" stroke-linecap="round" /><path d="M853.0,388.6 L851.5,389.9 L850.4,391.6 L849.3,393.3 L849.2,395.2 L849.6,397.2" fill="none" stroke="#75cff0" stroke-width="1.0" stroke-linejoin="round" stroke-linecap="round" /><path d="M758.1,533.7 L759.1,531.2 L760.7,528.9 L763.2,528.0 L765.2,526.1 L767.8,525.4" fill="none" stroke="#75cff0" stroke-width="1.0" stroke-linejoin="round" stroke-linecap="round" /><path d="M949.2,394.6 L951.6,388.4 L954.6,382.6 L959.4,378.1" fill="none" stroke="#75cff0" stroke-width="1.0" stroke-linejoin="round" stroke-linecap="round" /><path d="M665.1,482.9 L665.6,479.4 L666.5,475.9 L667.7,472.5 L668.7,469.0 L669.2,465.4" fill="none" stroke="#75cff0" stroke-width="1.0" stroke-linejoin="round" stroke-linecap="round" /><path d="M742.7,423.5 L740.7,423.8 L738.9,424.5 L736.9,424.1 L735.3,423.0" fill="none" stroke="#75cff0" stroke-width="1.0" stroke-linejoin="round" stroke-linecap="round" /><path d="M739.1,360.1 L744.6,356.7 L750.8,355.1 L757.3,354.4" fill="none" stroke="#75cff0" stroke-width="1.0" stroke-linejoin="round" stroke-linecap="round" /><path d="M607.5,364.2 L606.3,361.5 L606.3,358.6 L607.3,355.8 L608.3,352.9 L610.3,350.8" fill="none" stroke="#75cff0" stroke-width="1.0" stroke-linejoin="round" stroke-linecap="round" /><path d="M679.3,432.6 L675.4,432.9 L671.6,431.8 L667.7,431.7 L664.3,429.8 L662.0,426.6" fill="none" stroke="#75cff0" stroke-width="1.0" stroke-linejoin="round" stroke-linecap="round" /><path d="M829.3,318.1 L829.7,320.2 L831.1,321.7 L833.1,322.5 L834.5,324.0" fill="none" stroke="#75cff0" stroke-width="1.0" stroke-linejoin="round" stroke-linecap="round" /><path d="M797.7,509.3 L800.2,508.1 L802.9,507.3 L805.0,505.5 L807.0,503.5 L807.9,500.9" fill="none" stroke="#75cff0" stroke-width="1.0" stroke-linejoin="round" stroke-linecap="round" /><path d="M742.5,531.4 L747.2,534.2 L751.8,537.2 L755.7,541.1" fill="none" stroke="#75cff0" stroke-width="1.0" stroke-linejoin="round" stroke-linecap="round" /><path d="M720.8,488.3 L720.8,490.2 L721.3,491.9 L722.5,493.4 L723.3,495.1" fill="none" stroke="#75cff0" stroke-width="1.0" stroke-linejoin="round" stroke-linecap="round" /><path d="M829.1,360.9 L828.2,359.9 L827.4,358.9 L826.4,358.1 L825.9,356.9 L825.3,355.8" fill="none" stroke="#75cff0" stroke-width="1.0" stroke-linejoin="round" stroke-linecap="round" /><path d="M626.2,507.9 L625.2,506.3 L624.6,504.4 L624.7,502.5 L624.5,500.5 L623.7,498.8" fill="none" stroke="#75cff0" stroke-width="1.0" stroke-linejoin="round" stroke-linecap="round" /><path d="M581.7,516.2 L582.9,518.1 L583.0,520.3 L583.0,522.5 L583.8,524.6 L583.8,526.8" fill="none" stroke="#75cff0" stroke-width="1.0" stroke-linejoin="round" stroke-linecap="round" /><path d="M824.5,324.6 L819.4,326.1 L814.1,325.3 L809.0,326.7" fill="none" stroke="#75cff0" stroke-width="1.0" stroke-linejoin="round" stroke-linecap="round" /><path d="M659.5,338.4 L656.0,340.6 L653.9,344.1 L650.8,346.7" fill="none" stroke="#75cff0" stroke-width="1.0" stroke-linejoin="round" stroke-linecap="round" /><path d="M789.4,494.5 L792.1,497.3 L793.6,500.9 L796.6,503.3 L799.3,506.1 L802.5,508.2" fill="none" stroke="#75cff0" stroke-width="1.0" stroke-linejoin="round" stroke-linecap="round" /><path d="M572.3,483.9 L576.8,487.0 L582.2,487.4 L587.6,487.6" fill="none" stroke="#75cff0" stroke-width="1.0" stroke-linejoin="round" stroke-linecap="round" /><path d="M947.0,432.7 L944.4,430.7 L941.3,429.6 L938.0,429.2 L935.1,427.6" fill="none" stroke="#75cff0" stroke-width="1.0" stroke-linejoin="round" stroke-linecap="round" /><path d="M687.9,470.7 L691.7,471.0 L695.4,472.0 L699.0,473.2 L702.8,472.6 L705.7,470.2" fill="none" stroke="#75cff0" stroke-width="1.0" stroke-linejoin="round" stroke-linecap="round" /><path d="M678.5,421.3 L677.0,421.6 L675.5,422.2 L674.5,423.4 L673.2,424.1" fill="none" stroke="#75cff0" stroke-width="1.0" stroke-linejoin="round" stroke-linecap="round" /><path d="M876.9,481.8 L877.7,482.8 L877.9,484.0 L878.3,485.2 L878.2,486.5 L878.7,487.6" fill="none" stroke="#75cff0" stroke-width="1.0" stroke-linejoin="round" stroke-linecap="round" /><path d="M591.9,467.3 L591.0,464.7 L589.3,462.5 L586.7,461.7 L584.0,460.9" fill="none" stroke="#75cff0" stroke-width="1.0" stroke-linejoin="round" stroke-linecap="round" /><path d="M666.4,531.0 L668.5,535.0 L671.9,537.9 L676.1,539.6" fill="none" stroke="#75cff0" stroke-width="1.0" stroke-linejoin="round" stroke-linecap="round" /><path d="M853.5,481.5 L851.5,478.0 L851.2,474.0 L851.8,470.1 L853.6,466.5 L854.3,462.6" fill="none" stroke="#75cff0" stroke-width="1.0" stroke-linejoin="round" stroke-linecap="round" /><path d="M928.9,469.5 L929.8,470.7 L930.9,471.8 L932.1,472.6 L933.1,473.8" fill="none" stroke="#75cff0" stroke-width="1.0" stroke-linejoin="round" stroke-linecap="round" /><path d="M658.5,319.1 L656.9,321.3 L654.5,322.6 L651.8,322.5 L649.2,321.5" fill="none" stroke="#75cff0" stroke-width="1.0" stroke-linejoin="round" stroke-linecap="round" /><path d="M763.4,357.8 L766.4,358.0 L769.2,359.4 L770.9,362.0 L771.4,365.1 L771.9,368.1" fill="none" stroke="#75cff0" stroke-width="1.0" stroke-linejoin="round" stroke-linecap="round" /><path d="M840.2,384.9 L838.5,385.5 L836.7,385.4 L835.0,384.8 L833.2,384.8 L831.7,385.6" fill="none" stroke="#75cff0" stroke-width="1.0" stroke-linejoin="round" stroke-linecap="round" /><path d="M828.1,389.6 L822.4,387.9 L816.7,385.6 L811.8,382.0" fill="none" stroke="#75cff0" stroke-width="1.0" stroke-linejoin="round" stroke-linecap="round" /><path d="M778.4,315.1 L775.8,316.6 L773.6,318.6 L771.8,320.9 L769.4,322.6 L767.5,324.9" fill="none" stroke="#75cff0" stroke-width="1.0" stroke-linejoin="round" stroke-linecap="round" /><path d="M866.8,436.2 L865.7,435.2 L864.5,434.3 L863.2,433.6 L862.4,432.4 L862.4,430.9" fill="none" stroke="#75cff0" stroke-width="1.0" stroke-linejoin="round" stroke-linecap="round" /><path d="M869.9,534.2 L866.5,536.2 L862.5,536.6 L859.0,538.4 L857.0,541.7 L856.5,545.7" fill="none" stroke="#75cff0" stroke-width="1.0" stroke-linejoin="round" stroke-linecap="round" /><path d="M932.5,426.2 L935.4,425.3 L938.3,424.3 L940.7,422.6 L943.3,420.9 L945.3,418.6" fill="none" stroke="#75cff0" stroke-width="1.0" stroke-linejoin="round" stroke-linecap="round" /><path d="M690.7,454.6 L693.7,448.7 L695.8,442.4 L697.2,435.9" fill="none" stroke="#75cff0" stroke-width="1.0" stroke-linejoin="round" stroke-linecap="round" /><path d="M727.4,381.7 L724.4,379.9 L721.2,378.5 L717.8,377.8 L714.3,378.5 L710.8,378.8" fill="none" stroke="#75cff0" stroke-width="1.0" stroke-linejoin="round" stroke-linecap="round" /><path d="M693.9,326.5 L692.4,329.6 L691.7,332.9 L689.7,335.7 L687.9,338.6 L686.7,341.8" fill="none" stroke="#75cff0" stroke-width="1.0" stroke-linejoin="round" stroke-linecap="round" /><path d="M665.2,400.3 L663.0,401.8 L661.1,403.7 L660.0,406.1 L659.6,408.7" fill="none" stroke="#75cff0" stroke-width="1.0" stroke-linejoin="round" stroke-linecap="round" /><path d="M731.6,537.8 L735.8,535.4 L739.9,532.7 L743.1,529.0 L743.6,524.1" fill="none" stroke="#75cff0" stroke-width="1.0" stroke-linejoin="round" stroke-linecap="round" /><path d="M882.8,470.1 L884.9,471.0 L886.8,472.1 L888.6,473.3 L890.7,473.9 L892.6,475.1" fill="none" stroke="#75cff0" stroke-width="1.0" stroke-linejoin="round" stroke-linecap="round" /><path d="M762.9,472.2 L764.0,473.9 L764.9,475.8 L766.0,477.5" fill="none" stroke="#75cff0" stroke-width="1.0" stroke-linejoin="round" stroke-linecap="round" /><path d="M789.9,522.9 L790.6,525.4 L790.2,528.0 L789.6,530.5 L789.1,533.0 L787.4,535.0" fill="none" stroke="#75cff0" stroke-width="1.0" stroke-linejoin="round" stroke-linecap="round" /><path d="M818.2,470.2 L821.9,468.8 L825.9,468.2 L829.2,466.0" fill="none" stroke="#75cff0" stroke-width="1.0" stroke-linejoin="round" stroke-linecap="round" /><path d="M609.6,490.6 L610.8,491.7 L611.7,493.0 L612.3,494.5 L612.4,496.1 L612.7,497.7" fill="none" stroke="#75cff0" stroke-width="1.0" stroke-linejoin="round" stroke-linecap="round" /><path d="M625.9,501.1 L624.2,504.4 L623.6,508.1 L624.3,511.8 L625.4,515.4" fill="none" stroke="#75cff0" stroke-width="1.0" stroke-linejoin="round" stroke-linecap="round" /><path d="M915.5,314.5 L912.7,313.6 L909.8,313.1 L907.0,313.6" fill="none" stroke="#75cff0" stroke-width="1.0" stroke-linejoin="round" stroke-linecap="round" /><path d="M738.9,480.6 L738.8,476.8 L739.7,473.2 L738.9,469.6 L738.5,465.9" fill="none" stroke="#75cff0" stroke-width="1.0" stroke-linejoin="round" stroke-linecap="round" /><path d="M794.7,477.8 L793.2,479.6 L791.0,480.6 L788.7,480.7 L786.5,481.7 L784.4,482.6" fill="none" stroke="#75cff0" stroke-width="1.0" stroke-linejoin="round" stroke-linecap="round" /><path d="M715.4,523.8 L715.7,525.1 L716.1,526.3 L716.4,527.6 L716.3,528.9 L716.8,530.1" fill="none" stroke="#75cff0" stroke-width="1.0" stroke-linejoin="round" stroke-linecap="round" /><path d="M933.0,414.1 L933.3,412.7 L934.0,411.4 L933.8,409.9 L934.2,408.5 L934.7,407.2" fill="none" stroke="#75cff0" stroke-width="1.0" stroke-linejoin="round" stroke-linecap="round" /><path d="M686.6,329.2 L683.4,329.7 L680.3,328.9 L677.0,328.8 L674.3,326.9" fill="none" stroke="#75cff0" stroke-width="1.0" stroke-linejoin="round" stroke-linecap="round" /><path d="M555.6,630.2 L557.8,626.5 L560.2,623.1 L563.6,620.6" fill="none" stroke="#75cff0" stroke-width="1.0" stroke-linejoin="round" stroke-linecap="round" /><path d="M621.6,680.2 L621.2,681.7 L620.4,683.0 L619.8,684.4 L618.6,685.3 L618.0,686.7" fill="none" stroke="#75cff0" stroke-width="1.0" stroke-linejoin="round" stroke-linecap="round" /><path d="M610.9,524.9 L614.5,524.3 L617.8,523.0 L620.4,520.5" fill="none" stroke="#75cff0" stroke-width="1.0" stroke-linejoin="round" stroke-linecap="round" /><path d="M432.5,440.6 L432.7,439.0 L433.6,437.7 L434.5,436.4" fill="none" stroke="#75cff0" stroke-width="1.0" stroke-linejoin="round" stroke-linecap="round" /><path d="M643.2,692.3 L641.3,692.9 L639.4,693.3 L637.5,692.6 L635.6,691.9" fill="none" stroke="#75cff0" stroke-width="1.0" stroke-linejoin="round" stroke-linecap="round" /><path d="M622.1,668.9 L622.2,666.2 L621.8,663.6 L622.6,661.0 L623.2,658.4" fill="none" stroke="#75cff0" stroke-width="1.0" stroke-linejoin="round" stroke-linecap="round" /><path d="M597.9,492.7 L597.1,491.8 L595.9,491.4 L594.8,490.8 L593.6,490.7 L592.5,490.0" fill="none" stroke="#75cff0" stroke-width="1.0" stroke-linejoin="round" stroke-linecap="round" /><path d="M436.2,456.1 L438.7,453.9 L441.9,452.8 L444.5,450.6" fill="none" stroke="#75cff0" stroke-width="1.0" stroke-linejoin="round" stroke-linecap="round" /><path d="M620.8,501.8 L618.5,503.1 L616.1,504.3 L613.6,505.1" fill="none" stroke="#75cff0" stroke-width="1.0" stroke-linejoin="round" stroke-linecap="round" /><path d="M552.7,467.5 L551.4,467.3 L550.2,466.6 L548.8,466.6 L547.4,466.4 L546.0,466.6" fill="none" stroke="#75cff0" stroke-width="1.0" stroke-linejoin="round" stroke-linecap="round" /><path d="M527.1,612.4 L527.5,611.7 L527.5,610.9 L527.7,610.1 L528.1,609.5 L528.5,608.8" fill="none" stroke="#75cff0" stroke-width="1.0" stroke-linejoin="round" stroke-linecap="round" /><path d="M661.1,465.4 L659.9,466.0 L659.1,467.0 L657.8,467.2 L656.6,467.6 L655.4,468.1" fill="none" stroke="#75cff0" stroke-width="1.0" stroke-linejoin="round" stroke-linecap="round" /><path d="M604.5,470.2 L606.3,468.2 L608.8,467.2 L610.6,465.1 L613.2,464.2" fill="none" stroke="#75cff0" stroke-width="1.0" stroke-linejoin="round" stroke-linecap="round" /><path d="M547.0,638.9 L545.1,636.9 L542.6,635.9 L539.9,635.2 L537.2,635.3 L534.7,636.3" fill="none" stroke="#75cff0" stroke-width="1.0" stroke-linejoin="round" stroke-linecap="round" /><path d="M554.0,560.7 L551.1,563.2 L548.4,565.9 L545.3,568.3" fill="none" stroke="#75cff0" stroke-width="1.0" stroke-linejoin="round" stroke-linecap="round" /><path d="M657.8,585.3 L660.3,585.1 L662.8,585.1 L665.2,584.2 L667.6,584.3" fill="none" stroke="#75cff0" stroke-width="1.0" stroke-linejoin="round" stroke-linecap="round" /><path d="M498.4,522.4 L497.4,521.2 L496.0,520.6 L494.6,520.2" fill="none" stroke="#75cff0" stroke-width="1.0" stroke-linejoin="round" stroke-linecap="round" /><path d="M626.3,552.8 L624.3,551.3 L622.1,550.2 L619.6,550.5 L617.2,550.0 L614.7,550.7" fill="none" stroke="#75cff0" stroke-width="1.0" stroke-linejoin="round" stroke-linecap="round" /><path d="M529.0,454.4 L529.2,451.6 L528.1,448.9 L526.5,446.6" fill="none" stroke="#75cff0" stroke-width="1.0" stroke-linejoin="round" stroke-linecap="round" /><path d="M471.9,632.8 L470.6,632.0 L469.8,630.7 L468.7,629.6 L468.0,628.3" fill="none" stroke="#75cff0" stroke-width="1.0" stroke-linejoin="round" stroke-linecap="round" /><path d="M402.9,453.5 L402.4,451.0 L401.7,448.6 L399.9,446.7" fill="none" stroke="#75cff0" stroke-width="1.0" stroke-linejoin="round" stroke-linecap="round" /><path d="M500.1,698.5 L502.6,698.6 L504.7,700.0 L507.0,700.8" fill="none" stroke="#75cff0" stroke-width="1.0" stroke-linejoin="round" stroke-linecap="round" /><path d="M442.3,543.4 L445.0,544.6 L447.9,544.7 L450.5,546.0" fill="none" stroke="#75cff0" stroke-width="1.0" stroke-linejoin="round" stroke-linecap="round" /><path d="M541.2,600.9 L541.5,602.4 L542.5,603.4 L543.9,604.0" fill="none" stroke="#75cff0" stroke-width="1.0" stroke-linejoin="round" stroke-linecap="round" /><path d="M677.1,502.4 L678.5,506.2 L679.7,510.1 L681.0,513.9" fill="none" stroke="#75cff0" stroke-width="1.0" stroke-linejoin="round" stroke-linecap="round" /><path d="M394.7,611.8 L393.8,614.2 L392.1,616.0 L389.6,616.7 L387.6,618.2 L386.1,620.2" fill="none" stroke="#75cff0" stroke-width="1.0" stroke-linejoin="round" stroke-linecap="round" /><path d="M670.7,663.3 L671.5,664.2 L672.5,664.7 L673.8,664.8 L675.0,664.6 L676.2,664.3" fill="none" stroke="#75cff0" stroke-width="1.0" stroke-linejoin="round" stroke-linecap="round" /><path d="M424.1,476.7 L426.1,475.9 L428.3,476.5 L430.3,477.3 L432.3,478.1" fill="none" stroke="#75cff0" stroke-width="1.0" stroke-linejoin="round" stroke-linecap="round" /><path d="M423.0,624.7 L420.4,628.1 L416.7,630.6 L412.8,632.5" fill="none" stroke="#75cff0" stroke-width="1.0" stroke-linejoin="round" stroke-linecap="round" /><path d="M686.6,696.5 L686.4,695.5 L686.0,694.7 L685.4,694.0 L684.5,693.7 L683.5,693.7" fill="none" stroke="#75cff0" stroke-width="1.0" stroke-linejoin="round" stroke-linecap="round" /><path d="M442.6,489.8 L443.2,488.2 L443.0,486.4 L443.4,484.7" fill="none" stroke="#75cff0" stroke-width="1.0" stroke-linejoin="round" stroke-linecap="round" /><path d="M381.5,549.4 L382.0,550.4 L382.6,551.4 L383.4,552.3 L384.2,553.0" fill="none" stroke="#75cff0" stroke-width="1.0" stroke-linejoin="round" stroke-linecap="round" /><path d="M410.0,427.8 L406.3,428.1 L402.7,428.3 L399.2,428.9" fill="none" stroke="#75cff0" stroke-width="1.0" stroke-linejoin="round" stroke-linecap="round" /><path d="M450.4,575.8 L449.3,577.1 L447.9,577.9 L446.2,578.2 L444.5,578.2 L443.0,578.9" fill="none" stroke="#75cff0" stroke-width="1.0" stroke-linejoin="round" stroke-linecap="round" /><path d="M656.9,561.8 L657.6,560.8 L658.5,560.1 L659.7,559.7 L660.9,559.7" fill="none" stroke="#75cff0" stroke-width="1.0" stroke-linejoin="round" stroke-linecap="round" /><path d="M555.7,680.7 L555.1,679.8 L554.2,679.1 L553.2,678.7 L552.4,677.9 L551.7,677.0" fill="none" stroke="#75cff0" stroke-width="1.0" stroke-linejoin="round" stroke-linecap="round" /><path d="M557.0,490.2 L553.9,489.7 L551.2,488.2 L548.2,487.5 L545.2,488.3" fill="none" stroke="#75cff0" stroke-width="1.0" stroke-linejoin="round" stroke-linecap="round" /><path d="M622.5,442.0 L625.3,440.7 L627.7,438.9 L629.2,436.2 L630.8,433.6" fill="none" stroke="#75cff0" stroke-width="1.0" stroke-linejoin="round" stroke-linecap="round" /><path d="M516.5,660.9 L518.3,660.3 L520.2,660.4 L521.8,661.5 L523.3,662.8 L524.3,664.4" fill="none" stroke="#75cff0" stroke-width="1.0" stroke-linejoin="round" stroke-linecap="round" /><path d="M654.1,699.7 L652.5,701.3 L650.6,702.3 L648.4,702.2" fill="none" stroke="#75cff0" stroke-width="1.0" stroke-linejoin="round" stroke-linecap="round" /><path d="M565.6,591.5 L564.3,590.9 L563.2,589.9 L562.7,588.5" fill="none" stroke="#75cff0" stroke-width="1.0" stroke-linejoin="round" stroke-linecap="round" /><path d="M441.4,660.9 L441.3,662.9 L441.2,664.9 L442.2,666.7 L442.1,668.7" fill="none" stroke="#75cff0" stroke-width="1.0" stroke-linejoin="round" stroke-linecap="round" /><path d="M658.7,681.7 L660.1,681.1 L661.4,680.5 L662.5,679.4" fill="none" stroke="#75cff0" stroke-width="1.0" stroke-linejoin="round" stroke-linecap="round" /><path d="M416.8,589.0 L419.5,588.9 L422.2,589.5 L424.8,590.2" fill="none" stroke="#75cff0" stroke-width="1.0" stroke-linejoin="round" stroke-linecap="round" /><path d="M409.6,611.9 L411.3,613.0 L412.7,614.5 L414.8,614.9 L416.5,616.0 L418.5,616.6" fill="none" stroke="#75cff0" stroke-width="1.0" stroke-linejoin="round" stroke-linecap="round" /><path d="M107.9,458.4 L108.6,456.3 L111.5,456.4 L113.9,455.9 L113.5,457.6 L112.6,459.3 L110.0,459.2Z" fill="#75cff0" /><path d="M173.8,393.0 L174.9,391.2 L176.0,389.7 L178.2,389.4 L178.2,391.0 L177.1,392.0 L175.8,393.0Z" fill="#75cff0" /><path d="M233.1,389.6 L232.4,389.0 L233.5,388.1 L234.4,387.3 L234.9,387.9 L235.1,389.0 L233.9,389.4Z" fill="#75cff0" /><path d="M267.7,373.7 L266.8,374.5 L264.9,373.5 L264.2,371.8 L265.2,371.1 L266.6,371.8 L267.7,372.6Z" fill="#75cff0" /><path d="M203.8,355.0 L202.6,355.8 L200.8,355.5 L199.8,354.4 L199.7,353.2 L201.4,352.7 L204.5,353.2Z" fill="#75cff0" /><path d="M173.7,404.7 L172.7,405.3 L171.6,404.2 L170.3,403.3 L171.3,402.8 L172.4,402.4 L173.3,403.6Z" fill="#75cff0" /><path d="M60.3,332.7 L58.5,333.0 L59.2,330.4 L60.1,329.1 L61.1,329.7 L61.8,330.7 L61.6,332.9Z" fill="#75cff0" /><path d="M273.6,355.4 L272.1,355.9 L270.6,355.8 L269.7,354.9 L269.2,353.6 L271.1,353.0 L272.3,354.4Z" fill="#75cff0" /><path d="M144.1,326.5 L143.6,325.2 L145.9,324.7 L147.7,324.8 L148.3,326.0 L146.7,327.2 L144.5,327.9Z" fill="#75cff0" /><path d="M111.1,385.6 L110.3,385.5 L110.0,384.3 L109.9,382.8 L110.9,382.9 L111.7,383.8 L112.3,385.6Z" fill="#75cff0" /><path d="M61.8,391.9 L61.5,390.1 L61.5,388.0 L63.2,387.0 L63.8,388.3 L64.5,389.5 L63.4,391.1Z" fill="#75cff0" /><path d="M280.3,421.2 L280.1,419.5 L280.9,417.6 L282.4,416.6 L282.8,418.0 L283.3,419.2 L282.0,420.6Z" fill="#75cff0" /><path d="M140.0,396.9 L138.7,395.9 L137.0,394.6 L137.6,392.6 L139.0,392.0 L140.5,393.4 L140.1,395.2Z" fill="#75cff0" /><path d="M69.1,368.6 L67.9,368.4 L67.0,366.7 L67.3,365.1 L68.4,365.1 L69.7,365.8 L70.1,367.8Z" fill="#75cff0" /><path d="M291.4,313.5 L289.8,314.2 L287.7,313.0 L287.3,311.6 L287.2,310.0 L289.3,310.6 L291.0,311.8Z" fill="#75cff0" /><path d="M70.2,327.1 L71.0,325.8 L72.2,324.6 L74.9,323.8 L74.3,325.8 L73.9,327.5 L71.6,327.7Z" fill="#75cff0" /><path d="M284.1,362.8 L282.9,362.7 L282.5,360.5 L283.7,359.2 L284.7,359.4 L286.0,360.5 L285.8,363.3Z" fill="#75cff0" /><path d="M225.0,360.6 L224.3,359.7 L223.6,358.6 L224.0,357.2 L224.9,357.8 L225.3,358.6 L225.6,359.7Z" fill="#75cff0" /><path d="M63.0,447.1 L61.4,446.3 L60.5,444.2 L61.5,443.2 L62.3,442.5 L63.3,443.6 L64.1,445.7Z" fill="#75cff0" /><path d="M93.0,328.2 L91.6,327.7 L90.9,326.6 L90.1,325.1 L90.9,324.0 L92.6,325.2 L93.3,326.8Z" fill="#75cff0" /><path d="M37.0,340.4 L37.0,338.8 L39.4,339.0 L40.9,339.2 L41.1,340.2 L40.1,341.5 L38.1,341.2Z" fill="#75cff0" /><path d="M201.9,319.7 L201.7,318.6 L202.3,317.1 L203.9,316.3 L204.9,317.1 L205.0,319.0 L203.0,319.6Z" fill="#75cff0" /><path d="M197.8,389.1 L196.1,389.2 L195.3,387.2 L194.6,385.8 L195.6,385.7 L196.9,385.6 L198.2,387.4Z" fill="#75cff0" /><path d="M131.8,457.3 L131.1,456.5 L131.3,454.2 L133.2,453.5 L134.0,454.5 L133.6,456.0 L133.0,458.2Z" fill="#75cff0" /><path d="M92.8,327.5 L93.2,326.1 L93.2,324.3 L94.8,324.2 L95.9,324.6 L95.2,326.2 L94.1,327.2Z" fill="#75cff0" /><path d="M915.6,916.6 L916.5,914.8 L918.3,913.4 L920.0,913.6 L920.8,914.5 L919.2,915.7 L917.4,917.0Z" fill="#75cff0" /><path d="M907.8,947.7 L907.0,946.7 L908.4,944.7 L910.2,944.1 L910.1,945.6 L909.8,946.5 L908.9,947.5Z" fill="#75cff0" /><path d="M880.9,1018.9 L879.8,1017.3 L880.6,1015.0 L881.3,1012.8 L882.5,1013.7 L883.1,1015.3 L882.1,1016.9Z" fill="#75cff0" /><path d="M915.2,1050.1 L914.7,1049.9 L915.0,1048.9 L915.4,1047.6 L916.2,1048.0 L916.5,1049.1 L915.7,1050.0Z" fill="#75cff0" /><path d="M920.2,1015.4 L921.3,1014.2 L922.9,1013.1 L924.5,1013.7 L924.3,1014.7 L923.6,1015.9 L922.0,1015.6Z" fill="#75cff0" /><path d="M891.3,992.0 L890.7,991.8 L891.2,990.8 L891.8,990.6 L892.7,990.1 L892.1,991.3 L891.7,992.0Z" fill="#75cff0" /><path d="M898.4,942.7 L897.2,941.8 L897.1,939.8 L897.6,938.6 L898.6,937.7 L899.3,939.6 L899.3,941.6Z" fill="#75cff0" /><path d="M945.1,902.5 L944.1,902.5 L944.5,900.8 L945.2,900.0 L945.9,900.3 L946.8,901.1 L945.7,902.2Z" fill="#75cff0" /><path d="M932.8,1017.8 L932.1,1016.4 L933.2,1013.4 L935.1,1013.8 L937.4,1013.2 L936.5,1016.1 L934.4,1017.3Z" fill="#75cff0" /><path d="M952.0,950.1 L951.2,949.7 L950.4,949.4 L950.3,948.5 L950.7,948.2 L951.6,948.3 L952.2,949.4Z" fill="#75cff0" /><path d="M947.2,1043.5 L948.9,1041.7 L951.2,1041.5 L953.5,1041.4 L954.2,1042.8 L952.4,1044.7 L949.2,1044.5Z" fill="#75cff0" /><path d="M907.9,914.4 L907.0,915.0 L905.2,915.7 L902.7,914.6 L903.6,913.2 L905.8,913.2 L908.1,913.0Z" fill="#75cff0" /><path d="M858.2,1016.7 L858.6,1015.7 L860.3,1015.0 L861.5,1015.7 L863.5,1016.6 L861.0,1017.8 L859.1,1017.3Z" fill="#75cff0" /><path d="M895.8,918.0 L894.5,919.1 L893.3,916.3 L892.7,913.6 L894.3,912.5 L895.8,915.3 L897.2,917.5Z" fill="#75cff0" /><path d="M948.7,938.2 L947.7,938.0 L948.5,936.3 L949.9,935.1 L950.8,935.9 L950.4,937.5 L949.4,938.6Z" fill="#75cff0" /><path d="M904.6,1005.8 L902.8,1006.4 L900.5,1005.3 L899.5,1003.8 L898.8,1001.7 L901.8,1002.2 L904.5,1003.9Z" fill="#75cff0" /><path d="M870.6,979.2 L870.2,979.8 L868.7,979.4 L868.1,978.3 L868.3,977.4 L869.6,978.1 L870.8,978.5Z" fill="#75cff0" /><path d="M857.7,987.8 L856.3,987.4 L855.3,986.4 L854.6,985.2 L855.4,984.9 L856.6,984.9 L857.2,986.3Z" fill="#75cff0" /><path d="M935.9,1000.1 L935.8,998.2 L935.4,996.2 L937.1,994.8 L937.9,995.9 L938.4,997.4 L937.6,1000.1Z" fill="#75cff0" /><path d="M917.5,991.1 L916.3,991.8 L914.3,991.8 L913.2,990.7 L913.8,989.9 L914.9,988.8 L916.5,990.0Z" fill="#75cff0" /><path d="M864.6,973.3 L864.4,972.0 L864.9,969.8 L866.6,969.6 L867.8,969.9 L867.2,971.7 L865.9,974.6Z" fill="#75cff0" /><path d="M944.0,1042.8 L943.7,1044.2 L941.4,1043.3 L939.4,1042.8 L939.0,1041.4 L941.5,1041.3 L943.4,1041.7Z" fill="#75cff0" /><path d="M912.3,1008.1 L912.3,1007.5 L912.9,1006.7 L913.8,1006.6 L914.4,1006.9 L913.8,1007.9 L912.7,1008.8Z" fill="#75cff0" /><path d="M936.3,1029.0 L934.4,1029.4 L931.8,1027.4 L931.6,1025.2 L932.0,1023.3 L934.5,1025.1 L936.9,1027.1Z" fill="#75cff0" /><path d="M914.7,912.7 L913.9,910.9 L916.4,908.2 L919.3,907.5 L920.4,909.0 L919.2,911.6 L916.8,912.2Z" fill="#75cff0" /><path d="M909.7,902.4 L908.4,903.2 L906.6,901.7 L905.2,900.4 L906.2,899.8 L907.7,899.2 L909.2,900.9Z" fill="#75cff0" /><path d="M859.8,1007.3 L859.2,1006.2 L859.1,1004.8 L859.5,1003.0 L860.4,1003.8 L861.1,1004.8 L860.9,1006.7Z" fill="#75cff0" /><path d="M932.3,926.2 L932.1,927.4 L929.9,926.7 L929.6,925.5 L928.7,924.1 L930.8,924.6 L932.4,925.2Z" fill="#75cff0" /><path d="M931.9,938.0 L930.8,938.3 L930.1,936.5 L929.1,934.8 L930.3,934.6 L931.4,935.5 L931.7,936.7Z" fill="#75cff0" /><path d="M924.7,915.5 L922.5,915.4 L920.7,913.2 L920.2,911.4 L920.8,910.0 L922.9,911.1 L924.2,913.2Z" fill="#75cff0" /><path d="M534.5,516.3 L553.4,495.9 L568.0,478.5 L581.0,469.8 L601.4,458.1 L616.0,452.3 L624.3,435.6 L632.8,425.0 L643.4,422.8 L652.0,410.0 L662.6,401.5 L675.4,405.8 L690.3,410.0 L704.6,410.2 L722.2,412.2 L730.7,429.2 L741.4,450.5 L777.5,454.8 L773.3,463.3 L775.4,478.2 L784.0,484.6 L781.8,501.6 L790.3,505.9 L788.2,522.9 L781.8,529.3 L769.0,522.9 L767.0,519.2 L735.1,517.7 L713.3,527.9 L691.5,522.1 L679.9,507.6 L659.6,510.5 L653.7,513.4 L653.7,495.9 L665.4,485.8 L678.5,481.4 L666.8,478.5 L650.8,487.2 L636.3,495.9 L621.8,498.9 L604.3,513.4 L588.3,522.1 L576.7,519.2 L569.4,522.1 L572.3,510.5 L563.6,503.2 L549.1,510.5Z" fill="#75cff0" /><path d="M629.0,457.0 L640.0,449.0 L650.0,444.0 L648.0,448.0 L637.0,455.0 L630.0,459.0Z" fill="#e8e9d1" /><path d="M740.0,462.5 L746.0,461.5 L750.0,463.5 L745.0,465.0 L740.0,464.5Z" fill="#e8e9d1" /><path d="M634.0,345.0 L640.0,336.0 L652.0,333.0 L662.0,336.0 L668.0,350.0 L670.0,368.0 L664.0,380.0 L655.0,384.0 L644.0,376.0 L636.0,365.0 L632.0,352.0Z" fill="#75cff0" /><path d="M691.3,757.2 L682.9,741.5 L675.7,722.3 L673.2,688.6 L676.9,654.8 L682.9,635.6 L686.0,626.0 L669.7,620.3 L678.0,605.0 L687.8,593.9 L696.1,571.7 L704.4,556.4 L712.8,562.0 L718.3,556.4 L726.7,553.6 L737.8,550.8 L754.4,546.7 L765.6,548.0 L779.4,555.0 L782.2,549.4 L798.9,556.4 L812.8,550.8 L821.1,546.7 L822.0,575.0 L805.8,571.7 L792.0,569.0 L780.8,562.0 L775.3,563.3 L768.3,571.7 L768.3,578.6 L760.0,585.6 L751.7,589.7 L748.9,609.2 L737.8,607.8 L732.2,613.3 L725.3,627.2 L721.1,648.0 L721.1,662.0 L726.7,680.0 L729.8,700.6 L727.0,725.0 L720.2,748.8 L706.0,757.0Z" fill="#75cff0" /><path d="M683.0,628.0 L689.0,614.0 L697.0,599.0 L705.8,582.8 L709.0,585.0 L703.0,601.0 L695.0,616.0 L689.0,630.0Z" fill="#e8e9d1" /><path d="M800.0,548.0 L805.0,535.0 L825.0,538.3 L850.0,541.7 L875.0,546.7 L900.0,551.7 L916.7,550.0 L933.3,536.7 L953.3,533.3 L956.0,533.0 L956.0,545.0 L920.0,553.3 L926.7,570.0 L938.3,583.3 L946.7,598.3 L953.3,610.0 L941.7,615.0 L938.3,623.3 L923.3,620.0 L913.3,613.3 L910.0,618.3 L906.7,603.3 L896.7,590.0 L885.0,588.3 L895.0,600.0 L900.0,613.3 L893.3,626.7 L883.3,641.7 L881.7,663.3 L878.3,680.0 L866.7,691.7 L858.3,691.7 L853.3,666.7 L845.0,646.7 L838.3,646.7 L825.0,658.3 L816.7,666.7 L808.3,658.3 L810.0,646.7 L821.7,635.0 L826.7,620.0 L825.0,598.3 L820.0,585.0 L805.8,571.7 L798.0,560.0Z" fill="#75cff0" /><path d="M872.0,545.0 L890.0,538.0 L910.0,535.0 L930.0,532.0 L956.0,530.0 L956.0,556.0 L920.0,556.0 L885.0,553.0Z" fill="#75cff0" /><path d="M833.0,555.5 L845.0,555.0 L858.0,556.5 L870.0,556.0 L886.7,558.3 L884.0,563.0 L886.0,567.0 L882.0,573.3 L876.0,569.0 L870.0,571.0 L864.0,565.0 L858.3,564.3 L850.0,562.0 L845.0,563.0 L838.0,560.0 L833.3,559.0Z" fill="#e8e9d1" /><path d="M826.7,745.0 L844.7,734.2 L860.0,727.0 L877.3,719.7 L895.0,714.0 L913.4,708.9 L935.0,704.0 L956.0,699.0 L956.0,728.0 L935.0,732.0 L913.4,737.8 L895.0,745.0 L877.3,752.2 L862.0,760.0 L848.4,764.9 L838.0,763.0 L830.3,759.5 L824.9,750.4Z" fill="#75cff0" /><ellipse cx="852" cy="717" rx="7" ry="6.5" fill="#75cff0"/><path d="M307.5,309.0 L325.8,309.0 L330.4,321.8 L331.9,334.0 L325.8,340.1 L315.1,337.1 L310.6,327.9 L309.0,318.7Z" fill="#75cff0" /><path d="M364.8,309.0 L379.3,309.0 L377.8,323.3 L371.7,331.7 L367.1,329.4 L365.5,320.3Z" fill="#75cff0" /><path d="M422.1,390.5 L427.4,382.9 L437.3,382.9 L441.9,390.5 L445.0,378.3 L455.7,370.7 L467.9,376.8 L471.0,390.5 L463.3,399.7 L445.0,402.8 L438.9,407.4 L431.2,402.8 L422.1,405.8Z" fill="#75cff0" /><path d="M480.0,410.0 L487.0,406.0 L496.0,408.0 L502.0,412.0 L494.0,414.0 L485.0,415.0Z" fill="#75cff0" /><path d="M446.0,378.0 L452.0,372.0 L458.0,374.0 L455.0,382.0 L449.0,384.0Z" fill="#75cff0" /><path d="M423.6,448.6 L432.8,442.5 L448.0,442.5 L442.0,450.1 L438.9,457.8 L425.1,456.2Z" fill="#75cff0" /><path d="M478.0,545.0 L484.0,541.0 L489.0,545.0 L486.0,551.0 L480.0,551.0Z" fill="#75cff0" /><path d="M141.2,450.6 L157.5,443.4 L169.7,446.5 L175.9,452.6 L171.8,460.7 L182.0,464.8 L184.0,454.6 L186.0,464.8 L198.3,476.0 L214.6,472.0 L225.8,467.9" fill="none" stroke="#75cff0" stroke-width="2.6" stroke-linejoin="round" stroke-linecap="round" /><path d="M19.0,468.9 L31.2,464.8 L43.4,452.6 L57.7,449.5" fill="none" stroke="#75cff0" stroke-width="2.2" stroke-linejoin="round" stroke-linecap="round" /><path d="M43.4,452.6 L49.6,473.0" fill="none" stroke="#75cff0" stroke-width="1.6" stroke-linejoin="round" stroke-linecap="round" /><path d="M96.4,443.4 L127.0,452.6" fill="none" stroke="#75cff0" stroke-width="1.2" stroke-linejoin="round" stroke-linecap="round" /><path d="M225.8,467.9 L229.0,490.4 L236.0,505.0 L243.2,519.0 L240.0,530.0 L245.0,547.5 L242.0,560.0 L248.0,576.0 L244.0,590.0 L247.0,600.0 L243.2,611.7 L232.0,606.0 L238.0,616.0 L252.0,624.0 L258.0,636.0 L268.0,642.0 L276.0,652.0 L286.0,658.1 L292.0,670.0 L300.3,672.3 L306.0,684.0 L311.0,690.2" fill="none" stroke="#75cff0" stroke-width="2.2" stroke-linejoin="round" stroke-linecap="round" /><path d="M311.0,690.2 L332.8,698.0 L376.1,690.8 L387.0,708.9 L394.2,752.2 L405.0,802.8 L419.5,828.8 L434.0,838.9 L430.3,849.7 L444.8,867.8" fill="none" stroke="#75cff0" stroke-width="1.0" stroke-linejoin="round" stroke-linecap="round" /><path d="M470.0,560.0 L497.0,602.0 L520.0,625.0 L544.2,647.4 L563.0,680.0 L584.7,716.0 L595.6,741.4 L582.9,764.9 L566.7,766.7 L552.2,802.8 L552.2,824.5 L573.9,849.7 L595.6,882.2 L588.3,903.9 L617.2,925.6 L631.7,954.5 L653.4,954.5 L667.8,979.7 L650.0,1010.0 L631.7,1037.5 L600.0,1050.0 L584.7,1064.0" fill="none" stroke="#75cff0" stroke-width="1.0" stroke-linejoin="round" stroke-linecap="round" opacity="0.8"/><path d="M371.6,480.0 L378.0,520.0 L375.0,554.6 L372.0,568.9" fill="none" stroke="#75cff0" stroke-width="1.0" stroke-linejoin="round" stroke-linecap="round" /><path d="M663.0,952.0 L666.0,960.0 L662.0,968.0 L667.0,976.0 L664.0,986.0 L669.0,996.0 L666.0,1006.0" fill="none" stroke="#75cff0" stroke-width="1.8" stroke-linejoin="round" stroke-linecap="round" /><path d="M672.0,956.0 L676.0,966.0 L673.0,976.0 L678.0,986.0 L676.0,996.0" fill="none" stroke="#75cff0" stroke-width="1.5" stroke-linejoin="round" stroke-linecap="round" /><path d="M720.0,985.0 L728.0,992.0 L736.0,990.0 L744.0,997.0 L752.0,994.0 L760.0,1000.0" fill="none" stroke="#75cff0" stroke-width="1.4" stroke-linejoin="round" stroke-linecap="round" /><path d="M800.0,990.0 L812.0,985.0 L822.0,992.0 L835.0,986.0 L848.0,992.0" fill="none" stroke="#75cff0" stroke-width="1.3" stroke-linejoin="round" stroke-linecap="round" /><path d="M212.0,310.0 L216.6,399.6" fill="none" stroke="#a9a8b8" stroke-width="1.1" stroke-linejoin="round" stroke-linecap="round" /><path d="M427.4,310.0 L427.4,380.6" fill="none" stroke="#a9a8b8" stroke-width="1.1" stroke-linejoin="round" stroke-linecap="round" /><path d="M125.4,399.6 L125.4,784.7" fill="none" stroke="#a9a8b8" stroke-width="1.1" stroke-linejoin="round" stroke-linecap="round" /><path d="M19.0,599.2 L125.4,599.2" fill="none" stroke="#a9a8b8" stroke-width="1.1" stroke-linejoin="round" stroke-linecap="round" /><path d="M125.4,553.6 L378.8,553.6" fill="none" stroke="#a9a8b8" stroke-width="1.1" stroke-linejoin="round" stroke-linecap="round" /><path d="M357.4,399.6 L361.0,416.5 L359.4,442.5 L368.6,470.0 L371.6,480.0 L378.0,520.0 L378.8,554.6 L369.8,568.9 L382.3,590.3 L382.3,670.5 L562.0,670.5" fill="none" stroke="#a9a8b8" stroke-width="1.1" stroke-linejoin="round" stroke-linecap="round" /><path d="M526.4,513.0 L524.6,551.0 L505.0,568.9 L506.7,608.1 L526.4,626.0 L544.2,647.4 L551.3,654.5 L562.0,670.5 L584.7,716.0 L595.6,741.4 L582.9,764.9 L566.7,766.7 L552.2,802.8 L552.2,824.5 L573.9,849.7 L595.6,882.2 L588.3,903.9 L617.2,925.6 L631.7,954.5 L653.4,954.5 L667.8,979.7 L650.0,1010.0 L631.7,1037.5 L600.0,1050.0 L584.7,1064.0" fill="none" stroke="#a9a8b8" stroke-width="1.1" stroke-linejoin="round" stroke-linecap="round" /><path d="M587.0,522.5 L594.1,533.2 L636.9,551.1 L665.4,554.6 L674.4,565.3 L676.1,583.2 L686.8,593.9 L689.2,595.3 L700.3,577.9 L711.4,577.9 L729.4,588.3 L715.6,605.0 L708.6,627.2 L701.7,655.0 L698.9,680.0 L703.3,717.4 L696.1,751.2" fill="none" stroke="#a9a8b8" stroke-width="1.1" stroke-linejoin="round" stroke-linecap="round" /><path d="M584.7,716.0 L700.0,716.0" fill="none" stroke="#a9a8b8" stroke-width="1.1" stroke-linejoin="round" stroke-linecap="round" /><path d="M405.0,802.8 L552.2,802.8" fill="none" stroke="#a9a8b8" stroke-width="1.1" stroke-linejoin="round" stroke-linecap="round" /><path d="M125.4,693.7 L314.7,693.7 L332.8,698.0 L376.1,690.8 L383.4,680.0" fill="none" stroke="#a9a8b8" stroke-width="1.1" stroke-linejoin="round" stroke-linecap="round" /><path d="M383.4,680.0 L394.2,752.2 L405.0,802.8 L408.6,813.6 L419.5,828.8 L434.0,838.9 L430.3,849.7 L444.8,867.8 L444.8,979.7 L452.0,1064.0" fill="none" stroke="#a9a8b8" stroke-width="1.1" stroke-linejoin="round" stroke-linecap="round" /><path d="M19.0,784.7 L193.8,784.7 L193.8,959.9" fill="none" stroke="#a9a8b8" stroke-width="1.1" stroke-linejoin="round" stroke-linecap="round" /><path d="M193.8,828.8 L419.5,828.8" fill="none" stroke="#a9a8b8" stroke-width="1.1" stroke-linejoin="round" stroke-linecap="round" /><path d="M19.0,959.9 L444.8,959.9" fill="none" stroke="#a9a8b8" stroke-width="1.1" stroke-linejoin="round" stroke-linecap="round" /><path d="M161.3,959.9 L161.3,1064.0" fill="none" stroke="#a9a8b8" stroke-width="1.1" stroke-linejoin="round" stroke-linecap="round" /><path d="M161.3,980.5 L262.4,980.5 L262.4,1064.0" fill="none" stroke="#a9a8b8" stroke-width="1.1" stroke-linejoin="round" stroke-linecap="round" /><path d="M444.8,979.7 L597.0,979.7 L591.0,1000.0 L626.0,1000.0" fill="none" stroke="#a9a8b8" stroke-width="1.1" stroke-linejoin="round" stroke-linecap="round" /><path d="M685.8,752.2 L819.5,752.2" fill="none" stroke="#a9a8b8" stroke-width="1.1" stroke-linejoin="round" stroke-linecap="round" /><path d="M685.8,752.2 L685.8,867.8 L682.2,882.2 L667.8,918.3 L664.2,929.2" fill="none" stroke="#a9a8b8" stroke-width="1.1" stroke-linejoin="round" stroke-linecap="round" /><path d="M777.9,752.2 L777.9,867.8" fill="none" stroke="#a9a8b8" stroke-width="1.1" stroke-linejoin="round" stroke-linecap="round" /><path d="M924.2,727.0 L924.2,842.5" fill="none" stroke="#a9a8b8" stroke-width="1.1" stroke-linejoin="round" stroke-linecap="round" /><path d="M664.2,929.2 L696.7,914.7 L732.8,918.3 L761.7,885.9 L787.0,867.8 L805.0,882.2 L841.1,889.5 L855.6,900.3 L877.3,875.0 L906.1,817.2 L920.6,802.8 L924.2,800.0" fill="none" stroke="#a9a8b8" stroke-width="1.1" stroke-linejoin="round" stroke-linecap="round" /><path d="M664.2,976.1 L955.0,976.1" fill="none" stroke="#a9a8b8" stroke-width="1.1" stroke-linejoin="round" stroke-linecap="round" /><path d="M855.6,900.3 L873.6,932.8 L888.0,943.6 L931.4,936.4 L949.5,914.7" fill="none" stroke="#a9a8b8" stroke-width="1.1" stroke-linejoin="round" stroke-linecap="round" /><path d="M584.0,1043.0 L955.0,1043.0" fill="none" stroke="#a9a8b8" stroke-width="1.1" stroke-linejoin="round" stroke-linecap="round" /><path d="M955.0,840.0 L935.0,850.0 L925.0,870.0" fill="none" stroke="#a9a8b8" stroke-width="1.1" stroke-linejoin="round" stroke-linecap="round" /><path d="M19.0,399.6 L427.4,399.6 L427.4,380.6 L437.3,383.0 L442.0,410.4 L449.6,415.0 L457.0,415.0 L472.5,424.0 L484.7,422.6 L493.9,418.8 L510.7,424.2 L521.4,439.4 L524.4,433.3 L532.0,434.0 L545.0,445.0 L549.0,448.0 L559.3,446.5 L572.3,439.2 L576.7,446.5 L597.0,445.8 L605.8,451.6 L624.7,452.3 L646.5,439.2 L657.4,435.6 L775.8,507.6 L780.2,520.7 L787.5,527.9 L800.0,525.0 L806.7,546.7 L820.0,545.0 L825.0,551.7 L819.2,559.2 L856.7,583.3 L870.0,665.0 L858.3,700.0 L855.0,712.6 L838.2,729.5 L835.8,741.5 L850.2,753.6 L859.9,753.6 L900.8,729.5 L956.0,708.0" fill="none" stroke="#8d8b9c" stroke-width="1.4" stroke-linejoin="round" stroke-linecap="round" /><path d="M160.0,528.0 L171.9,538.6 L200.4,542.2 L214.7,549.3 L257.5,554.6 L257.5,565.3 L271.8,601.0 L271.8,613.5 L286.0,618.8 L311.0,672.3 L318.1,668.8 L320.2,680.0 L322.0,690.8 L332.8,698.0 L365.3,703.5 L376.1,712.5 L403.2,730.6 L403.2,752.2 L397.8,766.7 L401.4,773.2 L446.0,773.2 L450.5,772.2 L453.0,769.5 L455.0,766.6 L459.0,766.0 L495.0,766.0 L582.9,764.9 L584.7,788.3 L606.4,808.2 L624.5,831.7 L628.1,857.0 L635.3,875.0 L640.7,907.5 L655.2,940.0 L655.2,950.9 L682.2,950.9 L705.7,963.5 L714.7,957.4 L754.5,957.4 L768.9,950.9 L805.0,950.9 L817.0,950.0" fill="none" stroke="#9ca3af" stroke-width="5.6" stroke-linejoin="round" stroke-linecap="round" /><path d="M160.0,528.0 L171.9,538.6 L200.4,542.2 L214.7,549.3 L257.5,554.6 L257.5,565.3 L271.8,601.0 L271.8,613.5 L286.0,618.8 L311.0,672.3 L318.1,668.8 L320.2,680.0 L322.0,690.8 L332.8,698.0 L365.3,703.5 L376.1,712.5 L403.2,730.6 L403.2,752.2 L397.8,766.7 L401.4,773.2 L446.0,773.2 L450.5,772.2 L453.0,769.5 L455.0,766.6 L459.0,766.0 L495.0,766.0 L582.9,764.9 L584.7,788.3 L606.4,808.2 L624.5,831.7 L628.1,857.0 L635.3,875.0 L640.7,907.5 L655.2,940.0 L655.2,950.9 L682.2,950.9 L705.7,963.5 L714.7,957.4 L754.5,957.4 L768.9,950.9 L805.0,950.9 L817.0,950.0" fill="none" stroke="#6b7280" stroke-width="5.0" stroke-linejoin="round" stroke-linecap="round" stroke-dasharray="1.4 9.4"/><text x="81.7" y="316.1" font-size="15" fill="#333" stroke="#fff" stroke-width="2.4" stroke-linejoin="round" paint-order="stroke" textLength="49" lengthAdjust="spacingAndGlyphs">Regina</text><circle cx="105.6" cy="324.3" r="3.2" fill="#fff"/><circle cx="105.6" cy="324.3" r="2.5" fill="#000"/><text x="135.5" y="385.8" font-size="15" fill="#333" stroke="#fff" stroke-width="2.4" stroke-linejoin="round" paint-order="stroke" textLength="52" lengthAdjust="spacingAndGlyphs">Estevan</text><circle cx="161" cy="393.1" r="3.2" fill="#fff"/><circle cx="161" cy="393.1" r="2.5" fill="#000"/><text x="326" y="345.5" font-size="15" fill="#333" stroke="#fff" stroke-width="2.4" stroke-linejoin="round" paint-order="stroke" textLength="67" lengthAdjust="spacingAndGlyphs">Winnipeg</text><circle cx="359" cy="353" r="3.2" fill="#fff"/><circle cx="359" cy="353" r="2.5" fill="#000"/><text x="306.2" y="383.5" font-size="15" fill="#333" stroke="#fff" stroke-width="2.4" stroke-linejoin="round" paint-order="stroke" textLength="55" lengthAdjust="spacingAndGlyphs">Winkler</text><circle cx="333" cy="390" r="3.2" fill="#fff"/><circle cx="333" cy="390" r="2.5" fill="#000"/><text x="482" y="352.5" font-size="15" fill="#333" stroke="#fff" stroke-width="2.4" stroke-linejoin="round" paint-order="stroke" textLength="49" lengthAdjust="spacingAndGlyphs">Dryden</text><circle cx="506" cy="359" r="3.2" fill="#fff"/><circle cx="506" cy="359" r="2.5" fill="#000"/><text x="352.5" y="500.5" font-size="15" fill="#333" stroke="#fff" stroke-width="2.4" stroke-linejoin="round" paint-order="stroke" textLength="39" lengthAdjust="spacingAndGlyphs">Fargo</text><circle cx="371" cy="508" r="3.2" fill="#fff"/><circle cx="371" cy="508" r="2.5" fill="#000"/><text x="507" y="505.5" font-size="15" fill="#333" stroke="#fff" stroke-width="2.4" stroke-linejoin="round" paint-order="stroke" textLength="46" lengthAdjust="spacingAndGlyphs">Duluth</text><circle cx="530" cy="513" r="3.2" fill="#fff"/><circle cx="530" cy="513" r="2.5" fill="#000"/><text x="460" y="593.5" font-size="15" fill="#333" stroke="#fff" stroke-width="2.4" stroke-linejoin="round" paint-order="stroke" textLength="72" lengthAdjust="spacingAndGlyphs">Saint Paul</text><circle cx="497" cy="602" r="3.2" fill="#fff"/><circle cx="497" cy="602" r="2.5" fill="#000"/><text x="484" y="638.5" font-size="15" fill="#333" stroke="#fff" stroke-width="2.4" stroke-linejoin="round" paint-order="stroke" textLength="69" lengthAdjust="spacingAndGlyphs">Rochester</text><circle cx="518" cy="646" r="3.2" fill="#fff"/><circle cx="518" cy="646" r="2.5" fill="#000"/><text x="119" y="635.5" font-size="15" fill="#333" stroke="#fff" stroke-width="2.4" stroke-linejoin="round" paint-order="stroke" textLength="70" lengthAdjust="spacingAndGlyphs">Rapid City</text><circle cx="152" cy="642" r="3.2" fill="#fff"/><circle cx="152" cy="642" r="2.5" fill="#000"/><text x="334" y="660.5" font-size="15" fill="#333" stroke="#fff" stroke-width="2.4" stroke-linejoin="round" paint-order="stroke" textLength="79" lengthAdjust="spacingAndGlyphs">Sioux Falls</text><circle cx="373" cy="668" r="3.2" fill="#fff"/><circle cx="373" cy="668" r="2.5" fill="#000"/><text x="593" y="682.5" font-size="15" fill="#333" stroke="#fff" stroke-width="2.4" stroke-linejoin="round" paint-order="stroke" textLength="61" lengthAdjust="spacingAndGlyphs">Madison</text><circle cx="622" cy="690" r="3.2" fill="#fff"/><circle cx="622" cy="690" r="2.5" fill="#000"/><text x="873" y="686.5" font-size="15" fill="#333" stroke="#fff" stroke-width="2.4" stroke-linejoin="round" paint-order="stroke" textLength="54" lengthAdjust="spacingAndGlyphs">London</text><circle cx="899" cy="694" r="3.2" fill="#fff"/><circle cx="899" cy="694" r="2.5" fill="#000"/><text x="781" y="719.5" font-size="15" fill="#333" stroke="#fff" stroke-width="2.4" stroke-linejoin="round" paint-order="stroke" textLength="54" lengthAdjust="spacingAndGlyphs">Detroit</text><circle cx="838" cy="724" r="3.2" fill="#fff"/><circle cx="838" cy="724" r="2.5" fill="#000"/><text x="66" y="771.5" font-size="15" fill="#333" stroke="#fff" stroke-width="2.4" stroke-linejoin="round" paint-order="stroke" textLength="67" lengthAdjust="spacingAndGlyphs">Cheyenne</text><circle cx="99" cy="778" r="3.2" fill="#fff"/><circle cx="99" cy="778" r="2.5" fill="#000"/><text x="375" y="765.5" font-size="15" fill="#333" stroke="#fff" stroke-width="2.4" stroke-linejoin="round" paint-order="stroke" textLength="51" lengthAdjust="spacingAndGlyphs">Omaha</text><circle cx="400" cy="773" r="3.2" fill="#fff"/><circle cx="400" cy="773" r="2.5" fill="#000"/><text x="548" y="753.5" font-size="15" fill="#333" stroke="#fff" stroke-width="2.4" stroke-linejoin="round" paint-order="stroke" textLength="71" lengthAdjust="spacingAndGlyphs">Davenport</text><circle cx="583" cy="762" r="3.2" fill="#fff"/><circle cx="583" cy="762" r="2.5" fill="#000"/><text x="769" y="772" font-size="15" fill="#333" stroke="#fff" stroke-width="2.4" stroke-linejoin="round" paint-order="stroke" textLength="50" lengthAdjust="spacingAndGlyphs">Toledo</text><circle cx="821" cy="756" r="3.2" fill="#fff"/><circle cx="821" cy="756" r="2.5" fill="#000"/><text x="889" y="757.5" font-size="15" fill="#333" stroke="#fff" stroke-width="2.4" stroke-linejoin="round" paint-order="stroke" textLength="68" lengthAdjust="spacingAndGlyphs">Cleveland</text><circle cx="883" cy="762" r="3.2" fill="#fff"/><circle cx="883" cy="762" r="2.5" fill="#000"/><text x="65" y="832.5" font-size="15" fill="#333" stroke="#fff" stroke-width="2.4" stroke-linejoin="round" paint-order="stroke" textLength="56" lengthAdjust="spacingAndGlyphs">Denver</text><circle cx="93" cy="841" r="3.2" fill="#fff"/><circle cx="93" cy="841" r="2.5" fill="#000"/><text x="753" y="861.5" font-size="15" fill="#333" stroke="#fff" stroke-width="2.4" stroke-linejoin="round" paint-order="stroke" textLength="71" lengthAdjust="spacingAndGlyphs">Cincinnati</text><circle cx="788" cy="869" r="3.2" fill="#fff"/><circle cx="788" cy="869" r="2.5" fill="#000"/><text x="452" y="885.5" font-size="15" fill="#333" stroke="#fff" stroke-width="2.4" stroke-linejoin="round" paint-order="stroke" textLength="82" lengthAdjust="spacingAndGlyphs">Kansas City</text><circle cx="447" cy="868" r="3.2" fill="#fff"/><circle cx="447" cy="868" r="2.5" fill="#000"/><text x="565" y="881.5" font-size="15" fill="#333" stroke="#fff" stroke-width="2.4" stroke-linejoin="round" paint-order="stroke" textLength="62" lengthAdjust="spacingAndGlyphs">St. Louis</text><circle cx="595" cy="889" r="3.2" fill="#fff"/><circle cx="595" cy="889" r="2.5" fill="#000"/><text x="30" y="1007.5" font-size="15" fill="#333" stroke="#fff" stroke-width="2.4" stroke-linejoin="round" paint-order="stroke" textLength="63" lengthAdjust="spacingAndGlyphs">Santa Fe</text><circle cx="60" cy="1015" r="3.2" fill="#fff"/><circle cx="60" cy="1015" r="2.5" fill="#000"/><text x="379" y="987.5" font-size="15" fill="#333" stroke="#fff" stroke-width="2.4" stroke-linejoin="round" paint-order="stroke" textLength="40" lengthAdjust="spacingAndGlyphs">Tulsa</text><circle cx="398" cy="995" r="3.2" fill="#fff"/><circle cx="398" cy="995" r="2.5" fill="#000"/><text x="171" y="1028.5" font-size="15" fill="#333" stroke="#fff" stroke-width="2.4" stroke-linejoin="round" paint-order="stroke" textLength="60" lengthAdjust="spacingAndGlyphs">Amarillo</text><circle cx="200" cy="1035" r="3.2" fill="#fff"/><circle cx="200" cy="1035" r="2.5" fill="#000"/><text x="605" y="1033.5" font-size="15" fill="#333" stroke="#fff" stroke-width="2.4" stroke-linejoin="round" paint-order="stroke" textLength="66" lengthAdjust="spacingAndGlyphs">Memphis</text><circle cx="600" cy="1037" r="3.2" fill="#fff"/><circle cx="600" cy="1037" r="2.5" fill="#000"/><text x="761" y="381.5" font-size="14" font-weight="700" fill="#111" stroke="#fff" stroke-width="2" stroke-linejoin="round" paint-order="stroke" textLength="74" lengthAdjust="spacingAndGlyphs">ONTARIO</text><text x="231" y="484.8" font-size="14" font-weight="700" fill="#111" stroke="#fff" stroke-width="2" stroke-linejoin="round" paint-order="stroke" textLength="34" lengthAdjust="spacingAndGlyphs">N.D.</text><text x="435" y="539" font-size="14" font-weight="700" fill="#111" stroke="#fff" stroke-width="2" stroke-linejoin="round" paint-order="stroke" textLength="50" lengthAdjust="spacingAndGlyphs">MINN.</text><text x="592" y="617" font-size="14" font-weight="700" fill="#111" stroke="#fff" stroke-width="2" stroke-linejoin="round" paint-order="stroke" textLength="39" lengthAdjust="spacingAndGlyphs">WIS.</text><text x="765" y="607" font-size="14" font-weight="700" fill="#111" stroke="#fff" stroke-width="2" stroke-linejoin="round" paint-order="stroke" textLength="47" lengthAdjust="spacingAndGlyphs">MICH.</text><text x="240" y="610" font-size="14" font-weight="700" fill="#111" stroke="#fff" stroke-width="2" stroke-linejoin="round" paint-order="stroke" textLength="31" lengthAdjust="spacingAndGlyphs">S.D</text><text x="239" y="751" font-size="14" font-weight="700" fill="#111" stroke="#fff" stroke-width="2" stroke-linejoin="round" paint-order="stroke" textLength="50" lengthAdjust="spacingAndGlyphs">NEBR.</text><text x="463" y="741" font-size="14" font-weight="700" fill="#111" stroke="#fff" stroke-width="2" stroke-linejoin="round" paint-order="stroke" textLength="42" lengthAdjust="spacingAndGlyphs">IOWA</text><text x="610" y="828" font-size="14" font-weight="700" fill="#111" stroke="#fff" stroke-width="2" stroke-linejoin="round" paint-order="stroke" textLength="33" lengthAdjust="spacingAndGlyphs">ILL.</text><text x="710" y="838" font-size="14" font-weight="700" fill="#111" stroke="#fff" stroke-width="2" stroke-linejoin="round" paint-order="stroke" textLength="38" lengthAdjust="spacingAndGlyphs">IND.</text><text x="830" y="816" font-size="14" font-weight="700" fill="#111" stroke="#fff" stroke-width="2" stroke-linejoin="round" paint-order="stroke" textLength="41" lengthAdjust="spacingAndGlyphs">OHIO</text><text x="48" y="870" font-size="14" font-weight="700" fill="#111" stroke="#fff" stroke-width="2" stroke-linejoin="round" paint-order="stroke" textLength="48" lengthAdjust="spacingAndGlyphs">COLO.</text><text x="282" y="899" font-size="14" font-weight="700" fill="#111" stroke="#fff" stroke-width="2" stroke-linejoin="round" paint-order="stroke" textLength="49" lengthAdjust="spacingAndGlyphs">KANS.</text><text x="499" y="914" font-size="14" font-weight="700" fill="#111" stroke="#fff" stroke-width="2" stroke-linejoin="round" paint-order="stroke" textLength="31" lengthAdjust="spacingAndGlyphs">MO.</text><text x="895" y="890" font-size="14" font-weight="700" fill="#111" stroke="#fff" stroke-width="2" stroke-linejoin="round" paint-order="stroke" textLength="46" lengthAdjust="spacingAndGlyphs">W.VA.</text><text x="749" y="942" font-size="14" font-weight="700" fill="#111" stroke="#fff" stroke-width="2" stroke-linejoin="round" paint-order="stroke" textLength="27" lengthAdjust="spacingAndGlyphs">KY.</text><text x="322" y="1011" font-size="14" font-weight="700" fill="#111" stroke="#fff" stroke-width="2" stroke-linejoin="round" paint-order="stroke" textLength="49" lengthAdjust="spacingAndGlyphs">OKLA.</text><text x="714" y="1007" font-size="14" font-weight="700" fill="#111" stroke="#fff" stroke-width="2" stroke-linejoin="round" paint-order="stroke" textLength="50" lengthAdjust="spacingAndGlyphs">TENN.</text><text x="500" y="1044" font-size="14" font-weight="700" fill="#111" stroke="#fff" stroke-width="2" stroke-linejoin="round" paint-order="stroke" textLength="40" lengthAdjust="spacingAndGlyphs">ARK.</text><text x="945" y="1025" font-size="14" font-weight="700" fill="#111" stroke="#fff" stroke-width="2" stroke-linejoin="round" paint-order="stroke" textLength="11" lengthAdjust="spacingAndGlyphs">N</text><text x="259" y="859" font-size="25" fill="#111" stroke="#fff" stroke-width="3" stroke-linejoin="round" textLength="149" lengthAdjust="spacingAndGlyphs">United States</text><text x="259" y="859" font-size="25" fill="#111" stroke="#111" stroke-width="0.7" textLength="149" lengthAdjust="spacingAndGlyphs">United States</text><circle cx="159.8" cy="527.6" r="13.7" fill="#fff"/><circle cx="159.8" cy="527.6" r="12.2" fill="#000"/><text x="159.8" y="532.6" font-size="14" font-weight="700" fill="#fff" text-anchor="middle">2</text><circle cx="816.5" cy="950" r="13.7" fill="#fff"/><circle cx="816.5" cy="950" r="12.2" fill="#000"/><text x="816.5" y="955" font-size="14" font-weight="700" fill="#fff" text-anchor="middle">1</text></svg>
<div style="position:absolute;left:888px;top:16px;width:32px;height:32px;border-radius:4px;background:#fff;box-shadow:0 0 0 2px rgba(0,0,0,0.06)"></div>
<svg style="position:absolute;left:888px;top:16px" width="32" height="32" viewBox="0 0 32 32"><g fill="none" stroke="#111" stroke-width="1.6"><path d="M9 13 V9 H13 M9 9 L13.5 13.5"/><path d="M19 9 H23 V13 M23 9 L18.5 13.5"/><path d="M9 19 V23 H13 M9 23 L13.5 18.5"/><path d="M23 19 V23 H19 M23 23 L18.5 18.5"/></g></svg>
<div style="position:absolute;left:888px;top:56px;width:32px;height:64px;border-radius:4px;background:#fff;box-shadow:0 0 0 2px rgba(0,0,0,0.06)"></div>
<div style="position:absolute;left:888px;top:88px;width:32px;height:1px;background:#9ea3b8"></div>
<svg style="position:absolute;left:888px;top:56px" width="32" height="64" viewBox="0 0 32 64"><path d="M16 11.7 V19.7 M12 15.7 H20" stroke="#222" stroke-width="2"/><path d="M12.2 47.7 H19.8" stroke="#222" stroke-width="2"/></svg>
<div style="position:absolute;left:660px;top:734px;width:276px;height:20px;background:rgba(255,255,255,0.5)"></div>
<svg style="position:absolute;left:0;top:0" width="936" height="754" viewBox="19 310 936 754" font-family="Liberation Sans, sans-serif"><text x="684" y="1057.7" font-size="12" fill="#111" textLength="165" lengthAdjust="spacingAndGlyphs">© Mapbox ©OpenStreetMap</text><text x="851" y="1057.7" font-size="12" font-weight="700" fill="#111" textLength="99" lengthAdjust="spacingAndGlyphs">Improve this map</text><g><circle cx="36.3" cy="1046.2" r="9.4" fill="#fff" stroke="rgba(0,0,0,0.10)" stroke-width="0.8"/><circle cx="36.3" cy="1046.2" r="6.0" fill="#dfe3c6"/><path d="M36.3 1042.6 L37.3 1045.2 L39.9 1046.2 L37.3 1047.2 L36.3 1049.8 L35.3 1047.2 L32.7 1046.2 L35.3 1045.2Z" fill="#fff"/><text x="49.3" y="1052" font-size="16" font-weight="700" fill="#fff" stroke="rgba(0,0,0,0.12)" stroke-width="0.6" paint-order="stroke" textLength="61" lengthAdjust="spacingAndGlyphs">mapbox</text></g></svg>
  </div>

  <!-- schedule card -->
  <div class="card" style="left:971px;top:186px;width:460px;height:878px"></div>
  <div class="a" style="left:971px;top:250px;width:460px;height:1px;background:#e5e7eb"></div>
  <div class="a" style="left:987px;top:267px;width:428px;height:477px;border-radius:8px;background:#f7f8fa"></div>
  <div class="a" style="left:1090px;top:275px;width:83px;height:20px;border-radius:10px;background:#1f2937"></div>
  <svg class="a" style="left:1388px;top:278px" width="18" height="14" viewBox="0 0 18 14">
    <path d="M3.6 9.6 L8.6 4.8 L13.6 9.6" fill="none" stroke="#6b7280" stroke-width="1.3" stroke-linecap="round" stroke-linejoin="round"/>
  </svg>
  <div class="a" style="left:995.5px;top:311.5px;width:411px;height:77px;border-radius:7px;background:#fff;border:1px solid #e5e7eb"></div>
  <svg class="a" style="left:1003px;top:319px" width="24" height="24" viewBox="0 0 24 24">
    <circle cx="11.8" cy="12" r="9.3" fill="none" stroke="#6b7280" stroke-width="1.4"/>
    <circle cx="11.8" cy="9.6" r="3.1" fill="none" stroke="#6b7280" stroke-width="1.4"/>
    <path d="M5.6 18.8 Q7.6 14.6 11.8 14.6 Q16 14.6 18 18.8" fill="none" stroke="#6b7280" stroke-width="1.4"/>
  </svg>
  <div class="a" style="left:1003px;top:351px;width:396px;height:30px;border-radius:5px;background:#0d6efd"></div>

  <!-- pickup card -->
  <div class="a" style="left:995.5px;top:405.5px;width:411px;height:131px;border-radius:7px;background:#fff;border:1px solid #e5e7eb"></div>
  <div class="a" style="left:1002.7px;top:412.8px;width:20px;height:20px;border-radius:50%;background:#000"></div>
  <div class="a" style="left:1324px;top:413.5px;width:75px;height:19.5px;border-radius:10px;background:#f3f4f6"></div>
  <!-- transit bar -->
  <div class="a" style="left:995.5px;top:553.5px;width:411px;height:35px;border-radius:7px;background:#f1f2f4"></div>
  <svg class="a" style="left:1006px;top:561px" width="14" height="20" viewBox="0 0 14 20">
    <circle cx="6.7" cy="4.2" r="1.5" fill="#6b7280"/><circle cx="6.7" cy="9.9" r="1.5" fill="#6b7280"/><circle cx="6.7" cy="15.6" r="1.5" fill="#6b7280"/>
  </svg>
  <svg class="a" style="left:1340px;top:561px" width="22" height="20" viewBox="0 0 22 20">
    <circle cx="10.8" cy="9.9" r="8" fill="#6b7280"/>
    <path d="M10.8 6 V13.8 M6.9 9.9 H14.7" stroke="#fff" stroke-width="1.8" stroke-linecap="round"/>
  </svg>
  <!-- drop card -->
  <div class="a" style="left:995.5px;top:605.5px;width:411px;height:131px;border-radius:7px;background:#fff;border:1px solid #e5e7eb"></div>
  <div class="a" style="left:1002.7px;top:612.7px;width:20px;height:20px;border-radius:50%;background:#000"></div>
  <div class="a" style="left:1311.3px;top:613px;width:87.5px;height:19.7px;border-radius:10px;background:#f3f4f6"></div>

  <!-- information card -->
  <div class="card" style="left:1447px;top:186px;width:460px;height:878px"></div>
  <div class="a" style="left:1447px;top:250px;width:460px;height:1px;background:#e5e7eb"></div>
  <div class="a" style="left:1447px;top:598px;width:460px;height:1px;background:#e5e7eb"></div>
  <div class="a" style="left:1510.4px;top:367.2px;width:39.4px;height:19.6px;border-radius:10px;background:#f3f4f6"></div>
  <!-- activity icons -->
  <div class="a" style="left:1463px;top:615px;width:32px;height:32px;border-radius:50%;background:#f3f4f6"></div>
  <div class="a" style="left:1463px;top:679px;width:32px;height:32px;border-radius:50%;background:#f3f4f6"></div>
  <div class="a" style="left:1463px;top:743px;width:32px;height:32px;border-radius:50%;background:#f3f4f6"></div>
  <div class="a" style="left:1463px;top:807px;width:32px;height:32px;border-radius:50%;background:#f3f4f6"></div>
  <div class="a" style="left:1478px;top:655.5px;width:2px;height:15px;background:#e5e7eb"></div>
  <div class="a" style="left:1478px;top:719.5px;width:2px;height:15px;background:#e5e7eb"></div>
  <div class="a" style="left:1478px;top:783.5px;width:2px;height:15px;background:#e5e7eb"></div>
  <svg class="a" style="left:1463px;top:615px" width="32" height="224" viewBox="0 0 32 224">
    <g fill="#6b7280">
      <circle cx="16" cy="16" r="8"/>
      <circle cx="16" cy="80" r="8"/>
      <circle cx="16" cy="144" r="8"/>
      <circle cx="16" cy="208" r="8"/>
    </g>
    <path d="M16 12 V20 M12 16 H20" stroke="#fff" stroke-width="1.8" stroke-linecap="round"/>
    <path d="M18.4 76.4 Q17.8 75.4 16 75.4 Q13.6 75.4 13.6 77.2 Q13.6 79 16 79.6 Q18.4 80.2 18.4 82.2 Q18.4 84.4 16 84.4 Q14.2 84.4 13.5 83.2 M16 73.8 V75.4 M16 84.4 V86.2" fill="none" stroke="#fff" stroke-width="1.5" stroke-linecap="round"/>
    <path d="M12.6 144.2 L15 146.6 L19.6 141.8" fill="none" stroke="#fff" stroke-width="1.9" stroke-linecap="round" stroke-linejoin="round"/>
    <path d="M16 203.6 V209" stroke="#fff" stroke-width="2" stroke-linecap="round"/>
    <circle cx="16" cy="212.2" r="1.2" fill="#fff"/>
  </svg>
</div>
<div class="t" style="left:50.30px;top:14.27px;font-size:20px;line-height:20px;letter-spacing:0.234px;font-weight:400;color:#ffffff;">freight</div>
<div class="t" style="left:50.50px;top:31.07px;font-size:20px;line-height:20px;letter-spacing:-0.385px;font-weight:400;color:#ffffff;">science</div>
<div class="t" style="left:153.80px;top:24.40px;font-size:15px;line-height:15px;letter-spacing:-0.124px;font-weight:400;color:#d1d5db;">Dashboard</div>
<div class="t" style="left:267.90px;top:24.40px;font-size:15px;line-height:15px;letter-spacing:0.114px;font-weight:400;color:#d1d5db;">Accounts</div>
<div class="t" style="left:371.80px;top:24.40px;font-size:15px;line-height:15px;letter-spacing:0.164px;font-weight:400;color:#ffffff;">Network</div>
<div class="t" style="left:468.50px;top:24.40px;font-size:15px;line-height:15px;letter-spacing:-0.219px;font-weight:400;color:#d1d5db;">Loads</div>
<div class="t" style="left:1484.40px;top:24.90px;font-size:15px;line-height:15px;letter-spacing:-0.586px;font-weight:400;color:#9ca3af;">Search</div>
<div class="t" style="left:1836.00px;top:25.15px;font-size:14px;line-height:14px;letter-spacing:-0.562px;font-weight:400;color:#ffffff;">OM</div>
<div class="t" style="left:39.80px;top:82.10px;font-size:15px;line-height:15px;letter-spacing:-0.299px;font-weight:400;color:#6b7280;">Planning</div>
<div class="t" style="left:20.00px;top:109.81px;font-size:32px;line-height:32px;letter-spacing:-1.219px;font-weight:700;color:#111827;">1012872980</div>
<div class="t" style="left:43.50px;top:212.30px;font-size:15px;line-height:15px;letter-spacing:-0.051px;font-weight:400;color:#6b7280;">Distance</div>
<div class="t" style="left:43.40px;top:235.91px;font-size:32px;line-height:32px;letter-spacing:-0.673px;font-weight:700;color:#111827;">1,889 mi</div>
<div class="t" style="left:281.60px;top:212.30px;font-size:15px;line-height:15px;letter-spacing:-0.152px;font-weight:400;color:#6b7280;">Equipment</div>
<div class="t" style="left:281.60px;top:235.91px;font-size:32px;line-height:32px;letter-spacing:-0.029px;font-weight:700;color:#111827;">Dry Van</div>
<div class="t" style="left:519.40px;top:212.30px;font-size:15px;line-height:15px;letter-spacing:-0.193px;font-weight:400;color:#6b7280;">On-Time  P/U</div>
<div class="t" style="left:519.40px;top:235.91px;font-size:32px;line-height:32px;letter-spacing:-1.723px;font-weight:700;color:#111827;">83%</div>
<div class="t" style="left:757.30px;top:212.30px;font-size:15px;line-height:15px;letter-spacing:-0.148px;font-weight:400;color:#6b7280;">On-Time Del.</div>
<div class="t" style="left:757.30px;top:235.91px;font-size:32px;line-height:32px;letter-spacing:-1.123px;font-weight:700;color:#111827;">89%</div>
<div class="t" style="left:987.60px;top:208.92px;font-size:19px;line-height:19px;letter-spacing:-0.033px;font-weight:400;color:#111827;">Schedule</div>
<div class="t" style="left:995.60px;top:277.00px;font-size:15px;line-height:15px;letter-spacing:0.262px;font-weight:700;color:#111827;">1012872980</div>
<div class="t" style="left:1100.80px;top:278.70px;font-size:13px;line-height:13px;letter-spacing:-0.161px;font-weight:400;color:#ffffff;">Unplanned</div>
<div class="t" style="left:1032.30px;top:323.80px;font-size:15px;line-height:15px;letter-spacing:-0.224px;font-weight:400;color:#1f2937;">Unassigned</div>
<div class="t" style="left:1169.85px;top:359.05px;font-size:14px;line-height:14px;letter-spacing:-0.617px;font-weight:400;color:#ffffff;">Find Driver</div>
<div class="t" style="left:1031.40px;top:415.20px;font-size:15px;line-height:15px;letter-spacing:-0.006px;font-weight:400;color:#374151;-webkit-text-stroke:0.5px #374151;">Pickup</div>
<div class="t" style="left:1334.00px;top:416.40px;font-size:13px;line-height:13px;letter-spacing:-0.236px;font-weight:400;color:#1f2937;">Live Load</div>
<div class="t" style="left:1031.40px;top:442.71px;font-size:17px;line-height:17px;letter-spacing:-0.007px;font-weight:400;color:#111827;">Peak Tech Solutions</div>
<div class="t" style="left:1031.40px;top:467.70px;font-size:15px;line-height:15px;letter-spacing:-0.179px;font-weight:400;color:#4b5563;">123 Industrial Parkway</div>
<div class="t" style="left:1031.40px;top:489.40px;font-size:15px;line-height:15px;letter-spacing:-0.010px;font-weight:400;color:#4b5563;">South Morton, KY 00000</div>
<div class="t" style="left:1031.40px;top:512.40px;font-size:13px;line-height:13px;letter-spacing:-0.237px;font-weight:400;color:#4b5563;">3/8 07:00 - 11:00 EST</div>
<div class="t" style="left:1031.40px;top:563.30px;font-size:15px;line-height:15px;letter-spacing:-0.163px;font-weight:400;color:#1f2937;">1,889 miles transit</div>
<div class="t" style="left:1369.50px;top:563.30px;font-size:15px;line-height:15px;letter-spacing:-0.172px;font-weight:400;color:#1f2937;">Split</div>
<div class="t" style="left:1031.40px;top:615.00px;font-size:15px;line-height:15px;letter-spacing:0.040px;font-weight:400;color:#374151;-webkit-text-stroke:0.5px #374151;">Drop Off</div>
<div class="t" style="left:1321.60px;top:616.40px;font-size:13px;line-height:13px;letter-spacing:-0.196px;font-weight:400;color:#1f2937;">Live Unload</div>
<div class="t" style="left:1031.40px;top:643.01px;font-size:17px;line-height:17px;letter-spacing:0.137px;font-weight:400;color:#111827;">Vintagel</div>
<div class="t" style="left:1031.40px;top:667.50px;font-size:15px;line-height:15px;letter-spacing:-0.191px;font-weight:400;color:#4b5563;">90211 Innovator Circle</div>
<div class="t" style="left:1031.40px;top:689.30px;font-size:15px;line-height:15px;letter-spacing:-0.038px;font-weight:400;color:#4b5563;">West Destinytown, ND 00000</div>
<div class="t" style="left:1031.40px;top:712.20px;font-size:13px;line-height:13px;letter-spacing:-0.093px;font-weight:400;color:#4b5563;">3/10 00:00 - 23:59 CST</div>
<div class="t" style="left:1463.20px;top:208.62px;font-size:19px;line-height:19px;letter-spacing:0.245px;font-weight:400;color:#111827;">Information</div>
<div class="t" style="left:1463.20px;top:269.95px;font-size:14px;line-height:14px;letter-spacing:0.509px;font-weight:400;color:#6b7280;">Segment</div>
<div class="t" style="left:1463.20px;top:293.85px;font-size:14px;line-height:14px;letter-spacing:0.447px;font-weight:400;color:#111827;">Trucking</div>
<div class="t" style="left:1685.30px;top:269.95px;font-size:14px;line-height:14px;letter-spacing:0.408px;font-weight:400;color:#6b7280;">Source</div>
<div class="t" style="left:1685.30px;top:293.85px;font-size:14px;line-height:14px;letter-spacing:-1.122px;font-weight:400;color:#111827;">EDI</div>
<div class="t" style="left:1463.20px;top:345.95px;font-size:14px;line-height:14px;letter-spacing:0.213px;font-weight:400;color:#6b7280;">Line Haul Rate</div>
<div class="t" style="left:1463.20px;top:369.55px;font-size:14px;line-height:14px;letter-spacing:0.663px;font-weight:400;color:#111827;">$2.04</div>
<div class="t" style="left:1520.60px;top:370.74px;font-size:12px;line-height:12px;letter-spacing:-0.358px;font-weight:700;color:#374151;">EDI</div>
<div class="t" style="left:1685.30px;top:345.95px;font-size:14px;line-height:14px;letter-spacing:0.372px;font-weight:400;color:#6b7280;">Estimated Line Haul</div>
<div class="t" style="left:1685.30px;top:369.55px;font-size:14px;line-height:14px;letter-spacing:-0.050px;font-weight:400;color:#111827;">$2,178.72</div>
<div class="t" style="left:1463.20px;top:421.55px;font-size:14px;line-height:14px;letter-spacing:0.381px;font-weight:400;color:#6b7280;">Award Name</div>
<div class="t" style="left:1463.20px;top:445.85px;font-size:14px;line-height:14px;letter-spacing:0.394px;font-weight:400;color:#1a6ef5;">2023 Asset RFP</div>
<div class="t" style="left:1685.30px;top:421.55px;font-size:14px;line-height:14px;letter-spacing:0.363px;font-weight:400;color:#6b7280;">Carrier Level</div>
<div class="t" style="left:1685.30px;top:445.85px;font-size:14px;line-height:14px;letter-spacing:0.228px;font-weight:400;color:#111827;">Primary</div>
<div class="t" style="left:1463.20px;top:497.95px;font-size:14px;line-height:14px;letter-spacing:0.467px;font-weight:400;color:#6b7280;">Committed Revenue</div>
<div class="t" style="left:1463.20px;top:521.55px;font-size:14px;line-height:14px;letter-spacing:0.269px;font-weight:400;color:#111827;">$13,675.00</div>
<div class="t" style="left:1685.30px;top:497.95px;font-size:14px;line-height:14px;letter-spacing:0.325px;font-weight:400;color:#6b7280;">Recognized Revenue</div>
<div class="t" style="left:1685.30px;top:521.55px;font-size:14px;line-height:14px;letter-spacing:0.125px;font-weight:400;color:#111827;">$9,625.13</div>
<div class="t" style="left:1463.50px;top:557.32px;font-size:19px;line-height:19px;letter-spacing:0.545px;font-weight:400;color:#111827;">Activity</div>
<div class="t" style="left:1507.50px;top:622.70px;font-size:15px;line-height:15px;letter-spacing:0.005px;"><span style="font-weight:400;color:#6b7280;">Tender </span><span style="font-weight:400;color:#111827;-webkit-text-stroke:0.45px #111827">8923441</span><span style="font-weight:400;color:#6b7280;"> for </span><span style="font-weight:400;color:#111827;-webkit-text-stroke:0.45px #111827">Truck Co.</span><span style="font-weight:400;color:#6b7280;"> received</span></div>
<div class="t" style="left:1852.50px;top:622.70px;font-size:15px;line-height:15px;letter-spacing:-0.261px;font-weight:400;color:#6b7280;">Mar 4</div>
<div class="t" style="left:1507.50px;top:686.70px;font-size:15px;line-height:15px;letter-spacing:-0.032px;"><span style="font-weight:400;color:#6b7280;">Order </span><span style="font-weight:400;color:#111827;-webkit-text-stroke:0.45px #111827">7915945</span><span style="font-weight:400;color:#6b7280;"> accepted by </span><span style="font-weight:400;color:#111827;-webkit-text-stroke:0.45px #111827">Amy Harris</span></div>
<div class="t" style="left:1852.50px;top:686.70px;font-size:15px;line-height:15px;letter-spacing:-0.261px;font-weight:400;color:#6b7280;">Mar 4</div>
<div class="t" style="left:1507.50px;top:750.70px;font-size:15px;line-height:15px;letter-spacing:0.003px;"><span style="font-weight:400;color:#6b7280;">Decision </span><span style="font-weight:400;color:#111827;-webkit-text-stroke:0.45px #111827">accept</span><span style="font-weight:400;color:#6b7280;"> for </span><span style="font-weight:400;color:#111827;-webkit-text-stroke:0.45px #111827">7915945</span><span style="font-weight:400;color:#6b7280;"> succeeded</span></div>
<div class="t" style="left:1852.50px;top:750.70px;font-size:15px;line-height:15px;letter-spacing:-0.261px;font-weight:400;color:#6b7280;">Mar 4</div>
<div class="t" style="left:1507.50px;top:814.70px;font-size:15px;line-height:15px;letter-spacing:-0.003px;"><span style="font-weight:400;color:#6b7280;">Flagged as </span><span style="font-weight:400;color:#111827;-webkit-text-stroke:0.45px #111827">critical delivery</span><span style="font-weight:400;color:#6b7280;"> by </span><span style="font-weight:400;color:#111827;-webkit-text-stroke:0.45px #111827">Amy Harris</span></div>
<div class="t" style="left:1852.50px;top:814.70px;font-size:15px;line-height:15px;letter-spacing:-0.261px;font-weight:400;color:#6b7280;">Mar 4</div>
<!-- marker numbers inside schedule -->
<div class="t" style="left:1002.7px;top:412.8px;width:20px;height:20px;line-height:20px;text-align:center;color:#fff;font-size:13px;font-weight:700">1</div>
<div class="t" style="left:1002.7px;top:612.7px;width:20px;height:20px;line-height:20px;text-align:center;color:#fff;font-size:13px;font-weight:700">2</div>
<svg class="a" style="left:0;top:0" width="1926" height="1080" viewBox="0 0 1926 1080"><path d="M1300.90,443.60 L1303.13,448.93 L1308.89,449.40 L1304.51,453.17 L1305.84,458.80 L1300.90,455.80 L1295.96,458.80 L1297.29,453.17 L1292.91,449.40 L1298.67,448.93Z" fill="#6b7280" stroke="#6b7280" stroke-width="1.3" stroke-linejoin="round"/><path d="M1322.85,443.60 L1325.08,448.93 L1330.84,449.40 L1326.46,453.17 L1327.79,458.80 L1322.85,455.80 L1317.91,458.80 L1319.24,453.17 L1314.86,449.40 L1320.62,448.93Z" fill="#6b7280" stroke="#6b7280" stroke-width="1.3" stroke-linejoin="round"/><path d="M1344.80,443.60 L1347.03,448.93 L1352.79,449.40 L1348.41,453.17 L1349.74,458.80 L1344.80,455.80 L1339.86,458.80 L1341.19,453.17 L1336.81,449.40 L1342.57,448.93Z" fill="#6b7280" stroke="#6b7280" stroke-width="1.3" stroke-linejoin="round"/><path d="M1366.75,443.60 L1368.98,448.93 L1374.74,449.40 L1370.36,453.17 L1371.69,458.80 L1366.75,455.80 L1361.81,458.80 L1363.14,453.17 L1358.76,449.40 L1364.52,448.93Z" fill="#6b7280" stroke="#6b7280" stroke-width="1.3" stroke-linejoin="round"/><path d="M1388.70,444.10 L1390.87,449.01 L1396.21,449.56 L1392.22,453.14 L1393.34,458.39 L1388.70,455.70 L1384.06,458.39 L1385.18,453.14 L1381.19,449.56 L1386.53,449.01Z" fill="none" stroke="#6b7280" stroke-width="1.5" stroke-linejoin="round"/><path d="M1300.90,643.60 L1303.13,648.93 L1308.89,649.40 L1304.51,653.17 L1305.84,658.80 L1300.90,655.80 L1295.96,658.80 L1297.29,653.17 L1292.91,649.40 L1298.67,648.93Z" fill="#6b7280" stroke="#6b7280" stroke-width="1.3" stroke-linejoin="round"/><path d="M1322.85,643.60 L1325.08,648.93 L1330.84,649.40 L1326.46,653.17 L1327.79,658.80 L1322.85,655.80 L1317.91,658.80 L1319.24,653.17 L1314.86,649.40 L1320.62,648.93Z" fill="#6b7280" stroke="#6b7280" stroke-width="1.3" stroke-linejoin="round"/><path d="M1344.80,643.60 L1347.03,648.93 L1352.79,649.40 L1348.41,653.17 L1349.74,658.80 L1344.80,655.80 L1339.86,658.80 L1341.19,653.17 L1336.81,649.40 L1342.57,648.93Z" fill="#6b7280" stroke="#6b7280" stroke-width="1.3" stroke-linejoin="round"/><path d="M1366.75,643.60 L1368.98,648.93 L1374.74,649.40 L1370.36,653.17 L1371.69,658.80 L1366.75,655.80 L1361.81,658.80 L1363.14,653.17 L1358.76,649.40 L1364.52,648.93Z" fill="#6b7280" stroke="#6b7280" stroke-width="1.3" stroke-linejoin="round"/><path d="M1388.70,644.10 L1390.87,649.01 L1396.21,649.56 L1392.22,653.14 L1393.34,658.39 L1388.70,655.70 L1384.06,658.39 L1385.18,653.14 L1381.19,649.56 L1386.53,649.01Z" fill="none" stroke="#6b7280" stroke-width="1.5" stroke-linejoin="round"/></svg>
</body></html>
